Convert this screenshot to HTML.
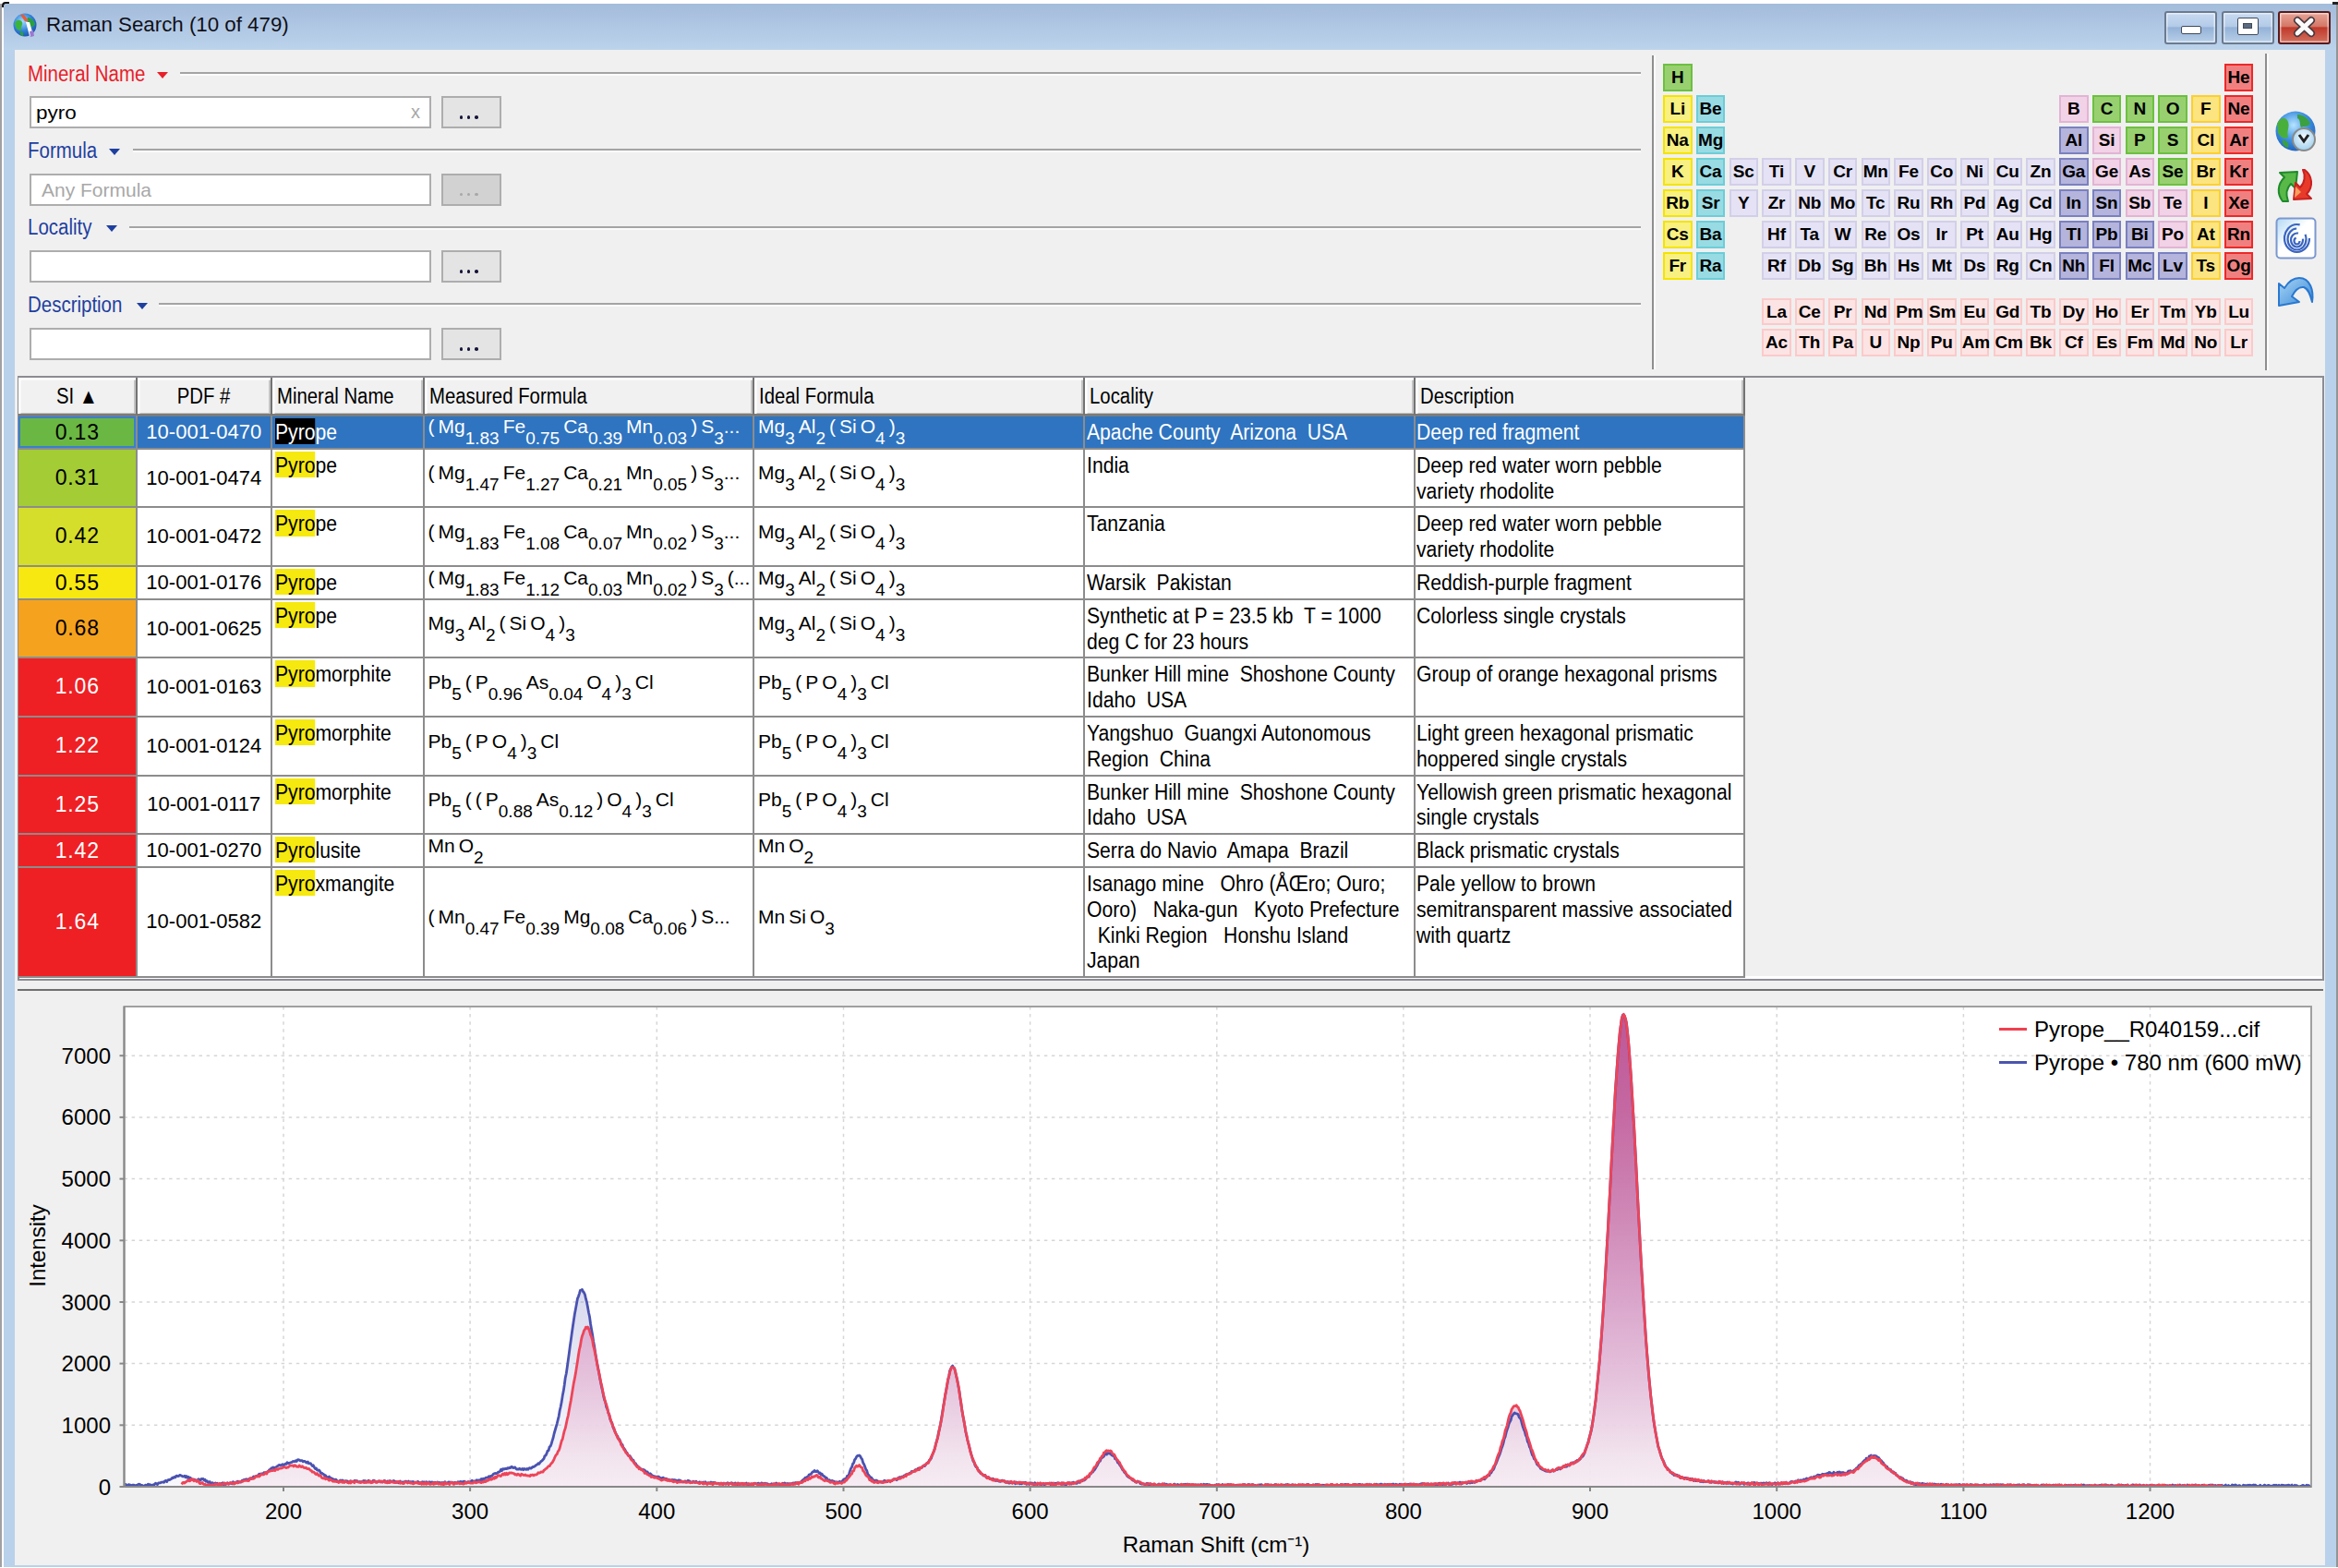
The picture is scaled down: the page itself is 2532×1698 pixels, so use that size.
<!DOCTYPE html>
<html><head><meta charset="utf-8">
<style>
*{margin:0;padding:0;box-sizing:border-box}
html,body{width:2532px;height:1698px;overflow:hidden;background:#ffffff}
body{position:relative;font-family:"Liberation Sans", sans-serif}
div{position:absolute}
.frame{left:0;top:4px;width:2532px;height:1693px;background:#b9d1ea;border-left:2px solid #a0a0a4;border-right:2px solid #949494;box-shadow:inset 2px 0 0 #fff}
.tbar{left:4px;top:4px;width:2526px;height:50px;background:linear-gradient(#a3bcdb,#bcd3ec)}
.content{left:16px;top:54px;width:2502px;height:1641px;background:#f0f0f0}
.title{left:50px;top:14px;font-size:22.3px;color:#101018;white-space:nowrap}
.lbl{font-size:23px;white-space:nowrap;line-height:22px;transform:scaleX(0.89);transform-origin:0 0}
.tri{width:0;height:0;border-left:6px solid transparent;border-right:6px solid transparent;border-top:7px solid}
.sep{height:2px;background:#a4a4a4;box-shadow:0 2px 0 #fbfbfb}
.inp{width:435px;height:35px;background:#fff;border:2px solid #adadad}
.btn{width:65px;height:35px;border:2px solid #adadad;text-align:center;font-size:22px;line-height:26px;font-weight:bold;letter-spacing:1px}
.itxt{font-size:21px;line-height:35px;color:#000;white-space:nowrap}
.el{width:31.5px;height:29.5px;border:2.5px solid;font-weight:bold;font-size:19px;line-height:26px;text-align:center;color:#000;letter-spacing:-0.2px;white-space:nowrap;overflow:visible}
.vsep{width:2px;background:#8e8e8e;box-shadow:2px 0 0 #fbfbfb}
.tpane{left:18.5px;top:407px;width:2498px;height:655px;border:2px solid #8c8c94;background:#f0f0f0;box-shadow:inset 0 -3px 0 #fff}
.hd{height:41.5px;background:#f1f1f1;border-right:2px solid #737373;border-bottom:3px solid #7c7c7c;box-shadow:inset 2.5px 2.5px 0 #fff, inset -2px -1px 0 #c4c4c4;font-size:21px;line-height:41px;padding:0 5px;white-space:nowrap;color:#000}
.hs{display:inline-block;font-size:23px;transform:scaleX(0.885)}
.rw{}
.gl{background:#8c8c8c}
.si{font-size:23px;text-align:center;letter-spacing:0.8px;text-indent:1px}
.cv{display:flex;align-items:center;font-size:21px;white-space:nowrap;overflow:hidden}
.ct{font-size:23.5px;line-height:27.8px;white-space:nowrap;transform:scaleX(0.9);transform-origin:0 0}
.hl{position:relative;padding:2px 0 0.3px 0}
.fm sub{font-size:19px;vertical-align:-11.5px;line-height:0}
.fm{padding-bottom:10px}
.sp{display:inline-block;width:4px}
.chart{position:absolute;left:0;top:0}
.ax{font-family:"Liberation Sans", sans-serif;font-size:24px;fill:#000}
</style></head><body>
<div class="frame"></div>
<div class="tbar"></div>
<div class="content"></div>
<div class="title">Raman Search (10 of 479)</div>
<div class="lbl" style="left:30px;top:68.5px;color:#e8202a">Mineral Name</div>
<div class="tri" style="left:170.0px;top:77.5px;border-top-color:#e8202a"></div>
<div class="sep" style="left:195px;top:78.0px;width:1582px"></div>
<div class="lbl" style="left:30px;top:151.5px;color:#1f3f9f">Formula</div>
<div class="tri" style="left:118.0px;top:160.5px;border-top-color:#1f3f9f"></div>
<div class="sep" style="left:144px;top:161.0px;width:1633px"></div>
<div class="lbl" style="left:30px;top:235.0px;color:#1f3f9f">Locality</div>
<div class="tri" style="left:114.5px;top:244.0px;border-top-color:#1f3f9f"></div>
<div class="sep" style="left:140px;top:244.5px;width:1637px"></div>
<div class="lbl" style="left:30px;top:318.5px;color:#1f3f9f">Description</div>
<div class="tri" style="left:148.0px;top:327.5px;border-top-color:#1f3f9f"></div>
<div class="sep" style="left:172px;top:328.0px;width:1605px"></div>
<div class="inp" style="left:32px;top:104.0px"></div>
<div class="btn" style="left:478px;top:104.0px;background:#e4e4e4"></div>
<div style="left:497.6px;top:125.2px;width:3.6px;height:3.6px;border-radius:50%;background:#15153a"></div>
<div style="left:505.9px;top:125.2px;width:3.6px;height:3.6px;border-radius:50%;background:#15153a"></div>
<div style="left:514.0px;top:125.2px;width:3.6px;height:3.6px;border-radius:50%;background:#15153a"></div>
<div class="inp" style="left:32px;top:187.5px"></div>
<div class="btn" style="left:478px;top:187.5px;background:#d2d2d2"></div>
<div style="left:497.6px;top:208.7px;width:3.6px;height:3.6px;border-radius:50%;background:#a8a8a8"></div>
<div style="left:505.9px;top:208.7px;width:3.6px;height:3.6px;border-radius:50%;background:#a8a8a8"></div>
<div style="left:514.0px;top:208.7px;width:3.6px;height:3.6px;border-radius:50%;background:#a8a8a8"></div>
<div class="inp" style="left:32px;top:271.2px"></div>
<div class="btn" style="left:478px;top:271.2px;background:#e4e4e4"></div>
<div style="left:497.6px;top:292.4px;width:3.6px;height:3.6px;border-radius:50%;background:#15153a"></div>
<div style="left:505.9px;top:292.4px;width:3.6px;height:3.6px;border-radius:50%;background:#15153a"></div>
<div style="left:514.0px;top:292.4px;width:3.6px;height:3.6px;border-radius:50%;background:#15153a"></div>
<div class="inp" style="left:32px;top:355.0px"></div>
<div class="btn" style="left:478px;top:355.0px;background:#e4e4e4"></div>
<div style="left:497.6px;top:376.2px;width:3.6px;height:3.6px;border-radius:50%;background:#15153a"></div>
<div style="left:505.9px;top:376.2px;width:3.6px;height:3.6px;border-radius:50%;background:#15153a"></div>
<div style="left:514.0px;top:376.2px;width:3.6px;height:3.6px;border-radius:50%;background:#15153a"></div>
<div class="itxt" style="left:39px;top:104px;transform:scaleX(1.07);transform-origin:0 0">pyro</div>
<div class="itxt" style="left:445px;top:104px;color:#a8a8a8;font-size:20px">x</div>
<div class="itxt" style="left:45px;top:187.5px;color:#a8a8a8">Any Formula</div>
<div class="vsep" style="left:1789px;top:60px;height:340px"></div>
<div class="vsep" style="left:2452.5px;top:58px;height:343px"></div>
<div class="el" style="left:1801.0px;top:69.0px;background:#98d070;border-color:#6cc040">H</div>
<div class="el" style="left:2408.8px;top:69.0px;background:#f08080;border-color:#ee2828">He</div>
<div class="el" style="left:1801.0px;top:103.1px;background:#f8f080;border-color:#f4e400">Li</div>
<div class="el" style="left:1836.8px;top:103.1px;background:#98dbe3;border-color:#6ccdd8">Be</div>
<div class="el" style="left:2230.0px;top:103.1px;background:#f2d2e6;border-color:#e2b4d4">B</div>
<div class="el" style="left:2265.8px;top:103.1px;background:#98d070;border-color:#6cc040">C</div>
<div class="el" style="left:2301.5px;top:103.1px;background:#98d070;border-color:#6cc040">N</div>
<div class="el" style="left:2337.2px;top:103.1px;background:#98d070;border-color:#6cc040">O</div>
<div class="el" style="left:2373.0px;top:103.1px;background:#fce480;border-color:#fcd030">F</div>
<div class="el" style="left:2408.8px;top:103.1px;background:#f08080;border-color:#ee2828">Ne</div>
<div class="el" style="left:1801.0px;top:137.1px;background:#f8f080;border-color:#f4e400">Na</div>
<div class="el" style="left:1836.8px;top:137.1px;background:#98dbe3;border-color:#6ccdd8">Mg</div>
<div class="el" style="left:2230.0px;top:137.1px;background:#b4b4dc;border-color:#7a80c0">Al</div>
<div class="el" style="left:2265.8px;top:137.1px;background:#f2d2e6;border-color:#e2b4d4">Si</div>
<div class="el" style="left:2301.5px;top:137.1px;background:#98d070;border-color:#6cc040">P</div>
<div class="el" style="left:2337.2px;top:137.1px;background:#98d070;border-color:#6cc040">S</div>
<div class="el" style="left:2373.0px;top:137.1px;background:#fce480;border-color:#fcd030">Cl</div>
<div class="el" style="left:2408.8px;top:137.1px;background:#f08080;border-color:#ee2828">Ar</div>
<div class="el" style="left:1801.0px;top:171.2px;background:#f8f080;border-color:#f4e400">K</div>
<div class="el" style="left:1836.8px;top:171.2px;background:#98dbe3;border-color:#6ccdd8">Ca</div>
<div class="el" style="left:1872.5px;top:171.2px;background:#e4e2f4;border-color:#d2cfe9">Sc</div>
<div class="el" style="left:1908.2px;top:171.2px;background:#e4e2f4;border-color:#d2cfe9">Ti</div>
<div class="el" style="left:1944.0px;top:171.2px;background:#e4e2f4;border-color:#d2cfe9">V</div>
<div class="el" style="left:1979.8px;top:171.2px;background:#e4e2f4;border-color:#d2cfe9">Cr</div>
<div class="el" style="left:2015.5px;top:171.2px;background:#e4e2f4;border-color:#d2cfe9">Mn</div>
<div class="el" style="left:2051.2px;top:171.2px;background:#e4e2f4;border-color:#d2cfe9">Fe</div>
<div class="el" style="left:2087.0px;top:171.2px;background:#e4e2f4;border-color:#d2cfe9">Co</div>
<div class="el" style="left:2122.8px;top:171.2px;background:#e4e2f4;border-color:#d2cfe9">Ni</div>
<div class="el" style="left:2158.5px;top:171.2px;background:#e4e2f4;border-color:#d2cfe9">Cu</div>
<div class="el" style="left:2194.2px;top:171.2px;background:#e4e2f4;border-color:#d2cfe9">Zn</div>
<div class="el" style="left:2230.0px;top:171.2px;background:#b4b4dc;border-color:#7a80c0">Ga</div>
<div class="el" style="left:2265.8px;top:171.2px;background:#f2d2e6;border-color:#e2b4d4">Ge</div>
<div class="el" style="left:2301.5px;top:171.2px;background:#f2d2e6;border-color:#e2b4d4">As</div>
<div class="el" style="left:2337.2px;top:171.2px;background:#98d070;border-color:#6cc040">Se</div>
<div class="el" style="left:2373.0px;top:171.2px;background:#fce480;border-color:#fcd030">Br</div>
<div class="el" style="left:2408.8px;top:171.2px;background:#f08080;border-color:#ee2828">Kr</div>
<div class="el" style="left:1801.0px;top:205.3px;background:#f8f080;border-color:#f4e400">Rb</div>
<div class="el" style="left:1836.8px;top:205.3px;background:#98dbe3;border-color:#6ccdd8">Sr</div>
<div class="el" style="left:1872.5px;top:205.3px;background:#e4e2f4;border-color:#d2cfe9">Y</div>
<div class="el" style="left:1908.2px;top:205.3px;background:#e4e2f4;border-color:#d2cfe9">Zr</div>
<div class="el" style="left:1944.0px;top:205.3px;background:#e4e2f4;border-color:#d2cfe9">Nb</div>
<div class="el" style="left:1979.8px;top:205.3px;background:#e4e2f4;border-color:#d2cfe9">Mo</div>
<div class="el" style="left:2015.5px;top:205.3px;background:#e4e2f4;border-color:#d2cfe9">Tc</div>
<div class="el" style="left:2051.2px;top:205.3px;background:#e4e2f4;border-color:#d2cfe9">Ru</div>
<div class="el" style="left:2087.0px;top:205.3px;background:#e4e2f4;border-color:#d2cfe9">Rh</div>
<div class="el" style="left:2122.8px;top:205.3px;background:#e4e2f4;border-color:#d2cfe9">Pd</div>
<div class="el" style="left:2158.5px;top:205.3px;background:#e4e2f4;border-color:#d2cfe9">Ag</div>
<div class="el" style="left:2194.2px;top:205.3px;background:#e4e2f4;border-color:#d2cfe9">Cd</div>
<div class="el" style="left:2230.0px;top:205.3px;background:#b4b4dc;border-color:#7a80c0">In</div>
<div class="el" style="left:2265.8px;top:205.3px;background:#b4b4dc;border-color:#7a80c0">Sn</div>
<div class="el" style="left:2301.5px;top:205.3px;background:#f2d2e6;border-color:#e2b4d4">Sb</div>
<div class="el" style="left:2337.2px;top:205.3px;background:#f2d2e6;border-color:#e2b4d4">Te</div>
<div class="el" style="left:2373.0px;top:205.3px;background:#fce480;border-color:#fcd030">I</div>
<div class="el" style="left:2408.8px;top:205.3px;background:#f08080;border-color:#ee2828">Xe</div>
<div class="el" style="left:1801.0px;top:239.3px;background:#f8f080;border-color:#f4e400">Cs</div>
<div class="el" style="left:1836.8px;top:239.3px;background:#98dbe3;border-color:#6ccdd8">Ba</div>
<div class="el" style="left:1908.2px;top:239.3px;background:#e4e2f4;border-color:#d2cfe9">Hf</div>
<div class="el" style="left:1944.0px;top:239.3px;background:#e4e2f4;border-color:#d2cfe9">Ta</div>
<div class="el" style="left:1979.8px;top:239.3px;background:#e4e2f4;border-color:#d2cfe9">W</div>
<div class="el" style="left:2015.5px;top:239.3px;background:#e4e2f4;border-color:#d2cfe9">Re</div>
<div class="el" style="left:2051.2px;top:239.3px;background:#e4e2f4;border-color:#d2cfe9">Os</div>
<div class="el" style="left:2087.0px;top:239.3px;background:#e4e2f4;border-color:#d2cfe9">Ir</div>
<div class="el" style="left:2122.8px;top:239.3px;background:#e4e2f4;border-color:#d2cfe9">Pt</div>
<div class="el" style="left:2158.5px;top:239.3px;background:#e4e2f4;border-color:#d2cfe9">Au</div>
<div class="el" style="left:2194.2px;top:239.3px;background:#e4e2f4;border-color:#d2cfe9">Hg</div>
<div class="el" style="left:2230.0px;top:239.3px;background:#b4b4dc;border-color:#7a80c0">Tl</div>
<div class="el" style="left:2265.8px;top:239.3px;background:#b4b4dc;border-color:#7a80c0">Pb</div>
<div class="el" style="left:2301.5px;top:239.3px;background:#b4b4dc;border-color:#7a80c0">Bi</div>
<div class="el" style="left:2337.2px;top:239.3px;background:#f2d2e6;border-color:#e2b4d4">Po</div>
<div class="el" style="left:2373.0px;top:239.3px;background:#fce480;border-color:#fcd030">At</div>
<div class="el" style="left:2408.8px;top:239.3px;background:#f08080;border-color:#ee2828">Rn</div>
<div class="el" style="left:1801.0px;top:273.4px;background:#f8f080;border-color:#f4e400">Fr</div>
<div class="el" style="left:1836.8px;top:273.4px;background:#98dbe3;border-color:#6ccdd8">Ra</div>
<div class="el" style="left:1908.2px;top:273.4px;background:#e4e2f4;border-color:#d2cfe9">Rf</div>
<div class="el" style="left:1944.0px;top:273.4px;background:#e4e2f4;border-color:#d2cfe9">Db</div>
<div class="el" style="left:1979.8px;top:273.4px;background:#e4e2f4;border-color:#d2cfe9">Sg</div>
<div class="el" style="left:2015.5px;top:273.4px;background:#e4e2f4;border-color:#d2cfe9">Bh</div>
<div class="el" style="left:2051.2px;top:273.4px;background:#e4e2f4;border-color:#d2cfe9">Hs</div>
<div class="el" style="left:2087.0px;top:273.4px;background:#e4e2f4;border-color:#d2cfe9">Mt</div>
<div class="el" style="left:2122.8px;top:273.4px;background:#e4e2f4;border-color:#d2cfe9">Ds</div>
<div class="el" style="left:2158.5px;top:273.4px;background:#e4e2f4;border-color:#d2cfe9">Rg</div>
<div class="el" style="left:2194.2px;top:273.4px;background:#e4e2f4;border-color:#d2cfe9">Cn</div>
<div class="el" style="left:2230.0px;top:273.4px;background:#b4b4dc;border-color:#7a80c0">Nh</div>
<div class="el" style="left:2265.8px;top:273.4px;background:#b4b4dc;border-color:#7a80c0">Fl</div>
<div class="el" style="left:2301.5px;top:273.4px;background:#b4b4dc;border-color:#7a80c0">Mc</div>
<div class="el" style="left:2337.2px;top:273.4px;background:#b4b4dc;border-color:#7a80c0">Lv</div>
<div class="el" style="left:2373.0px;top:273.4px;background:#fce480;border-color:#fcd030">Ts</div>
<div class="el" style="left:2408.8px;top:273.4px;background:#f08080;border-color:#ee2828">Og</div>
<div class="el" style="left:1908.2px;top:322.5px;background:#fde4e4;border-color:#fbcaca">La</div>
<div class="el" style="left:1944.0px;top:322.5px;background:#fde4e4;border-color:#fbcaca">Ce</div>
<div class="el" style="left:1979.8px;top:322.5px;background:#fde4e4;border-color:#fbcaca">Pr</div>
<div class="el" style="left:2015.5px;top:322.5px;background:#fde4e4;border-color:#fbcaca">Nd</div>
<div class="el" style="left:2051.2px;top:322.5px;background:#fde4e4;border-color:#fbcaca">Pm</div>
<div class="el" style="left:2087.0px;top:322.5px;background:#fde4e4;border-color:#fbcaca">Sm</div>
<div class="el" style="left:2122.8px;top:322.5px;background:#fde4e4;border-color:#fbcaca">Eu</div>
<div class="el" style="left:2158.5px;top:322.5px;background:#fde4e4;border-color:#fbcaca">Gd</div>
<div class="el" style="left:2194.2px;top:322.5px;background:#fde4e4;border-color:#fbcaca">Tb</div>
<div class="el" style="left:2230.0px;top:322.5px;background:#fde4e4;border-color:#fbcaca">Dy</div>
<div class="el" style="left:2265.8px;top:322.5px;background:#fde4e4;border-color:#fbcaca">Ho</div>
<div class="el" style="left:2301.5px;top:322.5px;background:#fde4e4;border-color:#fbcaca">Er</div>
<div class="el" style="left:2337.2px;top:322.5px;background:#fde4e4;border-color:#fbcaca">Tm</div>
<div class="el" style="left:2373.0px;top:322.5px;background:#fde4e4;border-color:#fbcaca">Yb</div>
<div class="el" style="left:2408.8px;top:322.5px;background:#fde4e4;border-color:#fbcaca">Lu</div>
<div class="el" style="left:1908.2px;top:356.2px;background:#fde4e4;border-color:#fbcaca">Ac</div>
<div class="el" style="left:1944.0px;top:356.2px;background:#fde4e4;border-color:#fbcaca">Th</div>
<div class="el" style="left:1979.8px;top:356.2px;background:#fde4e4;border-color:#fbcaca">Pa</div>
<div class="el" style="left:2015.5px;top:356.2px;background:#fde4e4;border-color:#fbcaca">U</div>
<div class="el" style="left:2051.2px;top:356.2px;background:#fde4e4;border-color:#fbcaca">Np</div>
<div class="el" style="left:2087.0px;top:356.2px;background:#fde4e4;border-color:#fbcaca">Pu</div>
<div class="el" style="left:2122.8px;top:356.2px;background:#fde4e4;border-color:#fbcaca">Am</div>
<div class="el" style="left:2158.5px;top:356.2px;background:#fde4e4;border-color:#fbcaca">Cm</div>
<div class="el" style="left:2194.2px;top:356.2px;background:#fde4e4;border-color:#fbcaca">Bk</div>
<div class="el" style="left:2230.0px;top:356.2px;background:#fde4e4;border-color:#fbcaca">Cf</div>
<div class="el" style="left:2265.8px;top:356.2px;background:#fde4e4;border-color:#fbcaca">Es</div>
<div class="el" style="left:2301.5px;top:356.2px;background:#fde4e4;border-color:#fbcaca">Fm</div>
<div class="el" style="left:2337.2px;top:356.2px;background:#fde4e4;border-color:#fbcaca">Md</div>
<div class="el" style="left:2373.0px;top:356.2px;background:#fde4e4;border-color:#fbcaca">No</div>
<div class="el" style="left:2408.8px;top:356.2px;background:#fde4e4;border-color:#fbcaca">Lr</div>
<div class="tpane"></div>
<div class="hd" style="left:19.5px;top:409px;width:129.5px;text-align:center"><span class="hs" style="transform-origin:50% 50%">SI &#9650;</span></div>
<div class="hd" style="left:149.0px;top:409px;width:145.5px;text-align:center"><span class="hs" style="transform-origin:50% 50%">PDF #</span></div>
<div class="hd" style="left:294.5px;top:409px;width:165.0px;text-align:left"><span class="hs" style="transform-origin:0 50%">Mineral Name</span></div>
<div class="hd" style="left:459.5px;top:409px;width:357.5px;text-align:left"><span class="hs" style="transform-origin:0 50%">Measured Formula</span></div>
<div class="hd" style="left:817.0px;top:409px;width:358.0px;text-align:left"><span class="hs" style="transform-origin:0 50%">Ideal Formula</span></div>
<div class="hd" style="left:1175.0px;top:409px;width:357.5px;text-align:left"><span class="hs" style="transform-origin:0 50%">Locality</span></div>
<div class="hd" style="left:1532.5px;top:409px;width:357.5px;text-align:left"><span class="hs" style="transform-origin:0 50%">Description</span></div>
<div class="rw" style="top:450.5px;height:34.3px;left:149.0px;width:1741.0px;background:#2f74c0"></div>
<div class="si" style="left:19.5px;top:450.5px;width:127.5px;height:34.3px;line-height:34.3px;background:#6ab843;color:#000000;box-shadow:inset 0 0 0 2px #3a7fd0;">0.13</div>
<div class="cv" style="left:149.0px;top:450.5px;width:143.5px;height:34.3px;color:#ffffff;justify-content:center"><span class="pdf" style="font-size:22px">10-001-0470</span></div>
<div class="ct" style="left:298.0px;top:454.5px;color:#ffffff"><span class="hl" style="background:#000000;color:#ffffff">Pyro</span>pe</div>
<div class="cv fm" style="left:463.5px;top:450.5px;width:351.5px;height:34.3px;color:#ffffff"><span>(<span class="sp"> </span>Mg<sub>1.83</sub><span class="sp"> </span>Fe<sub>0.75</sub><span class="sp"> </span>Ca<sub>0.39</sub><span class="sp"> </span>Mn<sub>0.03</sub><span class="sp"> </span>)<span class="sp"> </span>S<sub>3</sub>...</span></div>
<div class="cv fm" style="left:821.0px;top:450.5px;width:352.0px;height:34.3px;color:#ffffff"><span>Mg<sub>3</sub><span class="sp"> </span>Al<sub>2</sub><span class="sp"> </span>(<span class="sp"> </span>Si<span class="sp"> </span>O<sub>4</sub><span class="sp"> </span>)<sub>3</sub></span></div>
<div class="ct ml" style="left:1177.0px;top:454.5px;color:#ffffff">Apache County&nbsp; Arizona&nbsp; USA</div>
<div class="ct ml" style="left:1533.7px;top:454.5px;color:#ffffff">Deep red fragment</div>
<div class="gl" style="left:19.5px;top:484.8px;width:1870.5px;height:2px"></div>
<div class="rw" style="top:486.8px;height:61.5px;left:149.0px;width:1741.0px;background:#ffffff"></div>
<div class="si" style="left:19.5px;top:486.8px;width:127.5px;height:61.5px;line-height:61.5px;background:#a3cc35;color:#000000;">0.31</div>
<div class="cv" style="left:149.0px;top:486.8px;width:143.5px;height:61.5px;color:#000000;justify-content:center"><span class="pdf" style="font-size:22px">10-001-0474</span></div>
<div class="ct" style="left:298.0px;top:490.8px;color:#000000"><span class="hl" style="background:#f5e90f;color:#000000">Pyro</span>pe</div>
<div class="cv fm" style="left:463.5px;top:486.8px;width:351.5px;height:61.5px;color:#000000"><span>(<span class="sp"> </span>Mg<sub>1.47</sub><span class="sp"> </span>Fe<sub>1.27</sub><span class="sp"> </span>Ca<sub>0.21</sub><span class="sp"> </span>Mn<sub>0.05</sub><span class="sp"> </span>)<span class="sp"> </span>S<sub>3</sub>...</span></div>
<div class="cv fm" style="left:821.0px;top:486.8px;width:352.0px;height:61.5px;color:#000000"><span>Mg<sub>3</sub><span class="sp"> </span>Al<sub>2</sub><span class="sp"> </span>(<span class="sp"> </span>Si<span class="sp"> </span>O<sub>4</sub><span class="sp"> </span>)<sub>3</sub></span></div>
<div class="ct ml" style="left:1177.0px;top:490.8px;color:#000000">India</div>
<div class="ct ml" style="left:1533.7px;top:490.8px;color:#000000">Deep red water worn pebble<br>variety rhodolite</div>
<div class="gl" style="left:19.5px;top:548.3px;width:1870.5px;height:2px"></div>
<div class="rw" style="top:550.3px;height:61.5px;left:149.0px;width:1741.0px;background:#ffffff"></div>
<div class="si" style="left:19.5px;top:550.3px;width:127.5px;height:61.5px;line-height:61.5px;background:#d5de2a;color:#000000;">0.42</div>
<div class="cv" style="left:149.0px;top:550.3px;width:143.5px;height:61.5px;color:#000000;justify-content:center"><span class="pdf" style="font-size:22px">10-001-0472</span></div>
<div class="ct" style="left:298.0px;top:554.3px;color:#000000"><span class="hl" style="background:#f5e90f;color:#000000">Pyro</span>pe</div>
<div class="cv fm" style="left:463.5px;top:550.3px;width:351.5px;height:61.5px;color:#000000"><span>(<span class="sp"> </span>Mg<sub>1.83</sub><span class="sp"> </span>Fe<sub>1.08</sub><span class="sp"> </span>Ca<sub>0.07</sub><span class="sp"> </span>Mn<sub>0.02</sub><span class="sp"> </span>)<span class="sp"> </span>S<sub>3</sub>...</span></div>
<div class="cv fm" style="left:821.0px;top:550.3px;width:352.0px;height:61.5px;color:#000000"><span>Mg<sub>3</sub><span class="sp"> </span>Al<sub>2</sub><span class="sp"> </span>(<span class="sp"> </span>Si<span class="sp"> </span>O<sub>4</sub><span class="sp"> </span>)<sub>3</sub></span></div>
<div class="ct ml" style="left:1177.0px;top:554.3px;color:#000000">Tanzania</div>
<div class="ct ml" style="left:1533.7px;top:554.3px;color:#000000">Deep red water worn pebble<br>variety rhodolite</div>
<div class="gl" style="left:19.5px;top:611.8px;width:1870.5px;height:2px"></div>
<div class="rw" style="top:613.8px;height:34.2px;left:149.0px;width:1741.0px;background:#ffffff"></div>
<div class="si" style="left:19.5px;top:613.8px;width:127.5px;height:34.2px;line-height:34.2px;background:#f7e812;color:#000000;">0.55</div>
<div class="cv" style="left:149.0px;top:613.8px;width:143.5px;height:34.2px;color:#000000;justify-content:center"><span class="pdf" style="font-size:22px">10-001-0176</span></div>
<div class="ct" style="left:298.0px;top:617.8px;color:#000000"><span class="hl" style="background:#f5e90f;color:#000000">Pyro</span>pe</div>
<div class="cv fm" style="left:463.5px;top:613.8px;width:351.5px;height:34.2px;color:#000000"><span>(<span class="sp"> </span>Mg<sub>1.83</sub><span class="sp"> </span>Fe<sub>1.12</sub><span class="sp"> </span>Ca<sub>0.03</sub><span class="sp"> </span>Mn<sub>0.02</sub><span class="sp"> </span>)<span class="sp"> </span>S<sub>3</sub><span class="sp"> </span>(...</span></div>
<div class="cv fm" style="left:821.0px;top:613.8px;width:352.0px;height:34.2px;color:#000000"><span>Mg<sub>3</sub><span class="sp"> </span>Al<sub>2</sub><span class="sp"> </span>(<span class="sp"> </span>Si<span class="sp"> </span>O<sub>4</sub><span class="sp"> </span>)<sub>3</sub></span></div>
<div class="ct ml" style="left:1177.0px;top:617.8px;color:#000000">Warsik&nbsp; Pakistan</div>
<div class="ct ml" style="left:1533.7px;top:617.8px;color:#000000">Reddish-purple fragment</div>
<div class="gl" style="left:19.5px;top:648.0px;width:1870.5px;height:2px"></div>
<div class="rw" style="top:650.0px;height:61.3px;left:149.0px;width:1741.0px;background:#ffffff"></div>
<div class="si" style="left:19.5px;top:650.0px;width:127.5px;height:61.3px;line-height:61.3px;background:#f5a21f;color:#000000;">0.68</div>
<div class="cv" style="left:149.0px;top:650.0px;width:143.5px;height:61.3px;color:#000000;justify-content:center"><span class="pdf" style="font-size:22px">10-001-0625</span></div>
<div class="ct" style="left:298.0px;top:654.0px;color:#000000"><span class="hl" style="background:#f5e90f;color:#000000">Pyro</span>pe</div>
<div class="cv fm" style="left:463.5px;top:650.0px;width:351.5px;height:61.3px;color:#000000"><span>Mg<sub>3</sub><span class="sp"> </span>Al<sub>2</sub><span class="sp"> </span>(<span class="sp"> </span>Si<span class="sp"> </span>O<sub>4</sub><span class="sp"> </span>)<sub>3</sub></span></div>
<div class="cv fm" style="left:821.0px;top:650.0px;width:352.0px;height:61.3px;color:#000000"><span>Mg<sub>3</sub><span class="sp"> </span>Al<sub>2</sub><span class="sp"> </span>(<span class="sp"> </span>Si<span class="sp"> </span>O<sub>4</sub><span class="sp"> </span>)<sub>3</sub></span></div>
<div class="ct ml" style="left:1177.0px;top:654.0px;color:#000000">Synthetic at P = 23.5 kb&nbsp; T = 1000<br>deg C for 23 hours</div>
<div class="ct ml" style="left:1533.7px;top:654.0px;color:#000000">Colorless single crystals</div>
<div class="gl" style="left:19.5px;top:711.3px;width:1870.5px;height:2px"></div>
<div class="rw" style="top:713.3px;height:61.7px;left:149.0px;width:1741.0px;background:#ffffff"></div>
<div class="si" style="left:19.5px;top:713.3px;width:127.5px;height:61.7px;line-height:61.7px;background:#ee2024;color:#ffffff;">1.06</div>
<div class="cv" style="left:149.0px;top:713.3px;width:143.5px;height:61.7px;color:#000000;justify-content:center"><span class="pdf" style="font-size:22px">10-001-0163</span></div>
<div class="ct" style="left:298.0px;top:717.3px;color:#000000"><span class="hl" style="background:#f5e90f;color:#000000">Pyro</span>morphite</div>
<div class="cv fm" style="left:463.5px;top:713.3px;width:351.5px;height:61.7px;color:#000000"><span>Pb<sub>5</sub><span class="sp"> </span>(<span class="sp"> </span>P<sub>0.96</sub><span class="sp"> </span>As<sub>0.04</sub><span class="sp"> </span>O<sub>4</sub><span class="sp"> </span>)<sub>3</sub><span class="sp"> </span>Cl</span></div>
<div class="cv fm" style="left:821.0px;top:713.3px;width:352.0px;height:61.7px;color:#000000"><span>Pb<sub>5</sub><span class="sp"> </span>(<span class="sp"> </span>P<span class="sp"> </span>O<sub>4</sub><span class="sp"> </span>)<sub>3</sub><span class="sp"> </span>Cl</span></div>
<div class="ct ml" style="left:1177.0px;top:717.3px;color:#000000">Bunker Hill mine&nbsp; Shoshone County<br>Idaho&nbsp; USA</div>
<div class="ct ml" style="left:1533.7px;top:717.3px;color:#000000">Group of orange hexagonal prisms</div>
<div class="gl" style="left:19.5px;top:775.0px;width:1870.5px;height:2px"></div>
<div class="rw" style="top:777.0px;height:61.6px;left:149.0px;width:1741.0px;background:#ffffff"></div>
<div class="si" style="left:19.5px;top:777.0px;width:127.5px;height:61.6px;line-height:61.6px;background:#ee2024;color:#ffffff;">1.22</div>
<div class="cv" style="left:149.0px;top:777.0px;width:143.5px;height:61.6px;color:#000000;justify-content:center"><span class="pdf" style="font-size:22px">10-001-0124</span></div>
<div class="ct" style="left:298.0px;top:781.0px;color:#000000"><span class="hl" style="background:#f5e90f;color:#000000">Pyro</span>morphite</div>
<div class="cv fm" style="left:463.5px;top:777.0px;width:351.5px;height:61.6px;color:#000000"><span>Pb<sub>5</sub><span class="sp"> </span>(<span class="sp"> </span>P<span class="sp"> </span>O<sub>4</sub><span class="sp"> </span>)<sub>3</sub><span class="sp"> </span>Cl</span></div>
<div class="cv fm" style="left:821.0px;top:777.0px;width:352.0px;height:61.6px;color:#000000"><span>Pb<sub>5</sub><span class="sp"> </span>(<span class="sp"> </span>P<span class="sp"> </span>O<sub>4</sub><span class="sp"> </span>)<sub>3</sub><span class="sp"> </span>Cl</span></div>
<div class="ct ml" style="left:1177.0px;top:781.0px;color:#000000">Yangshuo&nbsp; Guangxi Autonomous<br>Region&nbsp; China</div>
<div class="ct ml" style="left:1533.7px;top:781.0px;color:#000000">Light green hexagonal prismatic<br>hoppered single crystals</div>
<div class="gl" style="left:19.5px;top:838.6px;width:1870.5px;height:2px"></div>
<div class="rw" style="top:840.6px;height:61.4px;left:149.0px;width:1741.0px;background:#ffffff"></div>
<div class="si" style="left:19.5px;top:840.6px;width:127.5px;height:61.4px;line-height:61.4px;background:#ee2024;color:#ffffff;">1.25</div>
<div class="cv" style="left:149.0px;top:840.6px;width:143.5px;height:61.4px;color:#000000;justify-content:center"><span class="pdf" style="font-size:22px">10-001-0117</span></div>
<div class="ct" style="left:298.0px;top:844.6px;color:#000000"><span class="hl" style="background:#f5e90f;color:#000000">Pyro</span>morphite</div>
<div class="cv fm" style="left:463.5px;top:840.6px;width:351.5px;height:61.4px;color:#000000"><span>Pb<sub>5</sub><span class="sp"> </span>(<span class="sp"> </span>(<span class="sp"> </span>P<sub>0.88</sub><span class="sp"> </span>As<sub>0.12</sub><span class="sp"> </span>)<span class="sp"> </span>O<sub>4</sub><span class="sp"> </span>)<sub>3</sub><span class="sp"> </span>Cl</span></div>
<div class="cv fm" style="left:821.0px;top:840.6px;width:352.0px;height:61.4px;color:#000000"><span>Pb<sub>5</sub><span class="sp"> </span>(<span class="sp"> </span>P<span class="sp"> </span>O<sub>4</sub><span class="sp"> </span>)<sub>3</sub><span class="sp"> </span>Cl</span></div>
<div class="ct ml" style="left:1177.0px;top:844.6px;color:#000000">Bunker Hill mine&nbsp; Shoshone County<br>Idaho&nbsp; USA</div>
<div class="ct ml" style="left:1533.7px;top:844.6px;color:#000000">Yellowish green prismatic hexagonal<br>single crystals</div>
<div class="gl" style="left:19.5px;top:902.0px;width:1870.5px;height:2px"></div>
<div class="rw" style="top:904.0px;height:34.0px;left:149.0px;width:1741.0px;background:#ffffff"></div>
<div class="si" style="left:19.5px;top:904.0px;width:127.5px;height:34.0px;line-height:34.0px;background:#ee2024;color:#ffffff;">1.42</div>
<div class="cv" style="left:149.0px;top:904.0px;width:143.5px;height:34.0px;color:#000000;justify-content:center"><span class="pdf" style="font-size:22px">10-001-0270</span></div>
<div class="ct" style="left:298.0px;top:908.0px;color:#000000"><span class="hl" style="background:#f5e90f;color:#000000">Pyro</span>lusite</div>
<div class="cv fm" style="left:463.5px;top:904.0px;width:351.5px;height:34.0px;color:#000000"><span>Mn<span class="sp"> </span>O<sub>2</sub></span></div>
<div class="cv fm" style="left:821.0px;top:904.0px;width:352.0px;height:34.0px;color:#000000"><span>Mn<span class="sp"> </span>O<sub>2</sub></span></div>
<div class="ct ml" style="left:1177.0px;top:908.0px;color:#000000">Serra do Navio&nbsp; Amapa&nbsp; Brazil</div>
<div class="ct ml" style="left:1533.7px;top:908.0px;color:#000000">Black prismatic crystals</div>
<div class="gl" style="left:19.5px;top:938.0px;width:1870.5px;height:2px"></div>
<div class="rw" style="top:940.0px;height:116.8px;left:149.0px;width:1741.0px;background:#ffffff"></div>
<div class="si" style="left:19.5px;top:940.0px;width:127.5px;height:116.8px;line-height:116.8px;background:#ee2024;color:#ffffff;">1.64</div>
<div class="cv" style="left:149.0px;top:940.0px;width:143.5px;height:116.8px;color:#000000;justify-content:center"><span class="pdf" style="font-size:22px">10-001-0582</span></div>
<div class="ct" style="left:298.0px;top:944.0px;color:#000000"><span class="hl" style="background:#f5e90f;color:#000000">Pyro</span>xmangite</div>
<div class="cv fm" style="left:463.5px;top:940.0px;width:351.5px;height:116.8px;color:#000000"><span>(<span class="sp"> </span>Mn<sub>0.47</sub><span class="sp"> </span>Fe<sub>0.39</sub><span class="sp"> </span>Mg<sub>0.08</sub><span class="sp"> </span>Ca<sub>0.06</sub><span class="sp"> </span>)<span class="sp"> </span>S...</span></div>
<div class="cv fm" style="left:821.0px;top:940.0px;width:352.0px;height:116.8px;color:#000000"><span>Mn<span class="sp"> </span>Si<span class="sp"> </span>O<sub>3</sub></span></div>
<div class="ct ml" style="left:1177.0px;top:944.0px;color:#000000">Isanago mine&nbsp;&nbsp; Ohro (&#197;&#338;ro; Ouro;<br>Ooro)&nbsp;&nbsp; Naka-gun&nbsp;&nbsp; Kyoto Prefecture<br>&nbsp; Kinki Region&nbsp;&nbsp; Honshu Island<br>Japan</div>
<div class="ct ml" style="left:1533.7px;top:944.0px;color:#000000">Pale yellow to brown<br>semitransparent massive associated<br>with quartz</div>
<div class="gl" style="left:19.5px;top:1056.8px;width:1870.5px;height:2px"></div>
<div class="gl" style="left:147.0px;top:450px;width:2px;height:608.8px"></div>
<div class="gl" style="left:292.5px;top:450px;width:2px;height:608.8px"></div>
<div class="gl" style="left:457.5px;top:450px;width:2px;height:608.8px"></div>
<div class="gl" style="left:815.0px;top:450px;width:2px;height:608.8px"></div>
<div class="gl" style="left:1173.0px;top:450px;width:2px;height:608.8px"></div>
<div class="gl" style="left:1530.5px;top:450px;width:2px;height:608.8px"></div>
<div class="gl" style="left:1888.0px;top:450px;width:2px;height:608.8px"></div>
<div style="left:19px;top:1071px;width:2497px;height:2px;background:#707070"></div>
<svg class="chart" width="2532" height="1698" viewBox="0 0 2532 1698">
<defs><linearGradient id="gr" gradientUnits="userSpaceOnUse" x1="0" y1="1090" x2="0" y2="1610"><stop offset="0" stop-color="#bf5090"/><stop offset="0.21" stop-color="#c6619d"/><stop offset="0.40" stop-color="#ce7daf"/><stop offset="0.60" stop-color="#d99fc7"/><stop offset="0.79" stop-color="#e6c2dc"/><stop offset="0.94" stop-color="#f2e3ed"/><stop offset="1" stop-color="#f6ebf2"/></linearGradient>
<linearGradient id="gb" gradientUnits="userSpaceOnUse" x1="0" y1="1090" x2="0" y2="1610"><stop offset="0" stop-color="#5058b0" stop-opacity="0.55"/><stop offset="0.6" stop-color="#8088c8" stop-opacity="0.3"/><stop offset="1" stop-color="#a0a8e0" stop-opacity="0.08"/></linearGradient>
<clipPath id="cp"><rect x="134.5" y="1090.0" width="2368.5" height="520.0"/></clipPath></defs>
<rect x="134.5" y="1090.0" width="2368.5" height="520.0" fill="#ffffff"/>
<line x1="307.0" y1="1090.0" x2="307.0" y2="1610.0" stroke="#d6d6d6" stroke-width="1.5" stroke-dasharray="3.5 4.6"/>
<line x1="509.1" y1="1090.0" x2="509.1" y2="1610.0" stroke="#d6d6d6" stroke-width="1.5" stroke-dasharray="3.5 4.6"/>
<line x1="711.3" y1="1090.0" x2="711.3" y2="1610.0" stroke="#d6d6d6" stroke-width="1.5" stroke-dasharray="3.5 4.6"/>
<line x1="913.5" y1="1090.0" x2="913.5" y2="1610.0" stroke="#d6d6d6" stroke-width="1.5" stroke-dasharray="3.5 4.6"/>
<line x1="1115.6" y1="1090.0" x2="1115.6" y2="1610.0" stroke="#d6d6d6" stroke-width="1.5" stroke-dasharray="3.5 4.6"/>
<line x1="1317.8" y1="1090.0" x2="1317.8" y2="1610.0" stroke="#d6d6d6" stroke-width="1.5" stroke-dasharray="3.5 4.6"/>
<line x1="1519.9" y1="1090.0" x2="1519.9" y2="1610.0" stroke="#d6d6d6" stroke-width="1.5" stroke-dasharray="3.5 4.6"/>
<line x1="1722.0" y1="1090.0" x2="1722.0" y2="1610.0" stroke="#d6d6d6" stroke-width="1.5" stroke-dasharray="3.5 4.6"/>
<line x1="1924.2" y1="1090.0" x2="1924.2" y2="1610.0" stroke="#d6d6d6" stroke-width="1.5" stroke-dasharray="3.5 4.6"/>
<line x1="2126.4" y1="1090.0" x2="2126.4" y2="1610.0" stroke="#d6d6d6" stroke-width="1.5" stroke-dasharray="3.5 4.6"/>
<line x1="2328.5" y1="1090.0" x2="2328.5" y2="1610.0" stroke="#d6d6d6" stroke-width="1.5" stroke-dasharray="3.5 4.6"/>
<line x1="134.5" y1="1543.3" x2="2503.0" y2="1543.3" stroke="#d6d6d6" stroke-width="1.5" stroke-dasharray="3.5 4.6"/>
<line x1="134.5" y1="1476.6" x2="2503.0" y2="1476.6" stroke="#d6d6d6" stroke-width="1.5" stroke-dasharray="3.5 4.6"/>
<line x1="134.5" y1="1410.0" x2="2503.0" y2="1410.0" stroke="#d6d6d6" stroke-width="1.5" stroke-dasharray="3.5 4.6"/>
<line x1="134.5" y1="1343.3" x2="2503.0" y2="1343.3" stroke="#d6d6d6" stroke-width="1.5" stroke-dasharray="3.5 4.6"/>
<line x1="134.5" y1="1276.6" x2="2503.0" y2="1276.6" stroke="#d6d6d6" stroke-width="1.5" stroke-dasharray="3.5 4.6"/>
<line x1="134.5" y1="1209.9" x2="2503.0" y2="1209.9" stroke="#d6d6d6" stroke-width="1.5" stroke-dasharray="3.5 4.6"/>
<line x1="134.5" y1="1143.2" x2="2503.0" y2="1143.2" stroke="#d6d6d6" stroke-width="1.5" stroke-dasharray="3.5 4.6"/>
<g clip-path="url(#cp)">
<path d="M135.2 1607.5 L136.2 1607.5 L137.2 1609.4 L138.2 1609.4 L139.2 1607.7 L140.2 1607.9 L141.2 1608.1 L142.2 1608.8 L143.3 1608.2 L144.3 1608.2 L145.3 1608.2 L146.3 1609.1 L147.3 1608.5 L148.3 1608.6 L149.3 1607.8 L150.3 1607.2 L151.3 1607.3 L152.4 1608.2 L153.4 1608.4 L154.4 1608.7 L155.4 1609.2 L156.4 1609.2 L157.4 1608.2 L158.4 1608.5 L159.4 1608.3 L160.4 1607.2 L161.5 1607.9 L162.5 1607.7 L163.5 1608.4 L164.5 1608.7 L165.5 1608.0 L166.5 1608.3 L167.5 1607.4 L168.5 1606.2 L169.5 1606.7 L170.5 1607.6 L171.6 1605.9 L172.6 1605.9 L173.6 1605.8 L174.6 1605.2 L175.6 1605.2 L176.6 1604.8 L177.6 1605.4 L178.6 1603.7 L179.6 1603.3 L180.7 1604.6 L181.7 1602.9 L182.7 1602.5 L183.7 1602.5 L184.7 1601.9 L185.7 1601.5 L186.7 1600.1 L187.7 1600.5 L188.7 1599.4 L189.8 1599.9 L190.8 1598.4 L191.8 1598.1 L192.8 1598.7 L193.8 1598.3 L194.8 1597.4 L195.8 1597.8 L196.8 1598.3 L197.8 1598.9 L198.8 1598.9 L199.9 1598.3 L200.9 1599.8 L201.9 1598.6 L202.9 1600.3 L203.9 1599.3 L204.9 1601.0 L205.9 1600.1 L206.9 1601.0 L207.9 1601.8 L209.0 1602.1 L210.0 1602.1 L211.0 1602.4 L212.0 1603.1 L213.0 1603.4 L214.0 1602.7 L215.0 1601.7 L216.0 1602.2 L217.0 1603.2 L218.1 1601.5 L219.1 1601.6 L220.1 1601.4 L221.1 1603.1 L222.1 1602.3 L223.1 1604.3 L224.1 1603.6 L225.1 1604.9 L226.1 1605.5 L227.2 1604.6 L228.2 1606.6 L229.2 1606.0 L230.2 1605.6 L231.2 1607.0 L232.2 1607.3 L233.2 1605.9 L234.2 1606.9 L235.2 1606.3 L236.2 1607.8 L237.3 1607.1 L238.3 1607.5 L239.3 1606.4 L240.3 1607.6 L241.3 1605.7 L242.3 1607.6 L243.3 1606.1 L244.3 1607.5 L245.3 1606.9 L246.4 1605.7 L247.4 1607.0 L248.4 1606.8 L249.4 1605.6 L250.4 1606.2 L251.4 1606.8 L252.4 1604.6 L253.4 1606.3 L254.4 1606.3 L255.5 1605.5 L256.5 1604.8 L257.5 1604.3 L258.5 1605.4 L259.5 1604.8 L260.5 1605.2 L261.5 1604.1 L262.5 1603.1 L263.5 1602.9 L264.5 1602.3 L265.6 1602.3 L266.6 1601.8 L267.6 1601.8 L268.6 1602.0 L269.6 1602.2 L270.6 1600.9 L271.6 1601.3 L272.6 1601.4 L273.6 1600.2 L274.7 1598.9 L275.7 1600.1 L276.7 1598.7 L277.7 1598.7 L278.7 1598.0 L279.7 1598.3 L280.7 1596.1 L281.7 1597.2 L282.7 1596.0 L283.8 1595.9 L284.8 1596.3 L285.8 1594.6 L286.8 1595.0 L287.8 1594.7 L288.8 1594.3 L289.8 1593.5 L290.8 1593.2 L291.8 1591.5 L292.8 1591.3 L293.9 1589.8 L294.9 1589.5 L295.9 1588.9 L296.9 1590.1 L297.9 1589.2 L298.9 1589.1 L299.9 1588.0 L300.9 1587.5 L301.9 1586.7 L303.0 1586.5 L304.0 1587.1 L305.0 1586.4 L306.0 1585.8 L307.0 1586.6 L308.0 1586.2 L309.0 1585.1 L310.0 1585.4 L311.0 1583.8 L312.1 1584.5 L313.1 1584.5 L314.1 1584.1 L315.1 1583.7 L316.1 1583.5 L317.1 1582.6 L318.1 1582.5 L319.1 1582.7 L320.1 1581.8 L321.2 1582.5 L322.2 1580.9 L323.2 1580.7 L324.2 1581.1 L325.2 1581.8 L326.2 1581.6 L327.2 1581.6 L328.2 1582.9 L329.2 1582.3 L330.2 1582.4 L331.3 1583.5 L332.3 1584.1 L333.3 1583.1 L334.3 1584.6 L335.3 1584.8 L336.3 1584.7 L337.3 1586.0 L338.3 1587.5 L339.3 1586.8 L340.4 1588.9 L341.4 1590.5 L342.4 1589.9 L343.4 1591.9 L344.4 1592.3 L345.4 1592.0 L346.4 1593.2 L347.4 1595.4 L348.4 1595.2 L349.5 1596.0 L350.5 1596.5 L351.5 1597.8 L352.5 1597.6 L353.5 1599.3 L354.5 1599.5 L355.5 1599.8 L356.5 1599.1 L357.5 1601.4 L358.5 1600.4 L359.6 1602.0 L360.6 1601.5 L361.6 1602.3 L362.6 1602.4 L363.6 1602.1 L364.6 1603.1 L365.6 1603.9 L366.6 1604.1 L367.6 1604.3 L368.7 1602.9 L369.7 1603.4 L370.7 1602.9 L371.7 1603.5 L372.7 1605.1 L373.7 1603.8 L374.7 1603.6 L375.7 1603.8 L376.7 1604.3 L377.8 1604.6 L378.8 1604.4 L379.8 1603.7 L380.8 1604.9 L381.8 1604.3 L382.8 1604.4 L383.8 1603.4 L384.8 1603.7 L385.8 1603.5 L386.8 1603.7 L387.9 1604.8 L388.9 1604.9 L389.9 1604.4 L390.9 1604.9 L391.9 1604.5 L392.9 1603.9 L393.9 1603.4 L394.9 1604.1 L395.9 1603.6 L397.0 1605.1 L398.0 1604.6 L399.0 1603.2 L400.0 1605.0 L401.0 1604.4 L402.0 1605.1 L403.0 1605.1 L404.0 1603.4 L405.0 1603.2 L406.1 1603.9 L407.1 1605.0 L408.1 1604.7 L409.1 1604.8 L410.1 1603.9 L411.1 1603.9 L412.1 1604.4 L413.1 1604.2 L414.1 1605.1 L415.2 1604.2 L416.2 1603.4 L417.2 1603.8 L418.2 1605.2 L419.2 1604.3 L420.2 1603.9 L421.2 1604.9 L422.2 1603.6 L423.2 1604.6 L424.2 1604.1 L425.3 1604.7 L426.3 1603.5 L427.3 1604.0 L428.3 1604.5 L429.3 1605.4 L430.3 1604.8 L431.3 1605.7 L432.3 1604.6 L433.3 1604.0 L434.4 1605.5 L435.4 1604.9 L436.4 1605.0 L437.4 1605.2 L438.4 1604.5 L439.4 1604.1 L440.4 1604.6 L441.4 1605.2 L442.4 1604.1 L443.5 1605.5 L444.5 1604.7 L445.5 1604.9 L446.5 1604.7 L447.5 1604.5 L448.5 1605.9 L449.5 1605.1 L450.5 1605.6 L451.5 1605.0 L452.5 1604.4 L453.6 1605.2 L454.6 1606.5 L455.6 1605.6 L456.6 1605.1 L457.6 1604.7 L458.6 1605.2 L459.6 1604.9 L460.6 1606.6 L461.6 1604.7 L462.7 1605.1 L463.7 1605.4 L464.7 1604.8 L465.7 1604.8 L466.7 1606.5 L467.7 1605.0 L468.7 1605.1 L469.7 1606.3 L470.7 1605.2 L471.8 1605.5 L472.8 1606.4 L473.8 1605.0 L474.8 1606.5 L475.8 1605.4 L476.8 1605.8 L477.8 1606.2 L478.8 1605.5 L479.8 1605.7 L480.8 1606.3 L481.9 1604.6 L482.9 1606.5 L483.9 1606.6 L484.9 1605.6 L485.9 1604.8 L486.9 1605.2 L487.9 1605.0 L488.9 1605.5 L489.9 1605.1 L491.0 1605.8 L492.0 1605.9 L493.0 1605.3 L494.0 1606.3 L495.0 1606.2 L496.0 1604.7 L497.0 1605.9 L498.0 1604.6 L499.0 1604.5 L500.1 1605.2 L501.1 1604.6 L502.1 1604.3 L503.1 1604.1 L504.1 1605.6 L505.1 1605.4 L506.1 1604.9 L507.1 1604.6 L508.1 1604.9 L509.1 1605.4 L510.2 1604.2 L511.2 1603.2 L512.2 1604.4 L513.2 1603.9 L514.2 1604.1 L515.2 1603.8 L516.2 1602.7 L517.2 1603.7 L518.2 1602.8 L519.3 1602.9 L520.3 1602.6 L521.3 1601.5 L522.3 1603.1 L523.3 1601.2 L524.3 1602.0 L525.3 1600.9 L526.3 1600.2 L527.3 1600.1 L528.4 1600.2 L529.4 1598.8 L530.4 1600.0 L531.4 1598.3 L532.4 1598.3 L533.4 1597.5 L534.4 1596.2 L535.4 1595.7 L536.4 1595.5 L537.5 1595.6 L538.5 1595.2 L539.5 1594.1 L540.5 1594.0 L541.5 1593.3 L542.5 1591.3 L543.5 1592.6 L544.5 1590.6 L545.5 1591.1 L546.5 1590.7 L547.6 1590.4 L548.6 1590.7 L549.6 1589.6 L550.6 1590.1 L551.6 1589.4 L552.6 1589.7 L553.6 1588.5 L554.6 1588.5 L555.6 1589.6 L556.7 1589.3 L557.7 1588.9 L558.7 1590.3 L559.7 1591.0 L560.7 1590.9 L561.7 1591.2 L562.7 1590.3 L563.7 1591.1 L564.7 1591.3 L565.8 1590.5 L566.8 1591.7 L567.8 1590.5 L568.8 1590.9 L569.8 1591.4 L570.8 1590.4 L571.8 1591.3 L572.8 1590.0 L573.8 1589.6 L574.8 1590.2 L575.9 1589.5 L576.9 1588.5 L577.9 1588.5 L578.9 1588.0 L579.9 1587.1 L580.9 1586.3 L581.9 1586.0 L582.9 1584.7 L583.9 1585.3 L585.0 1583.6 L586.0 1582.5 L587.0 1581.9 L588.0 1580.6 L589.0 1579.7 L590.0 1576.5 L591.0 1576.2 L592.0 1574.1 L593.0 1571.3 L594.1 1570.7 L595.1 1566.8 L596.1 1566.1 L597.1 1563.7 L598.1 1560.1 L599.1 1557.0 L600.1 1552.5 L601.1 1549.0 L602.1 1545.5 L603.1 1542.1 L604.2 1537.6 L605.2 1533.6 L606.2 1527.5 L607.2 1523.3 L608.2 1518.1 L609.2 1511.6 L610.2 1506.6 L611.2 1500.0 L612.2 1492.2 L613.3 1487.2 L614.3 1480.2 L615.3 1473.0 L616.3 1465.7 L617.3 1458.0 L618.3 1451.1 L619.3 1443.7 L620.3 1436.8 L621.3 1430.0 L622.4 1422.8 L623.4 1417.4 L624.4 1411.9 L625.4 1406.4 L626.4 1404.0 L627.4 1400.8 L628.4 1397.3 L629.4 1397.1 L630.4 1396.4 L631.5 1398.7 L632.5 1399.8 L633.5 1402.0 L634.5 1406.7 L635.5 1410.2 L636.5 1415.4 L637.5 1421.3 L638.5 1425.8 L639.5 1433.2 L640.5 1439.2 L641.6 1445.2 L642.6 1452.2 L643.6 1457.4 L644.6 1464.1 L645.6 1470.1 L646.6 1476.1 L647.6 1480.9 L648.6 1486.3 L649.6 1491.9 L650.7 1497.7 L651.7 1502.6 L652.7 1506.9 L653.7 1512.2 L654.7 1516.2 L655.7 1518.2 L656.7 1523.8 L657.7 1525.5 L658.7 1529.4 L659.8 1532.1 L660.8 1536.9 L661.8 1539.2 L662.8 1540.9 L663.8 1545.2 L664.8 1547.5 L665.8 1549.4 L666.8 1552.0 L667.8 1554.3 L668.8 1555.3 L669.9 1558.6 L670.9 1558.7 L671.9 1561.2 L672.9 1564.4 L673.9 1564.3 L674.9 1567.4 L675.9 1568.6 L676.9 1570.0 L677.9 1572.4 L679.0 1573.2 L680.0 1575.6 L681.0 1576.7 L682.0 1576.5 L683.0 1578.0 L684.0 1579.9 L685.0 1580.8 L686.0 1581.5 L687.0 1584.2 L688.1 1584.5 L689.1 1586.3 L690.1 1587.4 L691.1 1588.3 L692.1 1589.0 L693.1 1590.2 L694.1 1590.7 L695.1 1591.2 L696.1 1591.4 L697.1 1591.6 L698.2 1592.2 L699.2 1593.3 L700.2 1594.3 L701.2 1594.0 L702.2 1596.2 L703.2 1596.9 L704.2 1595.8 L705.2 1596.7 L706.2 1598.0 L707.3 1598.1 L708.3 1598.7 L709.3 1598.8 L710.3 1599.1 L711.3 1599.5 L712.3 1599.0 L713.3 1599.2 L714.3 1600.0 L715.3 1600.5 L716.4 1601.1 L717.4 1600.4 L718.4 1600.1 L719.4 1601.9 L720.4 1601.1 L721.4 1601.3 L722.4 1601.6 L723.4 1603.1 L724.4 1602.2 L725.5 1603.1 L726.5 1603.2 L727.5 1602.5 L728.5 1602.5 L729.5 1602.7 L730.5 1602.6 L731.5 1602.8 L732.5 1603.4 L733.5 1604.4 L734.5 1603.0 L735.6 1603.0 L736.6 1603.1 L737.6 1603.7 L738.6 1604.9 L739.6 1604.7 L740.6 1605.0 L741.6 1603.9 L742.6 1604.2 L743.6 1605.1 L744.7 1603.5 L745.7 1603.5 L746.7 1603.8 L747.7 1604.8 L748.7 1605.2 L749.7 1605.4 L750.7 1604.2 L751.7 1604.5 L752.7 1605.5 L753.8 1604.2 L754.8 1605.0 L755.8 1605.4 L756.8 1605.4 L757.8 1604.8 L758.8 1605.5 L759.8 1605.1 L760.8 1606.3 L761.8 1605.1 L762.8 1606.0 L763.9 1604.7 L764.9 1606.3 L765.9 1606.1 L766.9 1605.7 L767.9 1606.0 L768.9 1605.8 L769.9 1605.0 L770.9 1606.5 L771.9 1605.4 L773.0 1605.6 L774.0 1605.4 L775.0 1606.2 L776.0 1606.2 L777.0 1606.5 L778.0 1606.2 L779.0 1606.7 L780.0 1606.9 L781.0 1606.3 L782.1 1606.9 L783.1 1606.4 L784.1 1606.2 L785.1 1606.8 L786.1 1607.1 L787.1 1606.2 L788.1 1605.7 L789.1 1607.1 L790.1 1606.3 L791.1 1606.2 L792.2 1605.7 L793.2 1606.2 L794.2 1607.0 L795.2 1607.2 L796.2 1605.9 L797.2 1607.1 L798.2 1607.7 L799.2 1605.9 L800.2 1607.4 L801.3 1607.1 L802.3 1607.1 L803.3 1607.3 L804.3 1606.3 L805.3 1607.1 L806.3 1606.9 L807.3 1607.0 L808.3 1606.1 L809.3 1607.9 L810.4 1606.7 L811.4 1607.7 L812.4 1607.6 L813.4 1606.7 L814.4 1607.2 L815.4 1607.9 L816.4 1606.8 L817.4 1606.1 L818.4 1606.7 L819.5 1607.0 L820.5 1606.3 L821.5 1606.1 L822.5 1607.7 L823.5 1607.4 L824.5 1606.0 L825.5 1606.1 L826.5 1607.7 L827.5 1606.6 L828.5 1606.2 L829.6 1606.8 L830.6 1606.6 L831.6 1607.0 L832.6 1607.6 L833.6 1607.7 L834.6 1608.0 L835.6 1606.7 L836.6 1607.8 L837.6 1606.8 L838.7 1607.3 L839.7 1607.2 L840.7 1606.0 L841.7 1607.3 L842.7 1607.1 L843.7 1607.3 L844.7 1607.6 L845.7 1607.6 L846.7 1606.9 L847.8 1606.3 L848.8 1607.8 L849.8 1606.0 L850.8 1606.5 L851.8 1607.8 L852.8 1606.4 L853.8 1607.0 L854.8 1606.7 L855.8 1607.5 L856.8 1606.6 L857.9 1606.5 L858.9 1605.9 L859.9 1606.2 L860.9 1605.8 L861.9 1605.5 L862.9 1606.4 L863.9 1606.5 L864.9 1605.3 L865.9 1605.6 L867.0 1605.2 L868.0 1604.3 L869.0 1603.2 L870.0 1602.4 L871.0 1601.6 L872.0 1600.2 L873.0 1601.1 L874.0 1599.3 L875.0 1599.3 L876.1 1597.1 L877.1 1596.7 L878.1 1596.4 L879.1 1595.3 L880.1 1593.8 L881.1 1593.7 L882.1 1592.4 L883.1 1593.5 L884.1 1593.6 L885.1 1592.7 L886.2 1593.9 L887.2 1595.6 L888.2 1594.9 L889.2 1596.7 L890.2 1596.3 L891.2 1597.9 L892.2 1598.4 L893.2 1599.1 L894.2 1600.7 L895.3 1600.5 L896.3 1603.2 L897.3 1603.1 L898.3 1602.6 L899.3 1604.8 L900.3 1603.8 L901.3 1603.4 L902.3 1604.2 L903.3 1604.1 L904.4 1605.9 L905.4 1605.0 L906.4 1604.9 L907.4 1605.2 L908.4 1605.2 L909.4 1604.2 L910.4 1605.3 L911.4 1605.3 L912.4 1603.7 L913.5 1602.3 L914.5 1601.9 L915.5 1601.3 L916.5 1601.0 L917.5 1598.3 L918.5 1598.5 L919.5 1596.2 L920.5 1592.9 L921.5 1590.3 L922.5 1588.8 L923.6 1585.1 L924.6 1584.2 L925.6 1580.7 L926.6 1579.6 L927.6 1577.5 L928.6 1576.5 L929.6 1576.4 L930.6 1576.0 L931.6 1576.9 L932.7 1579.0 L933.7 1580.4 L934.7 1584.1 L935.7 1585.7 L936.7 1588.3 L937.7 1591.1 L938.7 1592.3 L939.7 1596.1 L940.7 1597.3 L941.8 1598.8 L942.8 1600.3 L943.8 1600.1 L944.8 1601.9 L945.8 1602.7 L946.8 1603.4 L947.8 1603.8 L948.8 1603.0 L949.8 1603.5 L950.8 1604.0 L951.9 1605.1 L952.9 1604.2 L953.9 1605.2 L954.9 1604.8 L955.9 1605.4 L956.9 1603.9 L957.9 1603.3 L958.9 1603.9 L959.9 1603.9 L961.0 1604.5 L962.0 1603.9 L963.0 1603.7 L964.0 1603.6 L965.0 1603.8 L966.0 1603.7 L967.0 1602.3 L968.0 1601.6 L969.0 1601.6 L970.1 1601.7 L971.1 1602.7 L972.1 1601.8 L973.1 1600.2 L974.1 1599.6 L975.1 1600.1 L976.1 1599.6 L977.1 1599.0 L978.1 1599.4 L979.1 1598.0 L980.2 1598.2 L981.2 1596.7 L982.2 1597.1 L983.2 1596.1 L984.2 1595.8 L985.2 1595.4 L986.2 1595.0 L987.2 1593.5 L988.2 1593.4 L989.3 1593.6 L990.3 1592.9 L991.3 1591.6 L992.3 1591.5 L993.3 1591.2 L994.3 1590.1 L995.3 1591.4 L996.3 1590.0 L997.3 1589.4 L998.4 1589.3 L999.4 1587.6 L1000.4 1587.0 L1001.4 1587.5 L1002.4 1586.3 L1003.4 1585.0 L1004.4 1584.1 L1005.4 1583.6 L1006.4 1581.3 L1007.4 1580.6 L1008.5 1579.2 L1009.5 1575.9 L1010.5 1573.5 L1011.5 1571.3 L1012.5 1568.0 L1013.5 1563.5 L1014.5 1560.1 L1015.5 1556.7 L1016.5 1551.1 L1017.6 1546.9 L1018.6 1542.0 L1019.6 1535.8 L1020.6 1529.7 L1021.6 1523.3 L1022.6 1517.6 L1023.6 1511.3 L1024.6 1505.7 L1025.6 1500.5 L1026.7 1494.1 L1027.7 1490.0 L1028.7 1484.2 L1029.7 1482.4 L1030.7 1480.0 L1031.7 1479.1 L1032.7 1481.1 L1033.7 1481.7 L1034.7 1485.9 L1035.8 1490.7 L1036.8 1494.6 L1037.8 1500.7 L1038.8 1505.7 L1039.8 1513.1 L1040.8 1520.3 L1041.8 1526.9 L1042.8 1533.2 L1043.8 1538.3 L1044.8 1543.7 L1045.9 1550.7 L1046.9 1555.3 L1047.9 1559.8 L1048.9 1563.4 L1049.9 1567.4 L1050.9 1571.3 L1051.9 1575.2 L1052.9 1578.5 L1053.9 1582.0 L1055.0 1583.6 L1056.0 1586.8 L1057.0 1588.5 L1058.0 1589.1 L1059.0 1591.2 L1060.0 1592.2 L1061.0 1594.0 L1062.0 1595.4 L1063.0 1595.9 L1064.1 1596.6 L1065.1 1598.0 L1066.1 1597.4 L1067.1 1597.7 L1068.1 1600.0 L1069.1 1600.3 L1070.1 1599.6 L1071.1 1600.1 L1072.1 1601.6 L1073.1 1601.2 L1074.2 1602.2 L1075.2 1601.2 L1076.2 1602.0 L1077.2 1602.5 L1078.2 1603.5 L1079.2 1603.2 L1080.2 1603.2 L1081.2 1603.7 L1082.2 1604.2 L1083.3 1604.4 L1084.3 1603.5 L1085.3 1603.2 L1086.3 1603.5 L1087.3 1604.1 L1088.3 1603.9 L1089.3 1605.4 L1090.3 1605.4 L1091.3 1604.4 L1092.4 1606.0 L1093.4 1606.0 L1094.4 1604.6 L1095.4 1605.9 L1096.4 1606.0 L1097.4 1605.7 L1098.4 1604.8 L1099.4 1606.7 L1100.4 1604.9 L1101.4 1606.2 L1102.5 1605.7 L1103.5 1606.0 L1104.5 1606.8 L1105.5 1605.1 L1106.5 1606.8 L1107.5 1605.5 L1108.5 1605.4 L1109.5 1606.3 L1110.5 1605.3 L1111.6 1607.3 L1112.6 1607.1 L1113.6 1606.5 L1114.6 1607.4 L1115.6 1605.8 L1116.6 1606.5 L1117.6 1605.9 L1118.6 1607.1 L1119.6 1607.6 L1120.7 1605.8 L1121.7 1607.3 L1122.7 1606.9 L1123.7 1607.5 L1124.7 1606.6 L1125.7 1606.9 L1126.7 1607.5 L1127.7 1607.8 L1128.7 1607.2 L1129.8 1606.3 L1130.8 1607.6 L1131.8 1607.5 L1132.8 1606.6 L1133.8 1606.6 L1134.8 1606.3 L1135.8 1606.6 L1136.8 1606.2 L1137.8 1607.7 L1138.8 1606.0 L1139.9 1607.9 L1140.9 1607.7 L1141.9 1607.8 L1142.9 1606.3 L1143.9 1606.9 L1144.9 1606.0 L1145.9 1605.9 L1146.9 1605.9 L1147.9 1606.6 L1149.0 1607.2 L1150.0 1605.8 L1151.0 1606.3 L1152.0 1607.4 L1153.0 1606.6 L1154.0 1607.7 L1155.0 1607.7 L1156.0 1606.3 L1157.0 1606.1 L1158.1 1605.7 L1159.1 1605.9 L1160.1 1607.1 L1161.1 1605.7 L1162.1 1605.1 L1163.1 1605.6 L1164.1 1605.9 L1165.1 1606.1 L1166.1 1606.4 L1167.1 1604.9 L1168.2 1603.9 L1169.2 1605.4 L1170.2 1603.6 L1171.2 1603.0 L1172.2 1603.7 L1173.2 1602.1 L1174.2 1603.0 L1175.2 1602.1 L1176.2 1600.8 L1177.3 1599.3 L1178.3 1599.2 L1179.3 1599.2 L1180.3 1596.3 L1181.3 1596.0 L1182.3 1594.3 L1183.3 1594.2 L1184.3 1592.7 L1185.3 1591.8 L1186.4 1590.1 L1187.4 1588.1 L1188.4 1586.6 L1189.4 1584.5 L1190.4 1582.6 L1191.4 1582.2 L1192.4 1579.4 L1193.4 1578.6 L1194.4 1578.0 L1195.4 1577.2 L1196.5 1574.6 L1197.5 1574.4 L1198.5 1575.1 L1199.5 1573.4 L1200.5 1573.9 L1201.5 1574.0 L1202.5 1573.6 L1203.5 1575.4 L1204.5 1576.1 L1205.6 1576.5 L1206.6 1576.9 L1207.6 1579.9 L1208.6 1579.7 L1209.6 1581.4 L1210.6 1584.1 L1211.6 1584.6 L1212.6 1586.3 L1213.6 1587.6 L1214.7 1589.5 L1215.7 1591.5 L1216.7 1592.5 L1217.7 1594.4 L1218.7 1595.2 L1219.7 1596.6 L1220.7 1598.3 L1221.7 1599.1 L1222.7 1599.9 L1223.8 1600.6 L1224.8 1601.1 L1225.8 1601.4 L1226.8 1603.1 L1227.8 1603.1 L1228.8 1604.1 L1229.8 1604.8 L1230.8 1605.4 L1231.8 1604.0 L1232.8 1604.4 L1233.9 1604.9 L1234.9 1606.6 L1235.9 1606.8 L1236.9 1607.1 L1237.9 1606.9 L1238.9 1606.8 L1239.9 1607.8 L1240.9 1607.0 L1241.9 1606.5 L1243.0 1606.3 L1244.0 1607.8 L1245.0 1608.3 L1246.0 1606.6 L1247.0 1607.6 L1248.0 1607.8 L1249.0 1608.2 L1250.0 1608.0 L1251.0 1608.0 L1252.1 1608.1 L1253.1 1608.2 L1254.1 1607.6 L1255.1 1607.0 L1256.1 1608.1 L1257.1 1607.9 L1258.1 1607.8 L1259.1 1607.1 L1260.1 1607.2 L1261.1 1606.8 L1262.2 1608.6 L1263.2 1607.2 L1264.2 1608.3 L1265.2 1607.8 L1266.2 1607.9 L1267.2 1607.8 L1268.2 1608.4 L1269.2 1608.9 L1270.2 1609.1 L1271.3 1607.1 L1272.3 1607.2 L1273.3 1608.2 L1274.3 1609.0 L1275.3 1607.4 L1276.3 1608.1 L1277.3 1608.2 L1278.3 1607.8 L1279.3 1608.9 L1280.4 1608.8 L1281.4 1607.5 L1282.4 1607.7 L1283.4 1607.2 L1284.4 1608.3 L1285.4 1607.2 L1286.4 1607.4 L1287.4 1608.2 L1288.4 1607.4 L1289.4 1609.0 L1290.5 1609.2 L1291.5 1607.6 L1292.5 1609.0 L1293.5 1608.3 L1294.5 1607.8 L1295.5 1607.9 L1296.5 1608.9 L1297.5 1607.7 L1298.5 1609.3 L1299.6 1608.2 L1300.6 1607.5 L1301.6 1608.2 L1302.6 1608.8 L1303.6 1607.3 L1304.6 1607.9 L1305.6 1607.7 L1306.6 1607.5 L1307.6 1607.4 L1308.7 1608.2 L1309.7 1607.7 L1310.7 1608.4 L1311.7 1608.9 L1312.7 1608.9 L1313.7 1608.9 L1314.7 1609.4 L1315.7 1608.2 L1316.7 1608.6 L1317.8 1607.5 L1318.8 1609.4 L1319.8 1607.8 L1320.8 1609.1 L1321.8 1608.8 L1322.8 1608.9 L1323.8 1607.5 L1324.8 1608.1 L1325.8 1608.5 L1326.8 1609.1 L1327.9 1609.4 L1328.9 1608.7 L1329.9 1607.4 L1330.9 1608.6 L1331.9 1608.1 L1332.9 1607.6 L1333.9 1609.4 L1334.9 1608.8 L1335.9 1608.6 L1337.0 1609.1 L1338.0 1608.7 L1339.0 1608.1 L1340.0 1609.3 L1341.0 1608.1 L1342.0 1608.9 L1343.0 1608.1 L1344.0 1609.2 L1345.0 1607.9 L1346.1 1608.7 L1347.1 1607.8 L1348.1 1607.5 L1349.1 1608.3 L1350.1 1609.5 L1351.1 1608.8 L1352.1 1607.5 L1353.1 1608.2 L1354.1 1607.9 L1355.1 1608.5 L1356.2 1607.6 L1357.2 1607.6 L1358.2 1608.3 L1359.2 1608.3 L1360.2 1609.3 L1361.2 1609.5 L1362.2 1609.1 L1363.2 1608.0 L1364.2 1607.8 L1365.3 1607.9 L1366.3 1607.7 L1367.3 1609.5 L1368.3 1609.5 L1369.3 1609.0 L1370.3 1609.5 L1371.3 1608.3 L1372.3 1607.6 L1373.3 1607.6 L1374.4 1609.3 L1375.4 1608.1 L1376.4 1608.1 L1377.4 1608.2 L1378.4 1608.7 L1379.4 1609.1 L1380.4 1607.7 L1381.4 1607.6 L1382.4 1608.0 L1383.4 1608.4 L1384.5 1609.5 L1385.5 1609.0 L1386.5 1609.0 L1387.5 1609.0 L1388.5 1609.1 L1389.5 1608.1 L1390.5 1608.1 L1391.5 1609.2 L1392.5 1607.6 L1393.6 1609.6 L1394.6 1607.5 L1395.6 1608.3 L1396.6 1608.2 L1397.6 1609.0 L1398.6 1608.1 L1399.6 1607.7 L1400.6 1609.1 L1401.6 1609.3 L1402.7 1607.9 L1403.7 1609.0 L1404.7 1609.3 L1405.7 1608.5 L1406.7 1609.1 L1407.7 1609.1 L1408.7 1608.9 L1409.7 1609.4 L1410.7 1607.8 L1411.7 1608.3 L1412.8 1608.1 L1413.8 1608.9 L1414.8 1607.9 L1415.8 1607.5 L1416.8 1607.4 L1417.8 1609.4 L1418.8 1608.9 L1419.8 1609.3 L1420.8 1608.5 L1421.9 1608.1 L1422.9 1608.2 L1423.9 1608.8 L1424.9 1607.5 L1425.9 1608.2 L1426.9 1607.4 L1427.9 1608.6 L1428.9 1608.1 L1429.9 1609.3 L1431.0 1608.3 L1432.0 1608.1 L1433.0 1609.0 L1434.0 1608.2 L1435.0 1609.2 L1436.0 1608.5 L1437.0 1608.2 L1438.0 1608.5 L1439.0 1609.1 L1440.1 1609.1 L1441.1 1608.7 L1442.1 1608.1 L1443.1 1608.5 L1444.1 1609.0 L1445.1 1608.7 L1446.1 1608.8 L1447.1 1609.2 L1448.1 1608.2 L1449.1 1608.4 L1450.2 1608.7 L1451.2 1609.4 L1452.2 1607.5 L1453.2 1609.3 L1454.2 1609.2 L1455.2 1608.8 L1456.2 1607.7 L1457.2 1607.4 L1458.2 1607.8 L1459.3 1609.0 L1460.3 1607.6 L1461.3 1609.3 L1462.3 1609.1 L1463.3 1609.1 L1464.3 1608.2 L1465.3 1608.1 L1466.3 1608.0 L1467.3 1607.3 L1468.4 1607.8 L1469.4 1607.8 L1470.4 1609.0 L1471.4 1607.4 L1472.4 1607.4 L1473.4 1607.6 L1474.4 1609.2 L1475.4 1607.8 L1476.4 1608.2 L1477.4 1608.2 L1478.5 1608.7 L1479.5 1607.6 L1480.5 1607.6 L1481.5 1607.6 L1482.5 1608.6 L1483.5 1607.7 L1484.5 1609.1 L1485.5 1607.8 L1486.5 1609.2 L1487.6 1609.2 L1488.6 1609.0 L1489.6 1607.8 L1490.6 1607.1 L1491.6 1608.2 L1492.6 1607.8 L1493.6 1608.0 L1494.6 1607.4 L1495.6 1607.1 L1496.7 1607.4 L1497.7 1608.5 L1498.7 1609.0 L1499.7 1607.2 L1500.7 1608.6 L1501.7 1607.5 L1502.7 1607.3 L1503.7 1608.8 L1504.7 1608.7 L1505.7 1608.2 L1506.8 1607.3 L1507.8 1607.3 L1508.8 1607.0 L1509.8 1608.5 L1510.8 1607.7 L1511.8 1607.2 L1512.8 1608.2 L1513.8 1607.8 L1514.8 1608.5 L1515.9 1607.2 L1516.9 1608.0 L1517.9 1607.9 L1518.9 1607.6 L1519.9 1608.3 L1520.9 1607.2 L1521.9 1607.9 L1522.9 1608.0 L1523.9 1607.3 L1525.0 1607.5 L1526.0 1607.4 L1527.0 1607.0 L1528.0 1607.1 L1529.0 1608.0 L1530.0 1607.4 L1531.0 1607.0 L1532.0 1608.7 L1533.0 1607.4 L1534.1 1607.6 L1535.1 1607.9 L1536.1 1608.5 L1537.1 1608.1 L1538.1 1607.1 L1539.1 1606.8 L1540.1 1606.5 L1541.1 1607.0 L1542.1 1606.7 L1543.1 1606.8 L1544.2 1608.2 L1545.2 1607.1 L1546.2 1606.7 L1547.2 1606.9 L1548.2 1607.9 L1549.2 1607.0 L1550.2 1607.6 L1551.2 1607.5 L1552.2 1606.8 L1553.3 1606.9 L1554.3 1608.0 L1555.3 1606.9 L1556.3 1608.1 L1557.3 1607.8 L1558.3 1606.4 L1559.3 1606.2 L1560.3 1607.6 L1561.3 1606.5 L1562.4 1607.7 L1563.4 1607.0 L1564.4 1607.3 L1565.4 1607.8 L1566.4 1607.0 L1567.4 1606.7 L1568.4 1606.0 L1569.4 1607.6 L1570.4 1607.1 L1571.4 1607.7 L1572.5 1607.2 L1573.5 1607.1 L1574.5 1605.8 L1575.5 1605.5 L1576.5 1607.0 L1577.5 1606.4 L1578.5 1606.2 L1579.5 1606.2 L1580.5 1605.2 L1581.6 1605.1 L1582.6 1607.0 L1583.6 1606.2 L1584.6 1605.8 L1585.6 1605.5 L1586.6 1605.7 L1587.6 1605.0 L1588.6 1606.4 L1589.6 1605.5 L1590.7 1604.6 L1591.7 1605.9 L1592.7 1605.8 L1593.7 1604.7 L1594.7 1605.6 L1595.7 1604.6 L1596.7 1605.4 L1597.7 1605.1 L1598.7 1604.5 L1599.7 1603.4 L1600.8 1603.5 L1601.8 1603.2 L1602.8 1602.9 L1603.8 1603.0 L1604.8 1601.4 L1605.8 1601.8 L1606.8 1601.2 L1607.8 1601.9 L1608.8 1600.8 L1609.9 1599.4 L1610.9 1597.8 L1611.9 1597.4 L1612.9 1597.7 L1613.9 1594.9 L1614.9 1594.9 L1615.9 1592.6 L1616.9 1591.9 L1617.9 1590.3 L1619.0 1586.9 L1620.0 1585.3 L1621.0 1582.8 L1622.0 1580.1 L1623.0 1577.6 L1624.0 1575.2 L1625.0 1572.4 L1626.0 1568.8 L1627.0 1566.2 L1628.1 1562.8 L1629.1 1558.3 L1630.1 1555.9 L1631.1 1551.6 L1632.1 1548.4 L1633.1 1545.6 L1634.1 1541.8 L1635.1 1539.9 L1636.1 1538.1 L1637.1 1534.0 L1638.2 1532.4 L1639.2 1531.1 L1640.2 1529.9 L1641.2 1530.6 L1642.2 1530.8 L1643.2 1531.1 L1644.2 1531.7 L1645.2 1534.7 L1646.2 1535.7 L1647.3 1537.7 L1648.3 1541.9 L1649.3 1545.3 L1650.3 1548.1 L1651.3 1550.2 L1652.3 1554.4 L1653.3 1556.1 L1654.3 1561.1 L1655.3 1562.5 L1656.4 1566.7 L1657.4 1568.4 L1658.4 1572.4 L1659.4 1575.5 L1660.4 1576.7 L1661.4 1579.8 L1662.4 1580.4 L1663.4 1582.6 L1664.4 1585.4 L1665.4 1586.4 L1666.5 1587.6 L1667.5 1588.3 L1668.5 1590.4 L1669.5 1590.6 L1670.5 1591.4 L1671.5 1591.8 L1672.5 1592.3 L1673.5 1592.9 L1674.5 1593.2 L1675.6 1593.3 L1676.6 1592.1 L1677.6 1593.1 L1678.6 1593.9 L1679.6 1593.2 L1680.6 1592.2 L1681.6 1592.2 L1682.6 1593.2 L1683.6 1592.2 L1684.7 1591.8 L1685.7 1590.7 L1686.7 1591.5 L1687.7 1589.8 L1688.7 1589.6 L1689.7 1590.9 L1690.7 1589.5 L1691.7 1589.1 L1692.7 1588.4 L1693.7 1587.5 L1694.8 1588.6 L1695.8 1586.8 L1696.8 1588.2 L1697.8 1586.0 L1698.8 1586.9 L1699.8 1587.0 L1700.8 1584.9 L1701.8 1584.2 L1702.8 1584.4 L1703.9 1583.7 L1704.9 1584.1 L1705.9 1583.9 L1706.9 1582.5 L1707.9 1581.5 L1708.9 1582.0 L1709.9 1581.0 L1710.9 1580.3 L1711.9 1579.3 L1713.0 1576.8 L1714.0 1577.2 L1715.0 1575.6 L1716.0 1573.4 L1717.0 1569.9 L1718.0 1567.9 L1719.0 1564.6 L1720.0 1561.5 L1721.0 1557.4 L1722.0 1553.8 L1723.1 1550.2 L1724.1 1544.7 L1725.1 1538.0 L1726.1 1532.0 L1727.1 1524.1 L1728.1 1516.0 L1729.1 1505.5 L1730.1 1495.7 L1731.1 1485.6 L1732.2 1474.6 L1733.2 1462.1 L1734.2 1449.4 L1735.2 1434.4 L1736.2 1419.9 L1737.2 1403.2 L1738.2 1385.9 L1739.2 1369.4 L1740.2 1350.8 L1741.3 1332.1 L1742.3 1313.0 L1743.3 1294.9 L1744.3 1276.1 L1745.3 1255.4 L1746.3 1237.3 L1747.3 1219.1 L1748.3 1200.2 L1749.3 1182.6 L1750.4 1166.1 L1751.4 1152.4 L1752.4 1139.2 L1753.4 1127.3 L1754.4 1117.2 L1755.4 1109.4 L1756.4 1102.1 L1757.4 1099.2 L1758.4 1099.3 L1759.4 1100.5 L1760.5 1103.9 L1761.5 1108.1 L1762.5 1117.5 L1763.5 1126.6 L1764.5 1139.8 L1765.5 1153.5 L1766.5 1167.0 L1767.5 1185.2 L1768.5 1201.7 L1769.6 1219.8 L1770.6 1238.9 L1771.6 1257.2 L1772.6 1276.4 L1773.6 1297.1 L1774.6 1316.3 L1775.6 1334.9 L1776.6 1353.6 L1777.6 1371.4 L1778.7 1388.7 L1779.7 1406.5 L1780.7 1421.4 L1781.7 1437.7 L1782.7 1453.1 L1783.7 1465.9 L1784.7 1478.4 L1785.7 1491.0 L1786.7 1500.6 L1787.7 1511.3 L1788.8 1520.8 L1789.8 1529.8 L1790.8 1537.8 L1791.8 1544.6 L1792.8 1550.1 L1793.8 1555.7 L1794.8 1560.8 L1795.8 1566.8 L1796.8 1569.3 L1797.9 1573.0 L1798.9 1576.3 L1799.9 1579.4 L1800.9 1581.2 L1801.9 1583.2 L1802.9 1586.0 L1803.9 1588.0 L1804.9 1589.3 L1805.9 1590.0 L1807.0 1591.5 L1808.0 1592.3 L1809.0 1594.2 L1810.0 1594.4 L1811.0 1595.9 L1812.0 1595.8 L1813.0 1597.6 L1814.0 1597.0 L1815.0 1597.1 L1816.0 1597.2 L1817.1 1598.5 L1818.1 1598.0 L1819.1 1599.8 L1820.1 1600.5 L1821.1 1599.7 L1822.1 1600.4 L1823.1 1600.5 L1824.1 1600.4 L1825.1 1600.3 L1826.2 1600.3 L1827.2 1601.6 L1828.2 1601.3 L1829.2 1601.4 L1830.2 1601.4 L1831.2 1601.8 L1832.2 1602.3 L1833.2 1601.7 L1834.2 1603.5 L1835.3 1602.1 L1836.3 1603.5 L1837.3 1603.6 L1838.3 1602.7 L1839.3 1603.3 L1840.3 1603.7 L1841.3 1604.4 L1842.3 1604.5 L1843.3 1604.2 L1844.4 1604.7 L1845.4 1603.5 L1846.4 1604.7 L1847.4 1604.4 L1848.4 1604.4 L1849.4 1603.9 L1850.4 1603.7 L1851.4 1604.2 L1852.4 1605.2 L1853.4 1605.4 L1854.5 1604.6 L1855.5 1605.1 L1856.5 1604.4 L1857.5 1605.6 L1858.5 1604.6 L1859.5 1605.4 L1860.5 1605.6 L1861.5 1605.9 L1862.5 1604.7 L1863.6 1605.3 L1864.6 1605.3 L1865.6 1604.7 L1866.6 1606.5 L1867.6 1605.5 L1868.6 1606.0 L1869.6 1606.2 L1870.6 1605.0 L1871.6 1606.3 L1872.7 1606.0 L1873.7 1606.0 L1874.7 1606.7 L1875.7 1606.3 L1876.7 1607.0 L1877.7 1606.0 L1878.7 1605.8 L1879.7 1605.0 L1880.7 1605.1 L1881.7 1606.5 L1882.8 1605.2 L1883.8 1607.1 L1884.8 1607.0 L1885.8 1606.2 L1886.8 1605.9 L1887.8 1606.1 L1888.8 1607.3 L1889.8 1606.6 L1890.8 1606.4 L1891.9 1606.7 L1892.9 1605.9 L1893.9 1605.9 L1894.9 1607.4 L1895.9 1606.6 L1896.9 1606.1 L1897.9 1605.9 L1898.9 1606.2 L1899.9 1605.5 L1901.0 1606.1 L1902.0 1606.8 L1903.0 1605.9 L1904.0 1606.4 L1905.0 1606.4 L1906.0 1606.4 L1907.0 1606.1 L1908.0 1606.2 L1909.0 1606.7 L1910.0 1606.0 L1911.1 1606.8 L1912.1 1606.1 L1913.1 1605.7 L1914.1 1606.5 L1915.1 1607.3 L1916.1 1605.7 L1917.1 1607.2 L1918.1 1607.2 L1919.1 1607.5 L1920.2 1606.7 L1921.2 1606.7 L1922.2 1605.8 L1923.2 1607.1 L1924.2 1606.6 L1925.2 1605.7 L1926.2 1607.3 L1927.2 1606.4 L1928.2 1606.9 L1929.3 1605.5 L1930.3 1606.4 L1931.3 1606.7 L1932.3 1606.7 L1933.3 1606.4 L1934.3 1605.2 L1935.3 1606.4 L1936.3 1606.5 L1937.3 1605.9 L1938.4 1606.2 L1939.4 1604.6 L1940.4 1604.4 L1941.4 1604.7 L1942.4 1605.0 L1943.4 1605.5 L1944.4 1603.9 L1945.4 1604.7 L1946.4 1603.8 L1947.4 1602.7 L1948.5 1604.1 L1949.5 1602.9 L1950.5 1603.2 L1951.5 1602.8 L1952.5 1602.8 L1953.5 1602.0 L1954.5 1602.1 L1955.5 1602.9 L1956.5 1600.9 L1957.6 1601.9 L1958.6 1601.4 L1959.6 1600.8 L1960.6 1600.3 L1961.6 1599.6 L1962.6 1600.7 L1963.6 1599.8 L1964.6 1599.0 L1965.6 1599.1 L1966.7 1599.3 L1967.7 1597.8 L1968.7 1597.1 L1969.7 1597.5 L1970.7 1597.5 L1971.7 1598.0 L1972.7 1597.1 L1973.7 1596.2 L1974.7 1596.9 L1975.7 1596.5 L1976.8 1596.2 L1977.8 1596.3 L1978.8 1595.5 L1979.8 1596.0 L1980.8 1594.5 L1981.8 1594.6 L1982.8 1595.6 L1983.8 1596.0 L1984.8 1596.0 L1985.9 1594.3 L1986.9 1595.1 L1987.9 1595.7 L1988.9 1595.8 L1989.9 1594.3 L1990.9 1595.5 L1991.9 1593.9 L1992.9 1595.1 L1993.9 1594.6 L1995.0 1595.1 L1996.0 1594.4 L1997.0 1595.5 L1998.0 1595.1 L1999.0 1595.3 L2000.0 1595.3 L2001.0 1594.1 L2002.0 1592.9 L2003.0 1594.7 L2004.0 1592.6 L2005.1 1593.4 L2006.1 1593.3 L2007.1 1593.0 L2008.1 1591.8 L2009.1 1591.7 L2010.1 1590.2 L2011.1 1589.5 L2012.1 1589.3 L2013.1 1586.9 L2014.2 1586.7 L2015.2 1585.4 L2016.2 1585.5 L2017.2 1583.5 L2018.2 1582.6 L2019.2 1581.4 L2020.2 1581.7 L2021.2 1579.1 L2022.2 1579.3 L2023.3 1579.4 L2024.3 1576.9 L2025.3 1577.6 L2026.3 1575.9 L2027.3 1577.1 L2028.3 1577.2 L2029.3 1576.3 L2030.3 1576.5 L2031.3 1576.6 L2032.4 1577.2 L2033.4 1578.4 L2034.4 1578.4 L2035.4 1579.8 L2036.4 1581.6 L2037.4 1581.7 L2038.4 1583.3 L2039.4 1584.0 L2040.4 1585.9 L2041.4 1586.8 L2042.5 1587.9 L2043.5 1588.1 L2044.5 1590.4 L2045.5 1590.6 L2046.5 1591.5 L2047.5 1591.4 L2048.5 1593.8 L2049.5 1593.7 L2050.5 1593.9 L2051.6 1595.5 L2052.6 1595.1 L2053.6 1597.3 L2054.6 1597.5 L2055.6 1598.7 L2056.6 1599.4 L2057.6 1600.6 L2058.6 1599.8 L2059.6 1600.8 L2060.7 1601.0 L2061.7 1602.4 L2062.7 1603.6 L2063.7 1603.1 L2064.7 1603.1 L2065.7 1604.3 L2066.7 1605.3 L2067.7 1605.1 L2068.7 1604.7 L2069.7 1605.1 L2070.8 1605.8 L2071.8 1605.7 L2072.8 1607.4 L2073.8 1607.4 L2074.8 1607.8 L2075.8 1607.0 L2076.8 1607.0 L2077.8 1608.1 L2078.8 1606.5 L2079.9 1607.1 L2080.9 1606.8 L2081.9 1606.4 L2082.9 1606.8 L2083.9 1606.9 L2084.9 1607.2 L2085.9 1607.5 L2086.9 1607.0 L2087.9 1607.0 L2089.0 1608.1 L2090.0 1607.1 L2091.0 1608.5 L2092.0 1607.7 L2093.0 1606.9 L2094.0 1608.4 L2095.0 1607.0 L2096.0 1607.9 L2097.0 1607.4 L2098.0 1608.7 L2099.1 1608.9 L2100.1 1608.5 L2101.1 1607.8 L2102.1 1607.2 L2103.1 1607.9 L2104.1 1608.0 L2105.1 1608.3 L2106.1 1608.1 L2107.1 1607.7 L2108.2 1607.4 L2109.2 1608.5 L2110.2 1607.8 L2111.2 1608.5 L2112.2 1608.7 L2113.2 1609.2 L2114.2 1608.4 L2115.2 1608.0 L2116.2 1608.2 L2117.3 1608.4 L2118.3 1607.7 L2119.3 1608.4 L2120.3 1607.9 L2121.3 1608.2 L2122.3 1607.4 L2123.3 1608.7 L2124.3 1608.5 L2125.3 1607.8 L2126.4 1608.8 L2127.4 1607.8 L2128.4 1608.8 L2129.4 1609.1 L2130.4 1608.3 L2131.4 1608.3 L2132.4 1608.9 L2133.4 1608.9 L2134.4 1607.4 L2135.4 1608.5 L2136.5 1608.0 L2137.5 1608.6 L2138.5 1608.4 L2139.5 1608.9 L2140.5 1609.2 L2141.5 1607.8 L2142.5 1608.1 L2143.5 1608.9 L2144.5 1608.7 L2145.6 1608.4 L2146.6 1609.5 L2147.6 1608.3 L2148.6 1607.5 L2149.6 1608.2 L2150.6 1608.6 L2151.6 1609.4 L2152.6 1608.5 L2153.6 1608.4 L2154.7 1608.2 L2155.7 1607.8 L2156.7 1609.1 L2157.7 1609.5 L2158.7 1607.6 L2159.7 1608.5 L2160.7 1607.8 L2161.7 1608.4 L2162.7 1607.8 L2163.7 1608.4 L2164.8 1608.2 L2165.8 1608.4 L2166.8 1607.7 L2167.8 1608.1 L2168.8 1607.7 L2169.8 1608.8 L2170.8 1609.3 L2171.8 1609.3 L2172.8 1608.8 L2173.9 1608.6 L2174.9 1608.3 L2175.9 1608.8 L2176.9 1607.7 L2177.9 1608.9 L2178.9 1609.8 L2179.9 1608.6 L2180.9 1608.4 L2181.9 1609.3 L2183.0 1608.2 L2184.0 1609.4 L2185.0 1607.9 L2186.0 1608.8 L2187.0 1607.8 L2188.0 1608.5 L2189.0 1608.3 L2190.0 1609.4 L2191.0 1607.9 L2192.0 1607.7 L2193.1 1609.5 L2194.1 1608.6 L2195.1 1609.5 L2196.1 1607.9 L2197.1 1608.0 L2198.1 1607.9 L2199.1 1608.2 L2200.1 1609.0 L2201.1 1608.5 L2202.2 1609.7 L2203.2 1609.6 L2204.2 1608.7 L2205.2 1608.3 L2206.2 1609.2 L2207.2 1609.8 L2208.2 1609.8 L2209.2 1609.2 L2210.2 1609.1 L2211.3 1607.9 L2212.3 1608.4 L2213.3 1608.0 L2214.3 1608.3 L2215.3 1608.4 L2216.3 1608.3 L2217.3 1609.4 L2218.3 1608.3 L2219.3 1608.6 L2220.3 1608.5 L2221.4 1608.8 L2222.4 1608.9 L2223.4 1608.1 L2224.4 1608.2 L2225.4 1609.5 L2226.4 1608.1 L2227.4 1608.8 L2228.4 1609.8 L2229.4 1608.2 L2230.5 1608.0 L2231.5 1609.0 L2232.5 1609.0 L2233.5 1609.3 L2234.5 1609.5 L2235.5 1608.8 L2236.5 1609.0 L2237.5 1608.5 L2238.5 1608.5 L2239.6 1609.5 L2240.6 1608.3 L2241.6 1609.0 L2242.6 1609.1 L2243.6 1609.5 L2244.6 1608.6 L2245.6 1608.5 L2246.6 1608.3 L2247.6 1608.2 L2248.7 1609.2 L2249.7 1608.8 L2250.7 1608.6 L2251.7 1609.1 L2252.7 1609.9 L2253.7 1608.4 L2254.7 1608.0 L2255.7 1608.9 L2256.7 1608.0 L2257.7 1609.8 L2258.8 1608.7 L2259.8 1609.1 L2260.8 1608.6 L2261.8 1609.2 L2262.8 1608.4 L2263.8 1609.5 L2264.8 1609.4 L2265.8 1609.1 L2266.8 1609.1 L2267.9 1609.1 L2268.9 1608.0 L2269.9 1608.9 L2270.9 1608.8 L2271.9 1609.7 L2272.9 1608.8 L2273.9 1608.4 L2274.9 1608.5 L2275.9 1607.9 L2277.0 1608.7 L2278.0 1609.2 L2279.0 1608.1 L2280.0 1607.9 L2281.0 1607.9 L2282.0 1609.7 L2283.0 1608.6 L2284.0 1609.7 L2285.0 1609.4 L2286.0 1608.3 L2287.1 1608.1 L2288.1 1608.7 L2289.1 1609.3 L2290.1 1609.0 L2291.1 1609.3 L2292.1 1609.4 L2293.1 1609.6 L2294.1 1608.0 L2295.1 1608.0 L2296.2 1609.6 L2297.2 1608.2 L2298.2 1608.4 L2299.2 1608.5 L2300.2 1609.5 L2301.2 1608.9 L2302.2 1608.3 L2303.2 1608.5 L2304.2 1608.0 L2305.3 1609.9 L2306.3 1609.3 L2307.3 1609.2 L2308.3 1609.1 L2309.3 1607.9 L2310.3 1608.0 L2311.3 1608.2 L2312.3 1608.6 L2313.3 1608.4 L2314.3 1608.2 L2315.4 1609.6 L2316.4 1608.7 L2317.4 1607.9 L2318.4 1609.7 L2319.4 1609.1 L2320.4 1609.2 L2321.4 1608.2 L2322.4 1609.0 L2323.4 1609.7 L2324.5 1609.2 L2325.5 1608.7 L2326.5 1608.9 L2327.5 1610.0 L2328.5 1608.3 L2329.5 1609.4 L2330.5 1610.0 L2331.5 1608.7 L2332.5 1608.6 L2333.6 1608.7 L2334.6 1609.8 L2335.6 1610.0 L2336.6 1608.5 L2337.6 1609.0 L2338.6 1610.0 L2339.6 1608.9 L2340.6 1609.9 L2341.6 1609.0 L2342.7 1608.5 L2343.7 1609.6 L2344.7 1609.2 L2345.7 1608.5 L2346.7 1609.5 L2347.7 1608.7 L2348.7 1609.9 L2349.7 1608.6 L2350.7 1609.6 L2351.7 1609.1 L2352.8 1607.9 L2353.8 1608.4 L2354.8 1609.7 L2355.8 1608.4 L2356.8 1609.2 L2357.8 1609.0 L2358.8 1609.5 L2359.8 1609.7 L2360.8 1608.0 L2361.9 1609.2 L2362.9 1609.6 L2363.9 1608.4 L2364.9 1609.8 L2365.9 1609.2 L2366.9 1609.8 L2367.9 1610.0 L2368.9 1608.0 L2369.9 1609.0 L2371.0 1608.7 L2372.0 1609.8 L2373.0 1609.3 L2374.0 1609.9 L2375.0 1608.3 L2376.0 1610.0 L2377.0 1608.1 L2378.0 1608.0 L2379.0 1609.7 L2380.0 1609.5 L2381.1 1609.7 L2382.1 1610.0 L2383.1 1609.1 L2384.1 1609.0 L2385.1 1608.2 L2386.1 1609.1 L2387.1 1609.7 L2388.1 1609.2 L2389.1 1609.7 L2390.2 1610.0 L2391.2 1609.3 L2392.2 1608.3 L2393.2 1609.9 L2394.2 1608.0 L2395.2 1608.3 L2396.2 1608.0 L2397.2 1608.8 L2398.2 1609.4 L2399.3 1608.4 L2400.3 1609.8 L2401.3 1609.0 L2402.3 1608.3 L2403.3 1608.9 L2404.3 1608.5 L2405.3 1609.7 L2406.3 1608.3 L2407.3 1609.8 L2408.3 1609.4 L2409.4 1608.8 L2410.4 1608.1 L2411.4 1609.8 L2412.4 1609.5 L2413.4 1608.5 L2414.4 1609.6 L2415.4 1609.3 L2416.4 1609.7 L2417.4 1608.0 L2418.5 1608.4 L2419.5 1609.3 L2420.5 1608.0 L2421.5 1608.2 L2422.5 1609.4 L2423.5 1609.9 L2424.5 1608.6 L2425.5 1608.7 L2426.5 1609.5 L2427.6 1610.0 L2428.6 1609.5 L2429.6 1608.1 L2430.6 1608.7 L2431.6 1608.7 L2432.6 1608.6 L2433.6 1609.5 L2434.6 1608.2 L2435.6 1609.1 L2436.7 1608.1 L2437.7 1608.8 L2438.7 1608.7 L2439.7 1608.3 L2440.7 1608.0 L2441.7 1608.6 L2442.7 1608.1 L2443.7 1609.2 L2444.7 1609.4 L2445.7 1609.6 L2446.8 1609.3 L2447.8 1608.2 L2448.8 1609.4 L2449.8 1609.6 L2450.8 1609.9 L2451.8 1608.6 L2452.8 1608.1 L2453.8 1609.2 L2454.8 1609.8 L2455.9 1608.5 L2456.9 1608.3 L2457.9 1609.3 L2458.9 1609.1 L2459.9 1609.3 L2460.9 1609.0 L2461.9 1608.7 L2462.9 1608.1 L2463.9 1609.4 L2465.0 1608.1 L2466.0 1608.8 L2467.0 1609.1 L2468.0 1608.3 L2469.0 1609.6 L2470.0 1609.0 L2471.0 1608.2 L2472.0 1608.3 L2473.0 1608.3 L2474.0 1609.0 L2475.1 1608.7 L2476.1 1608.5 L2477.1 1609.6 L2478.1 1608.1 L2479.1 1608.4 L2480.1 1609.1 L2481.1 1608.9 L2482.1 1608.1 L2483.1 1610.0 L2484.2 1609.5 L2485.2 1608.3 L2486.2 1610.0 L2487.2 1608.6 L2488.2 1609.5 L2489.2 1609.6 L2490.2 1610.0 L2491.2 1609.5 L2492.2 1609.4 L2493.3 1608.7 L2494.3 1608.4 L2495.3 1608.9 L2496.3 1609.8 L2497.3 1609.0 L2498.3 1608.2 L2499.3 1609.6 L2500.3 1608.6 L2501.3 1609.7 L2502.3 1609.5 L2502.3 1610.0 L135.2 1610.0 Z" fill="url(#gb)"/>
<path d="M196.8 1607.5 L197.8 1605.6 L198.8 1605.3 L199.9 1606.0 L200.9 1605.0 L201.9 1604.5 L202.9 1603.6 L203.9 1602.8 L204.9 1603.9 L205.9 1603.7 L206.9 1601.7 L207.9 1602.5 L209.0 1601.9 L210.0 1603.7 L211.0 1603.0 L212.0 1602.9 L213.0 1604.4 L214.0 1603.3 L215.0 1603.9 L216.0 1606.2 L217.0 1606.7 L218.1 1606.0 L219.1 1605.5 L220.1 1607.0 L221.1 1607.5 L222.1 1607.3 L223.1 1608.3 L224.1 1608.0 L225.1 1607.6 L226.1 1607.6 L227.2 1608.2 L228.2 1608.2 L229.2 1608.2 L230.2 1607.7 L231.2 1608.1 L232.2 1608.6 L233.2 1606.9 L234.2 1607.4 L235.2 1607.2 L236.2 1608.2 L237.3 1606.4 L238.3 1606.6 L239.3 1608.2 L240.3 1607.7 L241.3 1606.8 L242.3 1606.7 L243.3 1606.2 L244.3 1607.2 L245.3 1606.2 L246.4 1606.5 L247.4 1607.2 L248.4 1606.4 L249.4 1605.7 L250.4 1605.7 L251.4 1606.3 L252.4 1605.9 L253.4 1607.0 L254.4 1606.4 L255.5 1605.0 L256.5 1605.7 L257.5 1606.0 L258.5 1605.0 L259.5 1604.5 L260.5 1604.3 L261.5 1604.8 L262.5 1604.4 L263.5 1604.0 L264.5 1603.2 L265.6 1603.4 L266.6 1603.4 L267.6 1602.9 L268.6 1603.6 L269.6 1603.3 L270.6 1601.6 L271.6 1600.6 L272.6 1601.1 L273.6 1601.2 L274.7 1601.3 L275.7 1600.2 L276.7 1598.8 L277.7 1598.9 L278.7 1599.0 L279.7 1597.9 L280.7 1598.9 L281.7 1597.9 L282.7 1596.5 L283.8 1596.9 L284.8 1596.8 L285.8 1596.8 L286.8 1595.8 L287.8 1594.5 L288.8 1596.1 L289.8 1594.0 L290.8 1593.6 L291.8 1593.0 L292.8 1593.0 L293.9 1592.4 L294.9 1592.7 L295.9 1592.2 L296.9 1592.2 L297.9 1592.6 L298.9 1590.6 L299.9 1590.9 L300.9 1591.4 L301.9 1590.5 L303.0 1590.2 L304.0 1590.2 L305.0 1590.0 L306.0 1589.4 L307.0 1589.0 L308.0 1588.8 L309.0 1588.9 L310.0 1589.6 L311.0 1589.0 L312.1 1589.0 L313.1 1587.9 L314.1 1587.2 L315.1 1587.2 L316.1 1587.1 L317.1 1586.9 L318.1 1588.0 L319.1 1586.7 L320.1 1587.0 L321.2 1588.2 L322.2 1588.4 L323.2 1588.4 L324.2 1586.9 L325.2 1588.1 L326.2 1588.6 L327.2 1587.7 L328.2 1588.5 L329.2 1589.4 L330.2 1589.6 L331.3 1589.2 L332.3 1590.4 L333.3 1590.7 L334.3 1590.3 L335.3 1591.4 L336.3 1592.3 L337.3 1592.6 L338.3 1594.2 L339.3 1594.0 L340.4 1594.6 L341.4 1595.8 L342.4 1596.6 L343.4 1595.5 L344.4 1597.0 L345.4 1598.2 L346.4 1597.9 L347.4 1598.0 L348.4 1600.3 L349.5 1600.8 L350.5 1601.0 L351.5 1600.2 L352.5 1601.9 L353.5 1601.1 L354.5 1601.6 L355.5 1602.2 L356.5 1603.2 L357.5 1601.9 L358.5 1602.6 L359.6 1603.4 L360.6 1604.3 L361.6 1603.5 L362.6 1604.3 L363.6 1604.0 L364.6 1604.7 L365.6 1604.2 L366.6 1605.5 L367.6 1605.1 L368.7 1603.8 L369.7 1604.0 L370.7 1605.3 L371.7 1604.2 L372.7 1605.4 L373.7 1604.1 L374.7 1604.5 L375.7 1605.2 L376.7 1605.6 L377.8 1606.1 L378.8 1604.3 L379.8 1606.1 L380.8 1604.4 L381.8 1604.1 L382.8 1604.9 L383.8 1605.8 L384.8 1604.3 L385.8 1604.0 L386.8 1604.6 L387.9 1605.0 L388.9 1605.2 L389.9 1605.3 L390.9 1605.6 L391.9 1604.5 L392.9 1605.0 L393.9 1605.5 L394.9 1605.7 L395.9 1604.5 L397.0 1605.3 L398.0 1604.8 L399.0 1605.2 L400.0 1604.0 L401.0 1603.9 L402.0 1605.8 L403.0 1605.4 L404.0 1605.1 L405.0 1603.7 L406.1 1604.2 L407.1 1605.1 L408.1 1605.4 L409.1 1604.4 L410.1 1604.1 L411.1 1603.9 L412.1 1605.1 L413.1 1604.0 L414.1 1604.4 L415.2 1604.9 L416.2 1603.8 L417.2 1605.4 L418.2 1604.4 L419.2 1605.8 L420.2 1605.7 L421.2 1604.1 L422.2 1605.6 L423.2 1604.5 L424.2 1604.9 L425.3 1604.4 L426.3 1605.4 L427.3 1605.5 L428.3 1605.7 L429.3 1604.5 L430.3 1605.1 L431.3 1604.4 L432.3 1604.5 L433.3 1606.2 L434.4 1605.3 L435.4 1606.3 L436.4 1606.5 L437.4 1606.5 L438.4 1604.8 L439.4 1605.0 L440.4 1605.0 L441.4 1606.0 L442.4 1605.5 L443.5 1605.2 L444.5 1606.1 L445.5 1605.7 L446.5 1606.5 L447.5 1606.8 L448.5 1606.5 L449.5 1605.2 L450.5 1605.9 L451.5 1605.2 L452.5 1606.2 L453.6 1606.6 L454.6 1605.6 L455.6 1605.5 L456.6 1607.3 L457.6 1605.9 L458.6 1607.2 L459.6 1607.1 L460.6 1605.5 L461.6 1607.3 L462.7 1606.9 L463.7 1605.4 L464.7 1606.6 L465.7 1607.3 L466.7 1607.2 L467.7 1607.0 L468.7 1606.0 L469.7 1607.3 L470.7 1605.6 L471.8 1606.8 L472.8 1605.5 L473.8 1605.7 L474.8 1607.0 L475.8 1607.1 L476.8 1606.6 L477.8 1607.4 L478.8 1606.2 L479.8 1607.5 L480.8 1607.6 L481.9 1605.5 L482.9 1607.0 L483.9 1606.3 L484.9 1606.7 L485.9 1606.9 L486.9 1607.5 L487.9 1605.6 L488.9 1605.5 L489.9 1605.5 L491.0 1607.3 L492.0 1607.1 L493.0 1606.2 L494.0 1605.4 L495.0 1606.3 L496.0 1606.0 L497.0 1606.0 L498.0 1606.8 L499.0 1606.2 L500.1 1606.7 L501.1 1606.8 L502.1 1607.1 L503.1 1606.6 L504.1 1605.1 L505.1 1606.2 L506.1 1605.7 L507.1 1605.7 L508.1 1605.0 L509.1 1606.1 L510.2 1606.2 L511.2 1606.1 L512.2 1606.1 L513.2 1604.8 L514.2 1604.7 L515.2 1605.8 L516.2 1605.6 L517.2 1605.1 L518.2 1604.9 L519.3 1604.7 L520.3 1605.3 L521.3 1605.6 L522.3 1604.9 L523.3 1605.1 L524.3 1603.9 L525.3 1604.7 L526.3 1604.4 L527.3 1602.9 L528.4 1603.4 L529.4 1602.0 L530.4 1602.3 L531.4 1601.2 L532.4 1602.3 L533.4 1601.2 L534.4 1600.2 L535.4 1601.3 L536.4 1599.1 L537.5 1600.3 L538.5 1598.6 L539.5 1597.8 L540.5 1597.7 L541.5 1598.4 L542.5 1598.5 L543.5 1597.2 L544.5 1596.0 L545.5 1597.1 L546.5 1595.5 L547.6 1596.9 L548.6 1595.1 L549.6 1596.8 L550.6 1596.1 L551.6 1594.8 L552.6 1595.1 L553.6 1594.9 L554.6 1595.1 L555.6 1595.4 L556.7 1595.6 L557.7 1596.9 L558.7 1596.5 L559.7 1597.3 L560.7 1596.2 L561.7 1596.5 L562.7 1597.5 L563.7 1598.1 L564.7 1596.3 L565.8 1596.8 L566.8 1597.4 L567.8 1597.5 L568.8 1596.9 L569.8 1597.8 L570.8 1597.9 L571.8 1598.0 L572.8 1598.1 L573.8 1598.6 L574.8 1597.1 L575.9 1597.5 L576.9 1597.0 L577.9 1597.9 L578.9 1597.0 L579.9 1597.2 L580.9 1596.9 L581.9 1596.3 L582.9 1594.7 L583.9 1595.2 L585.0 1594.8 L586.0 1593.8 L587.0 1594.1 L588.0 1594.0 L589.0 1592.2 L590.0 1591.6 L591.0 1590.5 L592.0 1590.2 L593.0 1588.7 L594.1 1587.7 L595.1 1587.7 L596.1 1586.0 L597.1 1584.7 L598.1 1583.9 L599.1 1582.0 L600.1 1580.1 L601.1 1577.6 L602.1 1575.6 L603.1 1574.9 L604.2 1571.9 L605.2 1570.7 L606.2 1568.0 L607.2 1564.2 L608.2 1560.3 L609.2 1558.5 L610.2 1553.7 L611.2 1549.6 L612.2 1546.8 L613.3 1541.7 L614.3 1536.8 L615.3 1533.0 L616.3 1527.2 L617.3 1521.8 L618.3 1516.5 L619.3 1510.2 L620.3 1504.1 L621.3 1497.9 L622.4 1492.5 L623.4 1487.1 L624.4 1480.6 L625.4 1474.5 L626.4 1467.7 L627.4 1461.5 L628.4 1457.6 L629.4 1451.3 L630.4 1446.9 L631.5 1444.0 L632.5 1440.8 L633.5 1439.5 L634.5 1437.1 L635.5 1438.3 L636.5 1437.0 L637.5 1438.8 L638.5 1441.5 L639.5 1445.3 L640.5 1447.5 L641.6 1451.4 L642.6 1457.7 L643.6 1461.1 L644.6 1465.9 L645.6 1471.3 L646.6 1476.4 L647.6 1482.0 L648.6 1486.0 L649.6 1490.9 L650.7 1496.9 L651.7 1500.7 L652.7 1506.0 L653.7 1510.8 L654.7 1514.6 L655.7 1519.0 L656.7 1521.1 L657.7 1524.6 L658.7 1529.9 L659.8 1532.1 L660.8 1535.7 L661.8 1539.3 L662.8 1541.8 L663.8 1544.6 L664.8 1546.2 L665.8 1550.3 L666.8 1552.3 L667.8 1554.0 L668.8 1557.1 L669.9 1558.0 L670.9 1560.1 L671.9 1561.6 L672.9 1564.8 L673.9 1566.5 L674.9 1567.7 L675.9 1570.0 L676.9 1571.0 L677.9 1573.3 L679.0 1573.9 L680.0 1575.2 L681.0 1576.6 L682.0 1577.6 L683.0 1579.8 L684.0 1581.3 L685.0 1581.7 L686.0 1583.1 L687.0 1584.7 L688.1 1586.2 L689.1 1587.4 L690.1 1588.8 L691.1 1588.3 L692.1 1590.7 L693.1 1590.2 L694.1 1591.5 L695.1 1591.4 L696.1 1592.6 L697.1 1592.9 L698.2 1595.4 L699.2 1595.2 L700.2 1595.7 L701.2 1596.8 L702.2 1597.0 L703.2 1597.8 L704.2 1597.9 L705.2 1599.5 L706.2 1599.0 L707.3 1599.4 L708.3 1600.1 L709.3 1600.3 L710.3 1599.8 L711.3 1600.3 L712.3 1601.0 L713.3 1601.0 L714.3 1601.8 L715.3 1602.4 L716.4 1603.1 L717.4 1602.7 L718.4 1602.2 L719.4 1601.8 L720.4 1602.1 L721.4 1603.0 L722.4 1602.1 L723.4 1603.4 L724.4 1602.8 L725.5 1603.8 L726.5 1603.2 L727.5 1602.8 L728.5 1604.4 L729.5 1604.8 L730.5 1604.0 L731.5 1604.3 L732.5 1604.7 L733.5 1605.6 L734.5 1604.9 L735.6 1604.9 L736.6 1605.0 L737.6 1604.1 L738.6 1604.8 L739.6 1604.5 L740.6 1604.3 L741.6 1604.7 L742.6 1605.3 L743.6 1604.8 L744.7 1605.1 L745.7 1605.1 L746.7 1605.2 L747.7 1605.8 L748.7 1605.4 L749.7 1605.4 L750.7 1604.8 L751.7 1605.2 L752.7 1605.1 L753.8 1605.3 L754.8 1605.3 L755.8 1605.8 L756.8 1606.4 L757.8 1606.6 L758.8 1605.7 L759.8 1605.4 L760.8 1606.1 L761.8 1607.0 L762.8 1605.6 L763.9 1606.4 L764.9 1606.4 L765.9 1607.4 L766.9 1606.4 L767.9 1605.9 L768.9 1606.7 L769.9 1606.8 L770.9 1606.2 L771.9 1607.6 L773.0 1606.6 L774.0 1605.7 L775.0 1606.3 L776.0 1606.9 L777.0 1606.3 L778.0 1606.5 L779.0 1607.4 L780.0 1607.4 L781.0 1606.0 L782.1 1607.4 L783.1 1607.8 L784.1 1606.2 L785.1 1606.9 L786.1 1607.2 L787.1 1607.0 L788.1 1606.5 L789.1 1607.7 L790.1 1606.7 L791.1 1606.6 L792.2 1606.4 L793.2 1607.6 L794.2 1606.9 L795.2 1607.7 L796.2 1607.0 L797.2 1607.9 L798.2 1606.6 L799.2 1606.4 L800.2 1607.6 L801.3 1607.8 L802.3 1606.3 L803.3 1606.8 L804.3 1606.5 L805.3 1608.3 L806.3 1606.4 L807.3 1607.0 L808.3 1607.7 L809.3 1607.5 L810.4 1606.8 L811.4 1606.7 L812.4 1608.0 L813.4 1607.1 L814.4 1608.1 L815.4 1606.4 L816.4 1607.5 L817.4 1606.5 L818.4 1606.9 L819.5 1607.2 L820.5 1607.9 L821.5 1607.4 L822.5 1608.2 L823.5 1608.2 L824.5 1607.0 L825.5 1607.8 L826.5 1606.9 L827.5 1608.0 L828.5 1607.0 L829.6 1607.0 L830.6 1607.9 L831.6 1608.3 L832.6 1607.7 L833.6 1607.5 L834.6 1608.3 L835.6 1608.1 L836.6 1608.4 L837.6 1607.3 L838.7 1606.6 L839.7 1608.1 L840.7 1608.5 L841.7 1607.0 L842.7 1606.8 L843.7 1606.5 L844.7 1607.2 L845.7 1607.8 L846.7 1606.7 L847.8 1608.2 L848.8 1607.0 L849.8 1608.3 L850.8 1607.6 L851.8 1607.4 L852.8 1607.6 L853.8 1608.0 L854.8 1607.8 L855.8 1606.6 L856.8 1607.3 L857.9 1607.0 L858.9 1607.7 L859.9 1606.5 L860.9 1607.3 L861.9 1606.6 L862.9 1605.8 L863.9 1605.4 L864.9 1607.2 L865.9 1605.4 L867.0 1604.9 L868.0 1605.7 L869.0 1605.2 L870.0 1604.4 L871.0 1603.2 L872.0 1603.7 L873.0 1602.1 L874.0 1601.8 L875.0 1602.5 L876.1 1600.2 L877.1 1601.5 L878.1 1600.6 L879.1 1599.0 L880.1 1599.8 L881.1 1598.8 L882.1 1599.1 L883.1 1598.3 L884.1 1597.5 L885.1 1597.6 L886.2 1599.8 L887.2 1600.2 L888.2 1599.0 L889.2 1601.3 L890.2 1601.4 L891.2 1602.3 L892.2 1603.0 L893.2 1603.7 L894.2 1602.9 L895.3 1603.2 L896.3 1603.8 L897.3 1603.8 L898.3 1604.6 L899.3 1605.4 L900.3 1605.2 L901.3 1604.7 L902.3 1605.5 L903.3 1606.5 L904.4 1607.0 L905.4 1605.1 L906.4 1605.9 L907.4 1606.4 L908.4 1605.8 L909.4 1605.8 L910.4 1605.7 L911.4 1606.5 L912.4 1605.6 L913.5 1605.1 L914.5 1605.1 L915.5 1603.0 L916.5 1603.3 L917.5 1601.9 L918.5 1600.7 L919.5 1599.5 L920.5 1598.1 L921.5 1596.6 L922.5 1596.0 L923.6 1592.8 L924.6 1592.8 L925.6 1589.6 L926.6 1588.3 L927.6 1587.2 L928.6 1588.2 L929.6 1587.8 L930.6 1586.5 L931.6 1587.9 L932.7 1589.2 L933.7 1589.3 L934.7 1592.9 L935.7 1593.5 L936.7 1595.3 L937.7 1597.5 L938.7 1598.4 L939.7 1599.1 L940.7 1599.9 L941.8 1602.7 L942.8 1602.5 L943.8 1604.1 L944.8 1603.1 L945.8 1605.0 L946.8 1605.5 L947.8 1605.0 L948.8 1604.4 L949.8 1605.4 L950.8 1605.8 L951.9 1604.4 L952.9 1604.4 L953.9 1604.3 L954.9 1605.4 L955.9 1605.1 L956.9 1605.4 L957.9 1604.6 L958.9 1605.0 L959.9 1604.8 L961.0 1603.8 L962.0 1603.2 L963.0 1603.8 L964.0 1604.7 L965.0 1603.3 L966.0 1603.5 L967.0 1602.1 L968.0 1602.4 L969.0 1601.9 L970.1 1601.9 L971.1 1601.9 L972.1 1600.8 L973.1 1600.5 L974.1 1601.3 L975.1 1601.2 L976.1 1600.3 L977.1 1599.6 L978.1 1600.0 L979.1 1599.0 L980.2 1598.0 L981.2 1598.7 L982.2 1596.5 L983.2 1596.4 L984.2 1596.6 L985.2 1596.1 L986.2 1595.5 L987.2 1595.0 L988.2 1593.6 L989.3 1593.6 L990.3 1593.1 L991.3 1593.4 L992.3 1591.3 L993.3 1592.1 L994.3 1591.6 L995.3 1591.7 L996.3 1589.3 L997.3 1589.9 L998.4 1588.5 L999.4 1587.9 L1000.4 1587.2 L1001.4 1586.8 L1002.4 1585.8 L1003.4 1584.9 L1004.4 1584.1 L1005.4 1584.3 L1006.4 1582.0 L1007.4 1580.3 L1008.5 1577.5 L1009.5 1575.8 L1010.5 1573.6 L1011.5 1570.7 L1012.5 1568.4 L1013.5 1563.8 L1014.5 1560.6 L1015.5 1556.9 L1016.5 1552.2 L1017.6 1546.2 L1018.6 1541.8 L1019.6 1537.0 L1020.6 1531.1 L1021.6 1523.9 L1022.6 1517.9 L1023.6 1510.9 L1024.6 1506.3 L1025.6 1499.9 L1026.7 1493.7 L1027.7 1490.2 L1028.7 1486.1 L1029.7 1482.1 L1030.7 1480.8 L1031.7 1480.6 L1032.7 1481.0 L1033.7 1482.2 L1034.7 1485.6 L1035.8 1490.8 L1036.8 1495.8 L1037.8 1499.8 L1038.8 1506.4 L1039.8 1513.8 L1040.8 1518.8 L1041.8 1527.0 L1042.8 1532.6 L1043.8 1537.7 L1044.8 1543.8 L1045.9 1550.3 L1046.9 1554.2 L1047.9 1559.7 L1048.9 1563.6 L1049.9 1567.6 L1050.9 1572.4 L1051.9 1575.3 L1052.9 1578.6 L1053.9 1580.5 L1055.0 1583.3 L1056.0 1585.7 L1057.0 1587.5 L1058.0 1588.8 L1059.0 1591.9 L1060.0 1593.4 L1061.0 1593.4 L1062.0 1594.5 L1063.0 1595.9 L1064.1 1596.8 L1065.1 1597.8 L1066.1 1597.4 L1067.1 1598.2 L1068.1 1599.2 L1069.1 1600.8 L1070.1 1599.6 L1071.1 1600.8 L1072.1 1601.7 L1073.1 1601.9 L1074.2 1601.3 L1075.2 1603.1 L1076.2 1603.1 L1077.2 1603.0 L1078.2 1602.0 L1079.2 1602.5 L1080.2 1602.2 L1081.2 1603.4 L1082.2 1603.5 L1083.3 1603.7 L1084.3 1603.9 L1085.3 1604.1 L1086.3 1603.6 L1087.3 1603.5 L1088.3 1604.8 L1089.3 1604.4 L1090.3 1605.2 L1091.3 1605.4 L1092.4 1605.0 L1093.4 1605.0 L1094.4 1605.1 L1095.4 1604.3 L1096.4 1606.2 L1097.4 1605.2 L1098.4 1604.6 L1099.4 1605.2 L1100.4 1605.6 L1101.4 1606.1 L1102.5 1606.1 L1103.5 1605.0 L1104.5 1605.2 L1105.5 1605.7 L1106.5 1605.3 L1107.5 1605.3 L1108.5 1605.5 L1109.5 1606.6 L1110.5 1606.4 L1111.6 1605.8 L1112.6 1606.7 L1113.6 1605.9 L1114.6 1606.6 L1115.6 1606.9 L1116.6 1606.7 L1117.6 1607.4 L1118.6 1607.0 L1119.6 1606.9 L1120.7 1607.7 L1121.7 1607.4 L1122.7 1607.3 L1123.7 1606.0 L1124.7 1606.6 L1125.7 1607.3 L1126.7 1605.8 L1127.7 1607.4 L1128.7 1606.8 L1129.8 1606.4 L1130.8 1606.5 L1131.8 1607.1 L1132.8 1606.3 L1133.8 1607.0 L1134.8 1606.5 L1135.8 1607.0 L1136.8 1605.9 L1137.8 1606.5 L1138.8 1607.8 L1139.9 1607.7 L1140.9 1605.9 L1141.9 1607.5 L1142.9 1607.9 L1143.9 1607.4 L1144.9 1606.9 L1145.9 1605.9 L1146.9 1607.1 L1147.9 1606.4 L1149.0 1606.1 L1150.0 1607.7 L1151.0 1606.5 L1152.0 1605.7 L1153.0 1606.6 L1154.0 1606.6 L1155.0 1606.9 L1156.0 1605.6 L1157.0 1605.5 L1158.1 1607.3 L1159.1 1606.2 L1160.1 1606.4 L1161.1 1605.8 L1162.1 1606.8 L1163.1 1606.4 L1164.1 1606.2 L1165.1 1605.6 L1166.1 1604.7 L1167.1 1604.3 L1168.2 1604.1 L1169.2 1604.0 L1170.2 1604.9 L1171.2 1603.8 L1172.2 1602.7 L1173.2 1603.0 L1174.2 1601.9 L1175.2 1600.3 L1176.2 1601.3 L1177.3 1598.8 L1178.3 1599.5 L1179.3 1597.8 L1180.3 1595.6 L1181.3 1595.9 L1182.3 1593.9 L1183.3 1592.8 L1184.3 1590.3 L1185.3 1588.6 L1186.4 1588.5 L1187.4 1586.4 L1188.4 1583.9 L1189.4 1583.0 L1190.4 1582.1 L1191.4 1579.3 L1192.4 1578.6 L1193.4 1576.8 L1194.4 1576.4 L1195.4 1573.1 L1196.5 1572.7 L1197.5 1571.3 L1198.5 1570.6 L1199.5 1571.7 L1200.5 1571.0 L1201.5 1571.3 L1202.5 1571.0 L1203.5 1571.5 L1204.5 1573.7 L1205.6 1574.7 L1206.6 1575.0 L1207.6 1577.0 L1208.6 1579.1 L1209.6 1580.6 L1210.6 1581.4 L1211.6 1583.0 L1212.6 1583.9 L1213.6 1586.5 L1214.7 1588.0 L1215.7 1590.5 L1216.7 1591.5 L1217.7 1593.3 L1218.7 1593.8 L1219.7 1596.0 L1220.7 1597.3 L1221.7 1598.1 L1222.7 1598.9 L1223.8 1600.2 L1224.8 1600.5 L1225.8 1602.2 L1226.8 1601.4 L1227.8 1602.4 L1228.8 1603.4 L1229.8 1604.9 L1230.8 1604.8 L1231.8 1604.4 L1232.8 1604.8 L1233.9 1604.8 L1234.9 1604.9 L1235.9 1606.3 L1236.9 1606.2 L1237.9 1606.7 L1238.9 1607.3 L1239.9 1607.4 L1240.9 1607.3 L1241.9 1607.8 L1243.0 1606.9 L1244.0 1606.6 L1245.0 1607.0 L1246.0 1606.8 L1247.0 1607.9 L1248.0 1608.0 L1249.0 1607.2 L1250.0 1606.6 L1251.0 1607.7 L1252.1 1608.6 L1253.1 1608.6 L1254.1 1608.0 L1255.1 1607.4 L1256.1 1608.6 L1257.1 1608.3 L1258.1 1607.4 L1259.1 1606.7 L1260.1 1608.1 L1261.1 1607.6 L1262.2 1607.8 L1263.2 1608.9 L1264.2 1608.3 L1265.2 1608.7 L1266.2 1608.5 L1267.2 1607.4 L1268.2 1607.6 L1269.2 1609.0 L1270.2 1608.9 L1271.3 1607.6 L1272.3 1608.9 L1273.3 1608.5 L1274.3 1608.6 L1275.3 1609.1 L1276.3 1609.1 L1277.3 1608.9 L1278.3 1608.4 L1279.3 1607.2 L1280.4 1607.9 L1281.4 1608.7 L1282.4 1607.8 L1283.4 1608.7 L1284.4 1608.2 L1285.4 1608.6 L1286.4 1607.3 L1287.4 1608.6 L1288.4 1607.6 L1289.4 1608.0 L1290.5 1607.5 L1291.5 1608.1 L1292.5 1607.5 L1293.5 1608.5 L1294.5 1607.9 L1295.5 1608.1 L1296.5 1608.3 L1297.5 1608.2 L1298.5 1608.3 L1299.6 1608.6 L1300.6 1607.5 L1301.6 1608.1 L1302.6 1608.3 L1303.6 1609.3 L1304.6 1608.4 L1305.6 1609.1 L1306.6 1609.0 L1307.6 1608.5 L1308.7 1608.3 L1309.7 1608.9 L1310.7 1608.9 L1311.7 1608.3 L1312.7 1608.5 L1313.7 1608.6 L1314.7 1609.3 L1315.7 1608.7 L1316.7 1608.1 L1317.8 1608.3 L1318.8 1608.3 L1319.8 1607.7 L1320.8 1608.0 L1321.8 1608.1 L1322.8 1609.5 L1323.8 1608.9 L1324.8 1608.1 L1325.8 1609.2 L1326.8 1607.6 L1327.9 1609.2 L1328.9 1607.7 L1329.9 1609.1 L1330.9 1607.7 L1331.9 1607.7 L1332.9 1608.8 L1333.9 1607.6 L1334.9 1609.2 L1335.9 1607.7 L1337.0 1608.7 L1338.0 1608.6 L1339.0 1609.3 L1340.0 1608.3 L1341.0 1609.0 L1342.0 1608.1 L1343.0 1607.9 L1344.0 1608.3 L1345.0 1609.5 L1346.1 1607.5 L1347.1 1607.6 L1348.1 1608.2 L1349.1 1608.8 L1350.1 1608.4 L1351.1 1607.7 L1352.1 1608.6 L1353.1 1607.9 L1354.1 1608.3 L1355.1 1608.7 L1356.2 1607.6 L1357.2 1608.7 L1358.2 1608.3 L1359.2 1609.5 L1360.2 1608.6 L1361.2 1609.5 L1362.2 1608.1 L1363.2 1609.6 L1364.2 1609.5 L1365.3 1609.3 L1366.3 1609.3 L1367.3 1608.5 L1368.3 1608.8 L1369.3 1609.0 L1370.3 1607.5 L1371.3 1607.6 L1372.3 1608.2 L1373.3 1607.9 L1374.4 1607.8 L1375.4 1609.1 L1376.4 1607.9 L1377.4 1609.1 L1378.4 1608.4 L1379.4 1608.8 L1380.4 1609.2 L1381.4 1607.9 L1382.4 1607.6 L1383.4 1608.9 L1384.5 1607.7 L1385.5 1608.8 L1386.5 1608.2 L1387.5 1607.5 L1388.5 1607.9 L1389.5 1609.5 L1390.5 1608.6 L1391.5 1608.8 L1392.5 1608.9 L1393.6 1607.8 L1394.6 1608.6 L1395.6 1608.1 L1396.6 1608.2 L1397.6 1608.5 L1398.6 1609.4 L1399.6 1608.1 L1400.6 1607.7 L1401.6 1609.2 L1402.7 1608.2 L1403.7 1608.5 L1404.7 1608.8 L1405.7 1608.0 L1406.7 1607.5 L1407.7 1609.5 L1408.7 1607.6 L1409.7 1608.7 L1410.7 1607.8 L1411.7 1609.2 L1412.8 1608.0 L1413.8 1609.3 L1414.8 1608.8 L1415.8 1607.5 L1416.8 1608.1 L1417.8 1607.9 L1418.8 1608.5 L1419.8 1608.5 L1420.8 1608.5 L1421.9 1607.9 L1422.9 1608.0 L1423.9 1609.1 L1424.9 1608.6 L1425.9 1608.4 L1426.9 1608.3 L1427.9 1607.5 L1428.9 1607.7 L1429.9 1609.2 L1431.0 1608.7 L1432.0 1609.3 L1433.0 1609.4 L1434.0 1609.3 L1435.0 1609.1 L1436.0 1607.9 L1437.0 1608.1 L1438.0 1607.8 L1439.0 1608.9 L1440.1 1609.1 L1441.1 1607.4 L1442.1 1607.7 L1443.1 1607.4 L1444.1 1609.4 L1445.1 1608.6 L1446.1 1608.1 L1447.1 1607.9 L1448.1 1607.5 L1449.1 1608.3 L1450.2 1608.6 L1451.2 1609.4 L1452.2 1607.7 L1453.2 1607.3 L1454.2 1607.5 L1455.2 1608.0 L1456.2 1608.7 L1457.2 1608.9 L1458.2 1607.8 L1459.3 1607.4 L1460.3 1607.4 L1461.3 1609.0 L1462.3 1608.1 L1463.3 1608.3 L1464.3 1608.5 L1465.3 1607.7 L1466.3 1607.4 L1467.3 1607.8 L1468.4 1607.9 L1469.4 1607.9 L1470.4 1608.0 L1471.4 1608.2 L1472.4 1608.8 L1473.4 1607.7 L1474.4 1609.1 L1475.4 1607.9 L1476.4 1608.5 L1477.4 1608.1 L1478.5 1607.9 L1479.5 1608.3 L1480.5 1607.2 L1481.5 1608.8 L1482.5 1609.3 L1483.5 1607.2 L1484.5 1608.6 L1485.5 1608.7 L1486.5 1608.4 L1487.6 1608.0 L1488.6 1607.1 L1489.6 1607.7 L1490.6 1608.5 L1491.6 1608.1 L1492.6 1608.2 L1493.6 1608.1 L1494.6 1608.3 L1495.6 1608.8 L1496.7 1608.3 L1497.7 1608.3 L1498.7 1608.7 L1499.7 1607.4 L1500.7 1608.4 L1501.7 1608.8 L1502.7 1607.9 L1503.7 1607.3 L1504.7 1607.4 L1505.7 1607.8 L1506.8 1607.5 L1507.8 1608.4 L1508.8 1608.8 L1509.8 1608.5 L1510.8 1608.3 L1511.8 1608.4 L1512.8 1608.0 L1513.8 1608.7 L1514.8 1608.7 L1515.9 1608.4 L1516.9 1608.5 L1517.9 1607.2 L1518.9 1607.8 L1519.9 1608.5 L1520.9 1608.0 L1521.9 1607.0 L1522.9 1607.7 L1523.9 1607.7 L1525.0 1608.0 L1526.0 1608.4 L1527.0 1607.5 L1528.0 1608.6 L1529.0 1607.1 L1530.0 1608.7 L1531.0 1607.2 L1532.0 1607.9 L1533.0 1607.3 L1534.1 1607.5 L1535.1 1608.4 L1536.1 1607.5 L1537.1 1608.5 L1538.1 1608.1 L1539.1 1607.8 L1540.1 1608.0 L1541.1 1607.2 L1542.1 1606.5 L1543.1 1607.8 L1544.2 1606.7 L1545.2 1608.0 L1546.2 1607.0 L1547.2 1607.7 L1548.2 1607.3 L1549.2 1608.2 L1550.2 1606.6 L1551.2 1607.9 L1552.2 1607.3 L1553.3 1607.7 L1554.3 1606.5 L1555.3 1607.0 L1556.3 1606.9 L1557.3 1606.6 L1558.3 1607.6 L1559.3 1608.0 L1560.3 1606.3 L1561.3 1607.4 L1562.4 1606.3 L1563.4 1605.9 L1564.4 1606.6 L1565.4 1607.7 L1566.4 1606.0 L1567.4 1606.4 L1568.4 1607.2 L1569.4 1607.3 L1570.4 1606.6 L1571.4 1607.4 L1572.5 1605.6 L1573.5 1606.0 L1574.5 1605.7 L1575.5 1606.6 L1576.5 1605.4 L1577.5 1607.0 L1578.5 1605.7 L1579.5 1606.6 L1580.5 1607.1 L1581.6 1606.8 L1582.6 1606.5 L1583.6 1605.2 L1584.6 1606.0 L1585.6 1605.7 L1586.6 1605.3 L1587.6 1605.9 L1588.6 1605.1 L1589.6 1604.9 L1590.7 1604.2 L1591.7 1605.0 L1592.7 1604.1 L1593.7 1603.8 L1594.7 1604.0 L1595.7 1604.6 L1596.7 1604.8 L1597.7 1604.9 L1598.7 1603.2 L1599.7 1604.4 L1600.8 1603.2 L1601.8 1603.2 L1602.8 1603.7 L1603.8 1603.0 L1604.8 1601.3 L1605.8 1601.4 L1606.8 1600.0 L1607.8 1599.4 L1608.8 1600.5 L1609.9 1598.4 L1610.9 1598.9 L1611.9 1597.0 L1612.9 1595.8 L1613.9 1593.4 L1614.9 1592.8 L1615.9 1592.0 L1616.9 1589.5 L1617.9 1587.5 L1619.0 1586.1 L1620.0 1583.3 L1621.0 1579.7 L1622.0 1576.7 L1623.0 1574.2 L1624.0 1572.6 L1625.0 1567.5 L1626.0 1565.0 L1627.0 1560.6 L1628.1 1558.4 L1629.1 1554.7 L1630.1 1549.3 L1631.1 1546.8 L1632.1 1543.6 L1633.1 1539.1 L1634.1 1534.6 L1635.1 1531.8 L1636.1 1529.9 L1637.1 1526.2 L1638.2 1524.6 L1639.2 1523.0 L1640.2 1522.5 L1641.2 1522.7 L1642.2 1521.8 L1643.2 1523.5 L1644.2 1523.9 L1645.2 1526.5 L1646.2 1528.1 L1647.3 1531.7 L1648.3 1534.8 L1649.3 1537.7 L1650.3 1541.7 L1651.3 1545.5 L1652.3 1548.2 L1653.3 1551.2 L1654.3 1556.0 L1655.3 1558.3 L1656.4 1561.8 L1657.4 1565.1 L1658.4 1568.9 L1659.4 1570.6 L1660.4 1573.7 L1661.4 1576.7 L1662.4 1579.9 L1663.4 1581.1 L1664.4 1584.1 L1665.4 1583.9 L1666.5 1586.6 L1667.5 1587.8 L1668.5 1588.6 L1669.5 1589.3 L1670.5 1590.3 L1671.5 1591.1 L1672.5 1591.3 L1673.5 1591.3 L1674.5 1592.4 L1675.6 1592.5 L1676.6 1592.0 L1677.6 1593.7 L1678.6 1593.4 L1679.6 1592.9 L1680.6 1593.0 L1681.6 1591.4 L1682.6 1592.7 L1683.6 1592.6 L1684.7 1591.8 L1685.7 1591.1 L1686.7 1590.1 L1687.7 1589.4 L1688.7 1589.3 L1689.7 1589.5 L1690.7 1590.3 L1691.7 1589.8 L1692.7 1588.2 L1693.7 1587.4 L1694.8 1588.2 L1695.8 1586.3 L1696.8 1586.9 L1697.8 1586.4 L1698.8 1585.9 L1699.8 1586.7 L1700.8 1586.1 L1701.8 1584.1 L1702.8 1585.1 L1703.9 1585.1 L1704.9 1584.2 L1705.9 1582.8 L1706.9 1583.2 L1707.9 1582.7 L1708.9 1581.9 L1709.9 1580.7 L1710.9 1579.2 L1711.9 1579.1 L1713.0 1576.7 L1714.0 1575.1 L1715.0 1573.8 L1716.0 1573.5 L1717.0 1570.8 L1718.0 1567.1 L1719.0 1564.3 L1720.0 1562.6 L1721.0 1558.3 L1722.0 1554.2 L1723.1 1548.6 L1724.1 1544.8 L1725.1 1538.2 L1726.1 1530.6 L1727.1 1522.9 L1728.1 1516.5 L1729.1 1506.3 L1730.1 1496.3 L1731.1 1485.1 L1732.2 1474.5 L1733.2 1460.8 L1734.2 1449.1 L1735.2 1435.1 L1736.2 1419.9 L1737.2 1403.0 L1738.2 1387.4 L1739.2 1369.7 L1740.2 1351.9 L1741.3 1333.7 L1742.3 1312.9 L1743.3 1295.1 L1744.3 1274.5 L1745.3 1255.8 L1746.3 1237.8 L1747.3 1217.7 L1748.3 1201.6 L1749.3 1182.3 L1750.4 1168.1 L1751.4 1152.7 L1752.4 1138.5 L1753.4 1127.8 L1754.4 1116.2 L1755.4 1109.7 L1756.4 1102.3 L1757.4 1100.5 L1758.4 1098.3 L1759.4 1100.2 L1760.5 1103.6 L1761.5 1109.1 L1762.5 1117.4 L1763.5 1127.5 L1764.5 1138.9 L1765.5 1153.5 L1766.5 1168.6 L1767.5 1183.9 L1768.5 1202.1 L1769.6 1218.9 L1770.6 1238.7 L1771.6 1257.8 L1772.6 1278.1 L1773.6 1297.6 L1774.6 1316.7 L1775.6 1334.6 L1776.6 1353.2 L1777.6 1370.8 L1778.7 1389.4 L1779.7 1405.7 L1780.7 1422.6 L1781.7 1438.5 L1782.7 1452.3 L1783.7 1465.3 L1784.7 1477.9 L1785.7 1489.4 L1786.7 1500.7 L1787.7 1511.4 L1788.8 1520.7 L1789.8 1529.3 L1790.8 1537.1 L1791.8 1543.7 L1792.8 1550.3 L1793.8 1555.4 L1794.8 1561.3 L1795.8 1565.8 L1796.8 1569.1 L1797.9 1573.1 L1798.9 1576.6 L1799.9 1579.4 L1800.9 1581.3 L1801.9 1584.0 L1802.9 1586.7 L1803.9 1588.3 L1804.9 1589.1 L1805.9 1591.7 L1807.0 1591.9 L1808.0 1592.1 L1809.0 1594.4 L1810.0 1594.7 L1811.0 1594.9 L1812.0 1595.1 L1813.0 1596.2 L1814.0 1596.9 L1815.0 1597.9 L1816.0 1598.2 L1817.1 1598.1 L1818.1 1599.1 L1819.1 1598.6 L1820.1 1600.5 L1821.1 1599.3 L1822.1 1599.6 L1823.1 1600.8 L1824.1 1601.6 L1825.1 1601.2 L1826.2 1600.9 L1827.2 1600.7 L1828.2 1600.7 L1829.2 1602.3 L1830.2 1602.7 L1831.2 1602.8 L1832.2 1601.2 L1833.2 1602.1 L1834.2 1603.3 L1835.3 1602.3 L1836.3 1601.9 L1837.3 1602.7 L1838.3 1603.7 L1839.3 1602.3 L1840.3 1602.9 L1841.3 1604.2 L1842.3 1603.0 L1843.3 1603.7 L1844.4 1603.7 L1845.4 1604.2 L1846.4 1604.5 L1847.4 1604.3 L1848.4 1604.2 L1849.4 1604.4 L1850.4 1603.7 L1851.4 1605.4 L1852.4 1605.2 L1853.4 1603.8 L1854.5 1604.5 L1855.5 1604.6 L1856.5 1604.6 L1857.5 1605.5 L1858.5 1605.3 L1859.5 1605.7 L1860.5 1605.9 L1861.5 1604.2 L1862.5 1604.8 L1863.6 1604.6 L1864.6 1606.5 L1865.6 1605.1 L1866.6 1606.0 L1867.6 1605.6 L1868.6 1605.3 L1869.6 1606.7 L1870.6 1606.0 L1871.6 1605.7 L1872.7 1605.0 L1873.7 1605.9 L1874.7 1606.3 L1875.7 1605.8 L1876.7 1605.8 L1877.7 1606.5 L1878.7 1606.0 L1879.7 1606.6 L1880.7 1607.2 L1881.7 1606.6 L1882.8 1607.1 L1883.8 1606.3 L1884.8 1606.3 L1885.8 1605.5 L1886.8 1605.8 L1887.8 1605.9 L1888.8 1605.4 L1889.8 1606.9 L1890.8 1606.7 L1891.9 1607.1 L1892.9 1607.4 L1893.9 1606.5 L1894.9 1606.5 L1895.9 1607.4 L1896.9 1605.7 L1897.9 1605.6 L1898.9 1607.6 L1899.9 1607.7 L1901.0 1607.6 L1902.0 1606.2 L1903.0 1605.9 L1904.0 1607.6 L1905.0 1607.8 L1906.0 1606.6 L1907.0 1607.1 L1908.0 1607.8 L1909.0 1607.8 L1910.0 1607.4 L1911.1 1607.4 L1912.1 1607.2 L1913.1 1606.6 L1914.1 1607.3 L1915.1 1607.3 L1916.1 1607.3 L1917.1 1605.9 L1918.1 1607.2 L1919.1 1606.6 L1920.2 1606.8 L1921.2 1607.0 L1922.2 1606.8 L1923.2 1607.6 L1924.2 1607.2 L1925.2 1606.2 L1926.2 1605.9 L1927.2 1607.0 L1928.2 1607.1 L1929.3 1605.5 L1930.3 1607.1 L1931.3 1605.6 L1932.3 1605.3 L1933.3 1606.8 L1934.3 1605.3 L1935.3 1606.7 L1936.3 1606.8 L1937.3 1606.2 L1938.4 1606.0 L1939.4 1605.3 L1940.4 1605.5 L1941.4 1604.7 L1942.4 1604.8 L1943.4 1605.8 L1944.4 1605.5 L1945.4 1604.2 L1946.4 1605.4 L1947.4 1603.5 L1948.5 1603.6 L1949.5 1604.7 L1950.5 1604.3 L1951.5 1604.2 L1952.5 1603.7 L1953.5 1603.8 L1954.5 1604.1 L1955.5 1603.4 L1956.5 1603.3 L1957.6 1602.7 L1958.6 1602.3 L1959.6 1601.1 L1960.6 1601.4 L1961.6 1601.2 L1962.6 1600.4 L1963.6 1601.2 L1964.6 1600.9 L1965.6 1601.0 L1966.7 1599.5 L1967.7 1599.2 L1968.7 1598.9 L1969.7 1599.3 L1970.7 1600.1 L1971.7 1599.9 L1972.7 1598.2 L1973.7 1597.8 L1974.7 1598.3 L1975.7 1597.3 L1976.8 1597.1 L1977.8 1597.3 L1978.8 1598.0 L1979.8 1597.7 L1980.8 1597.8 L1981.8 1597.5 L1982.8 1597.3 L1983.8 1598.2 L1984.8 1597.9 L1985.9 1597.7 L1986.9 1596.8 L1987.9 1596.1 L1988.9 1596.5 L1989.9 1597.6 L1990.9 1597.0 L1991.9 1596.6 L1992.9 1597.6 L1993.9 1597.7 L1995.0 1596.5 L1996.0 1597.2 L1997.0 1596.3 L1998.0 1597.2 L1999.0 1595.6 L2000.0 1596.6 L2001.0 1596.1 L2002.0 1595.6 L2003.0 1594.6 L2004.0 1594.2 L2005.1 1594.0 L2006.1 1593.8 L2007.1 1594.6 L2008.1 1593.8 L2009.1 1592.4 L2010.1 1590.8 L2011.1 1590.6 L2012.1 1590.9 L2013.1 1589.7 L2014.2 1587.6 L2015.2 1587.6 L2016.2 1585.9 L2017.2 1584.9 L2018.2 1584.1 L2019.2 1583.5 L2020.2 1582.4 L2021.2 1582.2 L2022.2 1581.8 L2023.3 1579.3 L2024.3 1580.6 L2025.3 1579.5 L2026.3 1578.3 L2027.3 1577.3 L2028.3 1578.7 L2029.3 1578.7 L2030.3 1577.6 L2031.3 1579.0 L2032.4 1579.4 L2033.4 1580.1 L2034.4 1581.5 L2035.4 1580.4 L2036.4 1581.9 L2037.4 1584.3 L2038.4 1585.1 L2039.4 1586.1 L2040.4 1586.6 L2041.4 1586.6 L2042.5 1589.2 L2043.5 1590.0 L2044.5 1590.7 L2045.5 1591.2 L2046.5 1591.2 L2047.5 1592.8 L2048.5 1592.8 L2049.5 1594.3 L2050.5 1595.3 L2051.6 1595.0 L2052.6 1596.3 L2053.6 1597.3 L2054.6 1597.9 L2055.6 1598.9 L2056.6 1599.5 L2057.6 1600.9 L2058.6 1601.4 L2059.6 1600.8 L2060.7 1602.8 L2061.7 1603.2 L2062.7 1603.9 L2063.7 1604.0 L2064.7 1605.1 L2065.7 1604.9 L2066.7 1604.8 L2067.7 1605.0 L2068.7 1604.9 L2069.7 1606.8 L2070.8 1605.9 L2071.8 1607.0 L2072.8 1606.9 L2073.8 1606.6 L2074.8 1606.1 L2075.8 1606.6 L2076.8 1606.0 L2077.8 1608.2 L2078.8 1607.6 L2079.9 1607.4 L2080.9 1608.4 L2081.9 1608.4 L2082.9 1607.8 L2083.9 1607.4 L2084.9 1608.4 L2085.9 1608.6 L2086.9 1608.1 L2087.9 1607.2 L2089.0 1607.6 L2090.0 1606.7 L2091.0 1607.6 L2092.0 1607.0 L2093.0 1607.7 L2094.0 1607.9 L2095.0 1608.1 L2096.0 1608.9 L2097.0 1608.9 L2098.0 1607.7 L2099.1 1607.3 L2100.1 1609.1 L2101.1 1608.8 L2102.1 1608.5 L2103.1 1608.5 L2104.1 1607.4 L2105.1 1608.7 L2106.1 1608.6 L2107.1 1608.2 L2108.2 1607.2 L2109.2 1608.7 L2110.2 1607.9 L2111.2 1609.2 L2112.2 1608.4 L2113.2 1607.4 L2114.2 1608.9 L2115.2 1608.6 L2116.2 1608.0 L2117.3 1608.2 L2118.3 1608.2 L2119.3 1608.1 L2120.3 1608.0 L2121.3 1608.7 L2122.3 1608.7 L2123.3 1608.6 L2124.3 1608.4 L2125.3 1608.3 L2126.4 1607.6 L2127.4 1608.7 L2128.4 1608.5 L2129.4 1607.7 L2130.4 1607.5 L2131.4 1609.0 L2132.4 1608.0 L2133.4 1609.0 L2134.4 1608.0 L2135.4 1609.5 L2136.5 1608.5 L2137.5 1608.4 L2138.5 1608.1 L2139.5 1607.6 L2140.5 1607.9 L2141.5 1608.4 L2142.5 1608.6 L2143.5 1609.6 L2144.5 1608.5 L2145.6 1608.4 L2146.6 1608.1 L2147.6 1609.3 L2148.6 1608.4 L2149.6 1609.6 L2150.6 1608.1 L2151.6 1607.9 L2152.6 1608.7 L2153.6 1608.2 L2154.7 1608.3 L2155.7 1609.0 L2156.7 1609.5 L2157.7 1608.1 L2158.7 1608.9 L2159.7 1609.4 L2160.7 1608.8 L2161.7 1607.9 L2162.7 1607.7 L2163.7 1608.5 L2164.8 1607.7 L2165.8 1609.4 L2166.8 1608.7 L2167.8 1609.7 L2168.8 1609.3 L2169.8 1607.9 L2170.8 1609.6 L2171.8 1608.4 L2172.8 1608.7 L2173.9 1607.7 L2174.9 1607.7 L2175.9 1609.5 L2176.9 1609.2 L2177.9 1607.7 L2178.9 1609.1 L2179.9 1609.4 L2180.9 1607.9 L2181.9 1608.5 L2183.0 1609.2 L2184.0 1608.6 L2185.0 1608.9 L2186.0 1608.8 L2187.0 1608.6 L2188.0 1609.5 L2189.0 1608.5 L2190.0 1607.8 L2191.0 1608.6 L2192.0 1608.2 L2193.1 1609.2 L2194.1 1609.5 L2195.1 1609.8 L2196.1 1607.8 L2197.1 1609.6 L2198.1 1609.0 L2199.1 1608.5 L2200.1 1608.3 L2201.1 1608.5 L2202.2 1608.9 L2203.2 1608.1 L2204.2 1608.9 L2205.2 1608.1 L2206.2 1609.8 L2207.2 1608.3 L2208.2 1609.7 L2209.2 1609.1 L2210.2 1608.9 L2211.3 1609.5 L2212.3 1608.9 L2213.3 1608.1 L2214.3 1609.8 L2215.3 1609.5 L2216.3 1607.8 L2217.3 1608.9 L2218.3 1609.1 L2219.3 1608.0 L2220.3 1608.3 L2221.4 1609.5 L2222.4 1608.6 L2223.4 1609.5 L2224.4 1608.3 L2225.4 1608.7 L2226.4 1608.2 L2227.4 1609.8 L2228.4 1607.9 L2229.4 1609.4 L2230.5 1608.1 L2231.5 1609.0 L2232.5 1608.0 L2233.5 1609.7 L2234.5 1609.8 L2235.5 1608.9 L2236.5 1608.0 L2237.5 1608.9 L2238.5 1608.9 L2239.6 1609.6 L2240.6 1608.8 L2241.6 1609.0 L2242.6 1608.1 L2243.6 1608.4 L2244.6 1608.9 L2245.6 1609.6 L2246.6 1609.6 L2247.6 1607.9 L2248.7 1608.7 L2249.7 1609.5 L2250.7 1608.2 L2251.7 1609.5 L2252.7 1609.0 L2253.7 1608.1 L2254.7 1609.7 L2255.7 1609.8 L2256.7 1609.9 L2257.7 1609.6 L2258.8 1609.2 L2259.8 1609.3 L2260.8 1609.4 L2261.8 1609.9 L2262.8 1608.9 L2263.8 1609.0 L2264.8 1608.4 L2265.8 1609.3 L2266.8 1608.7 L2267.9 1609.3 L2268.9 1608.4 L2269.9 1609.6 L2270.9 1608.9 L2271.9 1609.0 L2272.9 1609.0 L2273.9 1608.8 L2274.9 1608.9 L2275.9 1609.3 L2277.0 1608.2 L2278.0 1608.0 L2279.0 1608.8 L2280.0 1608.6 L2281.0 1608.5 L2282.0 1609.3 L2283.0 1608.7 L2284.0 1609.0 L2285.0 1609.0 L2286.0 1609.2 L2287.1 1608.9 L2288.1 1609.5 L2289.1 1609.5 L2290.1 1609.6 L2291.1 1608.7 L2292.1 1609.5 L2293.1 1608.4 L2294.1 1608.1 L2295.1 1608.4 L2296.2 1609.3 L2297.2 1608.0 L2298.2 1609.3 L2299.2 1609.3 L2300.2 1608.8 L2301.2 1608.6 L2302.2 1609.2 L2303.2 1608.3 L2304.2 1608.2 L2305.3 1609.4 L2306.3 1609.6 L2307.3 1609.2 L2308.3 1608.5 L2309.3 1608.6 L2310.3 1609.7 L2311.3 1609.2 L2312.3 1608.1 L2313.3 1608.0 L2314.3 1608.7 L2315.4 1608.4 L2316.4 1608.2 L2317.4 1609.6 L2318.4 1609.9 L2319.4 1608.7 L2320.4 1609.2 L2321.4 1608.5 L2322.4 1609.4 L2323.4 1609.1 L2324.5 1608.3 L2325.5 1609.8 L2326.5 1609.2 L2327.5 1609.7 L2328.5 1608.9 L2329.5 1608.5 L2330.5 1607.9 L2331.5 1608.4 L2332.5 1609.7 L2333.6 1609.1 L2334.6 1608.9 L2335.6 1608.7 L2336.6 1608.6 L2337.6 1608.0 L2338.6 1608.0 L2339.6 1609.6 L2340.6 1609.7 L2341.6 1608.0 L2342.7 1609.7 L2343.7 1608.0 L2344.7 1609.8 L2345.7 1608.8 L2346.7 1609.8 L2347.7 1609.8 L2348.7 1609.4 L2349.7 1608.4 L2350.7 1608.6 L2351.7 1609.4 L2352.8 1609.8 L2353.8 1609.3 L2354.8 1609.7 L2355.8 1609.6 L2356.8 1609.0 L2357.8 1609.0 L2358.8 1608.1 L2359.8 1609.9 L2360.8 1608.9 L2361.9 1608.9 L2362.9 1609.8 L2363.9 1609.3 L2364.9 1609.8 L2365.9 1608.2 L2366.9 1609.3 L2367.9 1609.9 L2368.9 1609.1 L2369.9 1609.0 L2371.0 1608.2 L2372.0 1608.5 L2373.0 1609.6 L2374.0 1608.1 L2375.0 1610.0 L2376.0 1608.6 L2377.0 1610.0 L2378.0 1608.3 L2379.0 1609.7 L2380.0 1608.4 L2381.1 1608.4 L2382.1 1608.4 L2383.1 1609.9 L2384.1 1609.2 L2385.1 1609.9 L2386.1 1608.6 L2387.1 1608.0 L2388.1 1609.0 L2389.1 1608.7 L2390.2 1608.7 L2391.2 1609.8 L2392.2 1609.3 L2393.2 1609.4 L2394.2 1608.5 L2395.2 1609.2 L2396.2 1609.3 L2397.2 1608.9 L2398.2 1609.7 L2399.3 1610.0 L2400.3 1609.6 L2401.3 1610.0 L2402.3 1608.7 L2403.3 1609.1 L2404.3 1608.8 L2405.3 1608.9 L2406.3 1610.0 L2407.3 1608.4 L2407.3 1610.0 L196.8 1610.0 Z" fill="url(#gr)" fill-opacity="0.93"/>
<path d="M135.2 1607.5 L136.2 1607.5 L137.2 1609.4 L138.2 1609.4 L139.2 1607.7 L140.2 1607.9 L141.2 1608.1 L142.2 1608.8 L143.3 1608.2 L144.3 1608.2 L145.3 1608.2 L146.3 1609.1 L147.3 1608.5 L148.3 1608.6 L149.3 1607.8 L150.3 1607.2 L151.3 1607.3 L152.4 1608.2 L153.4 1608.4 L154.4 1608.7 L155.4 1609.2 L156.4 1609.2 L157.4 1608.2 L158.4 1608.5 L159.4 1608.3 L160.4 1607.2 L161.5 1607.9 L162.5 1607.7 L163.5 1608.4 L164.5 1608.7 L165.5 1608.0 L166.5 1608.3 L167.5 1607.4 L168.5 1606.2 L169.5 1606.7 L170.5 1607.6 L171.6 1605.9 L172.6 1605.9 L173.6 1605.8 L174.6 1605.2 L175.6 1605.2 L176.6 1604.8 L177.6 1605.4 L178.6 1603.7 L179.6 1603.3 L180.7 1604.6 L181.7 1602.9 L182.7 1602.5 L183.7 1602.5 L184.7 1601.9 L185.7 1601.5 L186.7 1600.1 L187.7 1600.5 L188.7 1599.4 L189.8 1599.9 L190.8 1598.4 L191.8 1598.1 L192.8 1598.7 L193.8 1598.3 L194.8 1597.4 L195.8 1597.8 L196.8 1598.3 L197.8 1598.9 L198.8 1598.9 L199.9 1598.3 L200.9 1599.8 L201.9 1598.6 L202.9 1600.3 L203.9 1599.3 L204.9 1601.0 L205.9 1600.1 L206.9 1601.0 L207.9 1601.8 L209.0 1602.1 L210.0 1602.1 L211.0 1602.4 L212.0 1603.1 L213.0 1603.4 L214.0 1602.7 L215.0 1601.7 L216.0 1602.2 L217.0 1603.2 L218.1 1601.5 L219.1 1601.6 L220.1 1601.4 L221.1 1603.1 L222.1 1602.3 L223.1 1604.3 L224.1 1603.6 L225.1 1604.9 L226.1 1605.5 L227.2 1604.6 L228.2 1606.6 L229.2 1606.0 L230.2 1605.6 L231.2 1607.0 L232.2 1607.3 L233.2 1605.9 L234.2 1606.9 L235.2 1606.3 L236.2 1607.8 L237.3 1607.1 L238.3 1607.5 L239.3 1606.4 L240.3 1607.6 L241.3 1605.7 L242.3 1607.6 L243.3 1606.1 L244.3 1607.5 L245.3 1606.9 L246.4 1605.7 L247.4 1607.0 L248.4 1606.8 L249.4 1605.6 L250.4 1606.2 L251.4 1606.8 L252.4 1604.6 L253.4 1606.3 L254.4 1606.3 L255.5 1605.5 L256.5 1604.8 L257.5 1604.3 L258.5 1605.4 L259.5 1604.8 L260.5 1605.2 L261.5 1604.1 L262.5 1603.1 L263.5 1602.9 L264.5 1602.3 L265.6 1602.3 L266.6 1601.8 L267.6 1601.8 L268.6 1602.0 L269.6 1602.2 L270.6 1600.9 L271.6 1601.3 L272.6 1601.4 L273.6 1600.2 L274.7 1598.9 L275.7 1600.1 L276.7 1598.7 L277.7 1598.7 L278.7 1598.0 L279.7 1598.3 L280.7 1596.1 L281.7 1597.2 L282.7 1596.0 L283.8 1595.9 L284.8 1596.3 L285.8 1594.6 L286.8 1595.0 L287.8 1594.7 L288.8 1594.3 L289.8 1593.5 L290.8 1593.2 L291.8 1591.5 L292.8 1591.3 L293.9 1589.8 L294.9 1589.5 L295.9 1588.9 L296.9 1590.1 L297.9 1589.2 L298.9 1589.1 L299.9 1588.0 L300.9 1587.5 L301.9 1586.7 L303.0 1586.5 L304.0 1587.1 L305.0 1586.4 L306.0 1585.8 L307.0 1586.6 L308.0 1586.2 L309.0 1585.1 L310.0 1585.4 L311.0 1583.8 L312.1 1584.5 L313.1 1584.5 L314.1 1584.1 L315.1 1583.7 L316.1 1583.5 L317.1 1582.6 L318.1 1582.5 L319.1 1582.7 L320.1 1581.8 L321.2 1582.5 L322.2 1580.9 L323.2 1580.7 L324.2 1581.1 L325.2 1581.8 L326.2 1581.6 L327.2 1581.6 L328.2 1582.9 L329.2 1582.3 L330.2 1582.4 L331.3 1583.5 L332.3 1584.1 L333.3 1583.1 L334.3 1584.6 L335.3 1584.8 L336.3 1584.7 L337.3 1586.0 L338.3 1587.5 L339.3 1586.8 L340.4 1588.9 L341.4 1590.5 L342.4 1589.9 L343.4 1591.9 L344.4 1592.3 L345.4 1592.0 L346.4 1593.2 L347.4 1595.4 L348.4 1595.2 L349.5 1596.0 L350.5 1596.5 L351.5 1597.8 L352.5 1597.6 L353.5 1599.3 L354.5 1599.5 L355.5 1599.8 L356.5 1599.1 L357.5 1601.4 L358.5 1600.4 L359.6 1602.0 L360.6 1601.5 L361.6 1602.3 L362.6 1602.4 L363.6 1602.1 L364.6 1603.1 L365.6 1603.9 L366.6 1604.1 L367.6 1604.3 L368.7 1602.9 L369.7 1603.4 L370.7 1602.9 L371.7 1603.5 L372.7 1605.1 L373.7 1603.8 L374.7 1603.6 L375.7 1603.8 L376.7 1604.3 L377.8 1604.6 L378.8 1604.4 L379.8 1603.7 L380.8 1604.9 L381.8 1604.3 L382.8 1604.4 L383.8 1603.4 L384.8 1603.7 L385.8 1603.5 L386.8 1603.7 L387.9 1604.8 L388.9 1604.9 L389.9 1604.4 L390.9 1604.9 L391.9 1604.5 L392.9 1603.9 L393.9 1603.4 L394.9 1604.1 L395.9 1603.6 L397.0 1605.1 L398.0 1604.6 L399.0 1603.2 L400.0 1605.0 L401.0 1604.4 L402.0 1605.1 L403.0 1605.1 L404.0 1603.4 L405.0 1603.2 L406.1 1603.9 L407.1 1605.0 L408.1 1604.7 L409.1 1604.8 L410.1 1603.9 L411.1 1603.9 L412.1 1604.4 L413.1 1604.2 L414.1 1605.1 L415.2 1604.2 L416.2 1603.4 L417.2 1603.8 L418.2 1605.2 L419.2 1604.3 L420.2 1603.9 L421.2 1604.9 L422.2 1603.6 L423.2 1604.6 L424.2 1604.1 L425.3 1604.7 L426.3 1603.5 L427.3 1604.0 L428.3 1604.5 L429.3 1605.4 L430.3 1604.8 L431.3 1605.7 L432.3 1604.6 L433.3 1604.0 L434.4 1605.5 L435.4 1604.9 L436.4 1605.0 L437.4 1605.2 L438.4 1604.5 L439.4 1604.1 L440.4 1604.6 L441.4 1605.2 L442.4 1604.1 L443.5 1605.5 L444.5 1604.7 L445.5 1604.9 L446.5 1604.7 L447.5 1604.5 L448.5 1605.9 L449.5 1605.1 L450.5 1605.6 L451.5 1605.0 L452.5 1604.4 L453.6 1605.2 L454.6 1606.5 L455.6 1605.6 L456.6 1605.1 L457.6 1604.7 L458.6 1605.2 L459.6 1604.9 L460.6 1606.6 L461.6 1604.7 L462.7 1605.1 L463.7 1605.4 L464.7 1604.8 L465.7 1604.8 L466.7 1606.5 L467.7 1605.0 L468.7 1605.1 L469.7 1606.3 L470.7 1605.2 L471.8 1605.5 L472.8 1606.4 L473.8 1605.0 L474.8 1606.5 L475.8 1605.4 L476.8 1605.8 L477.8 1606.2 L478.8 1605.5 L479.8 1605.7 L480.8 1606.3 L481.9 1604.6 L482.9 1606.5 L483.9 1606.6 L484.9 1605.6 L485.9 1604.8 L486.9 1605.2 L487.9 1605.0 L488.9 1605.5 L489.9 1605.1 L491.0 1605.8 L492.0 1605.9 L493.0 1605.3 L494.0 1606.3 L495.0 1606.2 L496.0 1604.7 L497.0 1605.9 L498.0 1604.6 L499.0 1604.5 L500.1 1605.2 L501.1 1604.6 L502.1 1604.3 L503.1 1604.1 L504.1 1605.6 L505.1 1605.4 L506.1 1604.9 L507.1 1604.6 L508.1 1604.9 L509.1 1605.4 L510.2 1604.2 L511.2 1603.2 L512.2 1604.4 L513.2 1603.9 L514.2 1604.1 L515.2 1603.8 L516.2 1602.7 L517.2 1603.7 L518.2 1602.8 L519.3 1602.9 L520.3 1602.6 L521.3 1601.5 L522.3 1603.1 L523.3 1601.2 L524.3 1602.0 L525.3 1600.9 L526.3 1600.2 L527.3 1600.1 L528.4 1600.2 L529.4 1598.8 L530.4 1600.0 L531.4 1598.3 L532.4 1598.3 L533.4 1597.5 L534.4 1596.2 L535.4 1595.7 L536.4 1595.5 L537.5 1595.6 L538.5 1595.2 L539.5 1594.1 L540.5 1594.0 L541.5 1593.3 L542.5 1591.3 L543.5 1592.6 L544.5 1590.6 L545.5 1591.1 L546.5 1590.7 L547.6 1590.4 L548.6 1590.7 L549.6 1589.6 L550.6 1590.1 L551.6 1589.4 L552.6 1589.7 L553.6 1588.5 L554.6 1588.5 L555.6 1589.6 L556.7 1589.3 L557.7 1588.9 L558.7 1590.3 L559.7 1591.0 L560.7 1590.9 L561.7 1591.2 L562.7 1590.3 L563.7 1591.1 L564.7 1591.3 L565.8 1590.5 L566.8 1591.7 L567.8 1590.5 L568.8 1590.9 L569.8 1591.4 L570.8 1590.4 L571.8 1591.3 L572.8 1590.0 L573.8 1589.6 L574.8 1590.2 L575.9 1589.5 L576.9 1588.5 L577.9 1588.5 L578.9 1588.0 L579.9 1587.1 L580.9 1586.3 L581.9 1586.0 L582.9 1584.7 L583.9 1585.3 L585.0 1583.6 L586.0 1582.5 L587.0 1581.9 L588.0 1580.6 L589.0 1579.7 L590.0 1576.5 L591.0 1576.2 L592.0 1574.1 L593.0 1571.3 L594.1 1570.7 L595.1 1566.8 L596.1 1566.1 L597.1 1563.7 L598.1 1560.1 L599.1 1557.0 L600.1 1552.5 L601.1 1549.0 L602.1 1545.5 L603.1 1542.1 L604.2 1537.6 L605.2 1533.6 L606.2 1527.5 L607.2 1523.3 L608.2 1518.1 L609.2 1511.6 L610.2 1506.6 L611.2 1500.0 L612.2 1492.2 L613.3 1487.2 L614.3 1480.2 L615.3 1473.0 L616.3 1465.7 L617.3 1458.0 L618.3 1451.1 L619.3 1443.7 L620.3 1436.8 L621.3 1430.0 L622.4 1422.8 L623.4 1417.4 L624.4 1411.9 L625.4 1406.4 L626.4 1404.0 L627.4 1400.8 L628.4 1397.3 L629.4 1397.1 L630.4 1396.4 L631.5 1398.7 L632.5 1399.8 L633.5 1402.0 L634.5 1406.7 L635.5 1410.2 L636.5 1415.4 L637.5 1421.3 L638.5 1425.8 L639.5 1433.2 L640.5 1439.2 L641.6 1445.2 L642.6 1452.2 L643.6 1457.4 L644.6 1464.1 L645.6 1470.1 L646.6 1476.1 L647.6 1480.9 L648.6 1486.3 L649.6 1491.9 L650.7 1497.7 L651.7 1502.6 L652.7 1506.9 L653.7 1512.2 L654.7 1516.2 L655.7 1518.2 L656.7 1523.8 L657.7 1525.5 L658.7 1529.4 L659.8 1532.1 L660.8 1536.9 L661.8 1539.2 L662.8 1540.9 L663.8 1545.2 L664.8 1547.5 L665.8 1549.4 L666.8 1552.0 L667.8 1554.3 L668.8 1555.3 L669.9 1558.6 L670.9 1558.7 L671.9 1561.2 L672.9 1564.4 L673.9 1564.3 L674.9 1567.4 L675.9 1568.6 L676.9 1570.0 L677.9 1572.4 L679.0 1573.2 L680.0 1575.6 L681.0 1576.7 L682.0 1576.5 L683.0 1578.0 L684.0 1579.9 L685.0 1580.8 L686.0 1581.5 L687.0 1584.2 L688.1 1584.5 L689.1 1586.3 L690.1 1587.4 L691.1 1588.3 L692.1 1589.0 L693.1 1590.2 L694.1 1590.7 L695.1 1591.2 L696.1 1591.4 L697.1 1591.6 L698.2 1592.2 L699.2 1593.3 L700.2 1594.3 L701.2 1594.0 L702.2 1596.2 L703.2 1596.9 L704.2 1595.8 L705.2 1596.7 L706.2 1598.0 L707.3 1598.1 L708.3 1598.7 L709.3 1598.8 L710.3 1599.1 L711.3 1599.5 L712.3 1599.0 L713.3 1599.2 L714.3 1600.0 L715.3 1600.5 L716.4 1601.1 L717.4 1600.4 L718.4 1600.1 L719.4 1601.9 L720.4 1601.1 L721.4 1601.3 L722.4 1601.6 L723.4 1603.1 L724.4 1602.2 L725.5 1603.1 L726.5 1603.2 L727.5 1602.5 L728.5 1602.5 L729.5 1602.7 L730.5 1602.6 L731.5 1602.8 L732.5 1603.4 L733.5 1604.4 L734.5 1603.0 L735.6 1603.0 L736.6 1603.1 L737.6 1603.7 L738.6 1604.9 L739.6 1604.7 L740.6 1605.0 L741.6 1603.9 L742.6 1604.2 L743.6 1605.1 L744.7 1603.5 L745.7 1603.5 L746.7 1603.8 L747.7 1604.8 L748.7 1605.2 L749.7 1605.4 L750.7 1604.2 L751.7 1604.5 L752.7 1605.5 L753.8 1604.2 L754.8 1605.0 L755.8 1605.4 L756.8 1605.4 L757.8 1604.8 L758.8 1605.5 L759.8 1605.1 L760.8 1606.3 L761.8 1605.1 L762.8 1606.0 L763.9 1604.7 L764.9 1606.3 L765.9 1606.1 L766.9 1605.7 L767.9 1606.0 L768.9 1605.8 L769.9 1605.0 L770.9 1606.5 L771.9 1605.4 L773.0 1605.6 L774.0 1605.4 L775.0 1606.2 L776.0 1606.2 L777.0 1606.5 L778.0 1606.2 L779.0 1606.7 L780.0 1606.9 L781.0 1606.3 L782.1 1606.9 L783.1 1606.4 L784.1 1606.2 L785.1 1606.8 L786.1 1607.1 L787.1 1606.2 L788.1 1605.7 L789.1 1607.1 L790.1 1606.3 L791.1 1606.2 L792.2 1605.7 L793.2 1606.2 L794.2 1607.0 L795.2 1607.2 L796.2 1605.9 L797.2 1607.1 L798.2 1607.7 L799.2 1605.9 L800.2 1607.4 L801.3 1607.1 L802.3 1607.1 L803.3 1607.3 L804.3 1606.3 L805.3 1607.1 L806.3 1606.9 L807.3 1607.0 L808.3 1606.1 L809.3 1607.9 L810.4 1606.7 L811.4 1607.7 L812.4 1607.6 L813.4 1606.7 L814.4 1607.2 L815.4 1607.9 L816.4 1606.8 L817.4 1606.1 L818.4 1606.7 L819.5 1607.0 L820.5 1606.3 L821.5 1606.1 L822.5 1607.7 L823.5 1607.4 L824.5 1606.0 L825.5 1606.1 L826.5 1607.7 L827.5 1606.6 L828.5 1606.2 L829.6 1606.8 L830.6 1606.6 L831.6 1607.0 L832.6 1607.6 L833.6 1607.7 L834.6 1608.0 L835.6 1606.7 L836.6 1607.8 L837.6 1606.8 L838.7 1607.3 L839.7 1607.2 L840.7 1606.0 L841.7 1607.3 L842.7 1607.1 L843.7 1607.3 L844.7 1607.6 L845.7 1607.6 L846.7 1606.9 L847.8 1606.3 L848.8 1607.8 L849.8 1606.0 L850.8 1606.5 L851.8 1607.8 L852.8 1606.4 L853.8 1607.0 L854.8 1606.7 L855.8 1607.5 L856.8 1606.6 L857.9 1606.5 L858.9 1605.9 L859.9 1606.2 L860.9 1605.8 L861.9 1605.5 L862.9 1606.4 L863.9 1606.5 L864.9 1605.3 L865.9 1605.6 L867.0 1605.2 L868.0 1604.3 L869.0 1603.2 L870.0 1602.4 L871.0 1601.6 L872.0 1600.2 L873.0 1601.1 L874.0 1599.3 L875.0 1599.3 L876.1 1597.1 L877.1 1596.7 L878.1 1596.4 L879.1 1595.3 L880.1 1593.8 L881.1 1593.7 L882.1 1592.4 L883.1 1593.5 L884.1 1593.6 L885.1 1592.7 L886.2 1593.9 L887.2 1595.6 L888.2 1594.9 L889.2 1596.7 L890.2 1596.3 L891.2 1597.9 L892.2 1598.4 L893.2 1599.1 L894.2 1600.7 L895.3 1600.5 L896.3 1603.2 L897.3 1603.1 L898.3 1602.6 L899.3 1604.8 L900.3 1603.8 L901.3 1603.4 L902.3 1604.2 L903.3 1604.1 L904.4 1605.9 L905.4 1605.0 L906.4 1604.9 L907.4 1605.2 L908.4 1605.2 L909.4 1604.2 L910.4 1605.3 L911.4 1605.3 L912.4 1603.7 L913.5 1602.3 L914.5 1601.9 L915.5 1601.3 L916.5 1601.0 L917.5 1598.3 L918.5 1598.5 L919.5 1596.2 L920.5 1592.9 L921.5 1590.3 L922.5 1588.8 L923.6 1585.1 L924.6 1584.2 L925.6 1580.7 L926.6 1579.6 L927.6 1577.5 L928.6 1576.5 L929.6 1576.4 L930.6 1576.0 L931.6 1576.9 L932.7 1579.0 L933.7 1580.4 L934.7 1584.1 L935.7 1585.7 L936.7 1588.3 L937.7 1591.1 L938.7 1592.3 L939.7 1596.1 L940.7 1597.3 L941.8 1598.8 L942.8 1600.3 L943.8 1600.1 L944.8 1601.9 L945.8 1602.7 L946.8 1603.4 L947.8 1603.8 L948.8 1603.0 L949.8 1603.5 L950.8 1604.0 L951.9 1605.1 L952.9 1604.2 L953.9 1605.2 L954.9 1604.8 L955.9 1605.4 L956.9 1603.9 L957.9 1603.3 L958.9 1603.9 L959.9 1603.9 L961.0 1604.5 L962.0 1603.9 L963.0 1603.7 L964.0 1603.6 L965.0 1603.8 L966.0 1603.7 L967.0 1602.3 L968.0 1601.6 L969.0 1601.6 L970.1 1601.7 L971.1 1602.7 L972.1 1601.8 L973.1 1600.2 L974.1 1599.6 L975.1 1600.1 L976.1 1599.6 L977.1 1599.0 L978.1 1599.4 L979.1 1598.0 L980.2 1598.2 L981.2 1596.7 L982.2 1597.1 L983.2 1596.1 L984.2 1595.8 L985.2 1595.4 L986.2 1595.0 L987.2 1593.5 L988.2 1593.4 L989.3 1593.6 L990.3 1592.9 L991.3 1591.6 L992.3 1591.5 L993.3 1591.2 L994.3 1590.1 L995.3 1591.4 L996.3 1590.0 L997.3 1589.4 L998.4 1589.3 L999.4 1587.6 L1000.4 1587.0 L1001.4 1587.5 L1002.4 1586.3 L1003.4 1585.0 L1004.4 1584.1 L1005.4 1583.6 L1006.4 1581.3 L1007.4 1580.6 L1008.5 1579.2 L1009.5 1575.9 L1010.5 1573.5 L1011.5 1571.3 L1012.5 1568.0 L1013.5 1563.5 L1014.5 1560.1 L1015.5 1556.7 L1016.5 1551.1 L1017.6 1546.9 L1018.6 1542.0 L1019.6 1535.8 L1020.6 1529.7 L1021.6 1523.3 L1022.6 1517.6 L1023.6 1511.3 L1024.6 1505.7 L1025.6 1500.5 L1026.7 1494.1 L1027.7 1490.0 L1028.7 1484.2 L1029.7 1482.4 L1030.7 1480.0 L1031.7 1479.1 L1032.7 1481.1 L1033.7 1481.7 L1034.7 1485.9 L1035.8 1490.7 L1036.8 1494.6 L1037.8 1500.7 L1038.8 1505.7 L1039.8 1513.1 L1040.8 1520.3 L1041.8 1526.9 L1042.8 1533.2 L1043.8 1538.3 L1044.8 1543.7 L1045.9 1550.7 L1046.9 1555.3 L1047.9 1559.8 L1048.9 1563.4 L1049.9 1567.4 L1050.9 1571.3 L1051.9 1575.2 L1052.9 1578.5 L1053.9 1582.0 L1055.0 1583.6 L1056.0 1586.8 L1057.0 1588.5 L1058.0 1589.1 L1059.0 1591.2 L1060.0 1592.2 L1061.0 1594.0 L1062.0 1595.4 L1063.0 1595.9 L1064.1 1596.6 L1065.1 1598.0 L1066.1 1597.4 L1067.1 1597.7 L1068.1 1600.0 L1069.1 1600.3 L1070.1 1599.6 L1071.1 1600.1 L1072.1 1601.6 L1073.1 1601.2 L1074.2 1602.2 L1075.2 1601.2 L1076.2 1602.0 L1077.2 1602.5 L1078.2 1603.5 L1079.2 1603.2 L1080.2 1603.2 L1081.2 1603.7 L1082.2 1604.2 L1083.3 1604.4 L1084.3 1603.5 L1085.3 1603.2 L1086.3 1603.5 L1087.3 1604.1 L1088.3 1603.9 L1089.3 1605.4 L1090.3 1605.4 L1091.3 1604.4 L1092.4 1606.0 L1093.4 1606.0 L1094.4 1604.6 L1095.4 1605.9 L1096.4 1606.0 L1097.4 1605.7 L1098.4 1604.8 L1099.4 1606.7 L1100.4 1604.9 L1101.4 1606.2 L1102.5 1605.7 L1103.5 1606.0 L1104.5 1606.8 L1105.5 1605.1 L1106.5 1606.8 L1107.5 1605.5 L1108.5 1605.4 L1109.5 1606.3 L1110.5 1605.3 L1111.6 1607.3 L1112.6 1607.1 L1113.6 1606.5 L1114.6 1607.4 L1115.6 1605.8 L1116.6 1606.5 L1117.6 1605.9 L1118.6 1607.1 L1119.6 1607.6 L1120.7 1605.8 L1121.7 1607.3 L1122.7 1606.9 L1123.7 1607.5 L1124.7 1606.6 L1125.7 1606.9 L1126.7 1607.5 L1127.7 1607.8 L1128.7 1607.2 L1129.8 1606.3 L1130.8 1607.6 L1131.8 1607.5 L1132.8 1606.6 L1133.8 1606.6 L1134.8 1606.3 L1135.8 1606.6 L1136.8 1606.2 L1137.8 1607.7 L1138.8 1606.0 L1139.9 1607.9 L1140.9 1607.7 L1141.9 1607.8 L1142.9 1606.3 L1143.9 1606.9 L1144.9 1606.0 L1145.9 1605.9 L1146.9 1605.9 L1147.9 1606.6 L1149.0 1607.2 L1150.0 1605.8 L1151.0 1606.3 L1152.0 1607.4 L1153.0 1606.6 L1154.0 1607.7 L1155.0 1607.7 L1156.0 1606.3 L1157.0 1606.1 L1158.1 1605.7 L1159.1 1605.9 L1160.1 1607.1 L1161.1 1605.7 L1162.1 1605.1 L1163.1 1605.6 L1164.1 1605.9 L1165.1 1606.1 L1166.1 1606.4 L1167.1 1604.9 L1168.2 1603.9 L1169.2 1605.4 L1170.2 1603.6 L1171.2 1603.0 L1172.2 1603.7 L1173.2 1602.1 L1174.2 1603.0 L1175.2 1602.1 L1176.2 1600.8 L1177.3 1599.3 L1178.3 1599.2 L1179.3 1599.2 L1180.3 1596.3 L1181.3 1596.0 L1182.3 1594.3 L1183.3 1594.2 L1184.3 1592.7 L1185.3 1591.8 L1186.4 1590.1 L1187.4 1588.1 L1188.4 1586.6 L1189.4 1584.5 L1190.4 1582.6 L1191.4 1582.2 L1192.4 1579.4 L1193.4 1578.6 L1194.4 1578.0 L1195.4 1577.2 L1196.5 1574.6 L1197.5 1574.4 L1198.5 1575.1 L1199.5 1573.4 L1200.5 1573.9 L1201.5 1574.0 L1202.5 1573.6 L1203.5 1575.4 L1204.5 1576.1 L1205.6 1576.5 L1206.6 1576.9 L1207.6 1579.9 L1208.6 1579.7 L1209.6 1581.4 L1210.6 1584.1 L1211.6 1584.6 L1212.6 1586.3 L1213.6 1587.6 L1214.7 1589.5 L1215.7 1591.5 L1216.7 1592.5 L1217.7 1594.4 L1218.7 1595.2 L1219.7 1596.6 L1220.7 1598.3 L1221.7 1599.1 L1222.7 1599.9 L1223.8 1600.6 L1224.8 1601.1 L1225.8 1601.4 L1226.8 1603.1 L1227.8 1603.1 L1228.8 1604.1 L1229.8 1604.8 L1230.8 1605.4 L1231.8 1604.0 L1232.8 1604.4 L1233.9 1604.9 L1234.9 1606.6 L1235.9 1606.8 L1236.9 1607.1 L1237.9 1606.9 L1238.9 1606.8 L1239.9 1607.8 L1240.9 1607.0 L1241.9 1606.5 L1243.0 1606.3 L1244.0 1607.8 L1245.0 1608.3 L1246.0 1606.6 L1247.0 1607.6 L1248.0 1607.8 L1249.0 1608.2 L1250.0 1608.0 L1251.0 1608.0 L1252.1 1608.1 L1253.1 1608.2 L1254.1 1607.6 L1255.1 1607.0 L1256.1 1608.1 L1257.1 1607.9 L1258.1 1607.8 L1259.1 1607.1 L1260.1 1607.2 L1261.1 1606.8 L1262.2 1608.6 L1263.2 1607.2 L1264.2 1608.3 L1265.2 1607.8 L1266.2 1607.9 L1267.2 1607.8 L1268.2 1608.4 L1269.2 1608.9 L1270.2 1609.1 L1271.3 1607.1 L1272.3 1607.2 L1273.3 1608.2 L1274.3 1609.0 L1275.3 1607.4 L1276.3 1608.1 L1277.3 1608.2 L1278.3 1607.8 L1279.3 1608.9 L1280.4 1608.8 L1281.4 1607.5 L1282.4 1607.7 L1283.4 1607.2 L1284.4 1608.3 L1285.4 1607.2 L1286.4 1607.4 L1287.4 1608.2 L1288.4 1607.4 L1289.4 1609.0 L1290.5 1609.2 L1291.5 1607.6 L1292.5 1609.0 L1293.5 1608.3 L1294.5 1607.8 L1295.5 1607.9 L1296.5 1608.9 L1297.5 1607.7 L1298.5 1609.3 L1299.6 1608.2 L1300.6 1607.5 L1301.6 1608.2 L1302.6 1608.8 L1303.6 1607.3 L1304.6 1607.9 L1305.6 1607.7 L1306.6 1607.5 L1307.6 1607.4 L1308.7 1608.2 L1309.7 1607.7 L1310.7 1608.4 L1311.7 1608.9 L1312.7 1608.9 L1313.7 1608.9 L1314.7 1609.4 L1315.7 1608.2 L1316.7 1608.6 L1317.8 1607.5 L1318.8 1609.4 L1319.8 1607.8 L1320.8 1609.1 L1321.8 1608.8 L1322.8 1608.9 L1323.8 1607.5 L1324.8 1608.1 L1325.8 1608.5 L1326.8 1609.1 L1327.9 1609.4 L1328.9 1608.7 L1329.9 1607.4 L1330.9 1608.6 L1331.9 1608.1 L1332.9 1607.6 L1333.9 1609.4 L1334.9 1608.8 L1335.9 1608.6 L1337.0 1609.1 L1338.0 1608.7 L1339.0 1608.1 L1340.0 1609.3 L1341.0 1608.1 L1342.0 1608.9 L1343.0 1608.1 L1344.0 1609.2 L1345.0 1607.9 L1346.1 1608.7 L1347.1 1607.8 L1348.1 1607.5 L1349.1 1608.3 L1350.1 1609.5 L1351.1 1608.8 L1352.1 1607.5 L1353.1 1608.2 L1354.1 1607.9 L1355.1 1608.5 L1356.2 1607.6 L1357.2 1607.6 L1358.2 1608.3 L1359.2 1608.3 L1360.2 1609.3 L1361.2 1609.5 L1362.2 1609.1 L1363.2 1608.0 L1364.2 1607.8 L1365.3 1607.9 L1366.3 1607.7 L1367.3 1609.5 L1368.3 1609.5 L1369.3 1609.0 L1370.3 1609.5 L1371.3 1608.3 L1372.3 1607.6 L1373.3 1607.6 L1374.4 1609.3 L1375.4 1608.1 L1376.4 1608.1 L1377.4 1608.2 L1378.4 1608.7 L1379.4 1609.1 L1380.4 1607.7 L1381.4 1607.6 L1382.4 1608.0 L1383.4 1608.4 L1384.5 1609.5 L1385.5 1609.0 L1386.5 1609.0 L1387.5 1609.0 L1388.5 1609.1 L1389.5 1608.1 L1390.5 1608.1 L1391.5 1609.2 L1392.5 1607.6 L1393.6 1609.6 L1394.6 1607.5 L1395.6 1608.3 L1396.6 1608.2 L1397.6 1609.0 L1398.6 1608.1 L1399.6 1607.7 L1400.6 1609.1 L1401.6 1609.3 L1402.7 1607.9 L1403.7 1609.0 L1404.7 1609.3 L1405.7 1608.5 L1406.7 1609.1 L1407.7 1609.1 L1408.7 1608.9 L1409.7 1609.4 L1410.7 1607.8 L1411.7 1608.3 L1412.8 1608.1 L1413.8 1608.9 L1414.8 1607.9 L1415.8 1607.5 L1416.8 1607.4 L1417.8 1609.4 L1418.8 1608.9 L1419.8 1609.3 L1420.8 1608.5 L1421.9 1608.1 L1422.9 1608.2 L1423.9 1608.8 L1424.9 1607.5 L1425.9 1608.2 L1426.9 1607.4 L1427.9 1608.6 L1428.9 1608.1 L1429.9 1609.3 L1431.0 1608.3 L1432.0 1608.1 L1433.0 1609.0 L1434.0 1608.2 L1435.0 1609.2 L1436.0 1608.5 L1437.0 1608.2 L1438.0 1608.5 L1439.0 1609.1 L1440.1 1609.1 L1441.1 1608.7 L1442.1 1608.1 L1443.1 1608.5 L1444.1 1609.0 L1445.1 1608.7 L1446.1 1608.8 L1447.1 1609.2 L1448.1 1608.2 L1449.1 1608.4 L1450.2 1608.7 L1451.2 1609.4 L1452.2 1607.5 L1453.2 1609.3 L1454.2 1609.2 L1455.2 1608.8 L1456.2 1607.7 L1457.2 1607.4 L1458.2 1607.8 L1459.3 1609.0 L1460.3 1607.6 L1461.3 1609.3 L1462.3 1609.1 L1463.3 1609.1 L1464.3 1608.2 L1465.3 1608.1 L1466.3 1608.0 L1467.3 1607.3 L1468.4 1607.8 L1469.4 1607.8 L1470.4 1609.0 L1471.4 1607.4 L1472.4 1607.4 L1473.4 1607.6 L1474.4 1609.2 L1475.4 1607.8 L1476.4 1608.2 L1477.4 1608.2 L1478.5 1608.7 L1479.5 1607.6 L1480.5 1607.6 L1481.5 1607.6 L1482.5 1608.6 L1483.5 1607.7 L1484.5 1609.1 L1485.5 1607.8 L1486.5 1609.2 L1487.6 1609.2 L1488.6 1609.0 L1489.6 1607.8 L1490.6 1607.1 L1491.6 1608.2 L1492.6 1607.8 L1493.6 1608.0 L1494.6 1607.4 L1495.6 1607.1 L1496.7 1607.4 L1497.7 1608.5 L1498.7 1609.0 L1499.7 1607.2 L1500.7 1608.6 L1501.7 1607.5 L1502.7 1607.3 L1503.7 1608.8 L1504.7 1608.7 L1505.7 1608.2 L1506.8 1607.3 L1507.8 1607.3 L1508.8 1607.0 L1509.8 1608.5 L1510.8 1607.7 L1511.8 1607.2 L1512.8 1608.2 L1513.8 1607.8 L1514.8 1608.5 L1515.9 1607.2 L1516.9 1608.0 L1517.9 1607.9 L1518.9 1607.6 L1519.9 1608.3 L1520.9 1607.2 L1521.9 1607.9 L1522.9 1608.0 L1523.9 1607.3 L1525.0 1607.5 L1526.0 1607.4 L1527.0 1607.0 L1528.0 1607.1 L1529.0 1608.0 L1530.0 1607.4 L1531.0 1607.0 L1532.0 1608.7 L1533.0 1607.4 L1534.1 1607.6 L1535.1 1607.9 L1536.1 1608.5 L1537.1 1608.1 L1538.1 1607.1 L1539.1 1606.8 L1540.1 1606.5 L1541.1 1607.0 L1542.1 1606.7 L1543.1 1606.8 L1544.2 1608.2 L1545.2 1607.1 L1546.2 1606.7 L1547.2 1606.9 L1548.2 1607.9 L1549.2 1607.0 L1550.2 1607.6 L1551.2 1607.5 L1552.2 1606.8 L1553.3 1606.9 L1554.3 1608.0 L1555.3 1606.9 L1556.3 1608.1 L1557.3 1607.8 L1558.3 1606.4 L1559.3 1606.2 L1560.3 1607.6 L1561.3 1606.5 L1562.4 1607.7 L1563.4 1607.0 L1564.4 1607.3 L1565.4 1607.8 L1566.4 1607.0 L1567.4 1606.7 L1568.4 1606.0 L1569.4 1607.6 L1570.4 1607.1 L1571.4 1607.7 L1572.5 1607.2 L1573.5 1607.1 L1574.5 1605.8 L1575.5 1605.5 L1576.5 1607.0 L1577.5 1606.4 L1578.5 1606.2 L1579.5 1606.2 L1580.5 1605.2 L1581.6 1605.1 L1582.6 1607.0 L1583.6 1606.2 L1584.6 1605.8 L1585.6 1605.5 L1586.6 1605.7 L1587.6 1605.0 L1588.6 1606.4 L1589.6 1605.5 L1590.7 1604.6 L1591.7 1605.9 L1592.7 1605.8 L1593.7 1604.7 L1594.7 1605.6 L1595.7 1604.6 L1596.7 1605.4 L1597.7 1605.1 L1598.7 1604.5 L1599.7 1603.4 L1600.8 1603.5 L1601.8 1603.2 L1602.8 1602.9 L1603.8 1603.0 L1604.8 1601.4 L1605.8 1601.8 L1606.8 1601.2 L1607.8 1601.9 L1608.8 1600.8 L1609.9 1599.4 L1610.9 1597.8 L1611.9 1597.4 L1612.9 1597.7 L1613.9 1594.9 L1614.9 1594.9 L1615.9 1592.6 L1616.9 1591.9 L1617.9 1590.3 L1619.0 1586.9 L1620.0 1585.3 L1621.0 1582.8 L1622.0 1580.1 L1623.0 1577.6 L1624.0 1575.2 L1625.0 1572.4 L1626.0 1568.8 L1627.0 1566.2 L1628.1 1562.8 L1629.1 1558.3 L1630.1 1555.9 L1631.1 1551.6 L1632.1 1548.4 L1633.1 1545.6 L1634.1 1541.8 L1635.1 1539.9 L1636.1 1538.1 L1637.1 1534.0 L1638.2 1532.4 L1639.2 1531.1 L1640.2 1529.9 L1641.2 1530.6 L1642.2 1530.8 L1643.2 1531.1 L1644.2 1531.7 L1645.2 1534.7 L1646.2 1535.7 L1647.3 1537.7 L1648.3 1541.9 L1649.3 1545.3 L1650.3 1548.1 L1651.3 1550.2 L1652.3 1554.4 L1653.3 1556.1 L1654.3 1561.1 L1655.3 1562.5 L1656.4 1566.7 L1657.4 1568.4 L1658.4 1572.4 L1659.4 1575.5 L1660.4 1576.7 L1661.4 1579.8 L1662.4 1580.4 L1663.4 1582.6 L1664.4 1585.4 L1665.4 1586.4 L1666.5 1587.6 L1667.5 1588.3 L1668.5 1590.4 L1669.5 1590.6 L1670.5 1591.4 L1671.5 1591.8 L1672.5 1592.3 L1673.5 1592.9 L1674.5 1593.2 L1675.6 1593.3 L1676.6 1592.1 L1677.6 1593.1 L1678.6 1593.9 L1679.6 1593.2 L1680.6 1592.2 L1681.6 1592.2 L1682.6 1593.2 L1683.6 1592.2 L1684.7 1591.8 L1685.7 1590.7 L1686.7 1591.5 L1687.7 1589.8 L1688.7 1589.6 L1689.7 1590.9 L1690.7 1589.5 L1691.7 1589.1 L1692.7 1588.4 L1693.7 1587.5 L1694.8 1588.6 L1695.8 1586.8 L1696.8 1588.2 L1697.8 1586.0 L1698.8 1586.9 L1699.8 1587.0 L1700.8 1584.9 L1701.8 1584.2 L1702.8 1584.4 L1703.9 1583.7 L1704.9 1584.1 L1705.9 1583.9 L1706.9 1582.5 L1707.9 1581.5 L1708.9 1582.0 L1709.9 1581.0 L1710.9 1580.3 L1711.9 1579.3 L1713.0 1576.8 L1714.0 1577.2 L1715.0 1575.6 L1716.0 1573.4 L1717.0 1569.9 L1718.0 1567.9 L1719.0 1564.6 L1720.0 1561.5 L1721.0 1557.4 L1722.0 1553.8 L1723.1 1550.2 L1724.1 1544.7 L1725.1 1538.0 L1726.1 1532.0 L1727.1 1524.1 L1728.1 1516.0 L1729.1 1505.5 L1730.1 1495.7 L1731.1 1485.6 L1732.2 1474.6 L1733.2 1462.1 L1734.2 1449.4 L1735.2 1434.4 L1736.2 1419.9 L1737.2 1403.2 L1738.2 1385.9 L1739.2 1369.4 L1740.2 1350.8 L1741.3 1332.1 L1742.3 1313.0 L1743.3 1294.9 L1744.3 1276.1 L1745.3 1255.4 L1746.3 1237.3 L1747.3 1219.1 L1748.3 1200.2 L1749.3 1182.6 L1750.4 1166.1 L1751.4 1152.4 L1752.4 1139.2 L1753.4 1127.3 L1754.4 1117.2 L1755.4 1109.4 L1756.4 1102.1 L1757.4 1099.2 L1758.4 1099.3 L1759.4 1100.5 L1760.5 1103.9 L1761.5 1108.1 L1762.5 1117.5 L1763.5 1126.6 L1764.5 1139.8 L1765.5 1153.5 L1766.5 1167.0 L1767.5 1185.2 L1768.5 1201.7 L1769.6 1219.8 L1770.6 1238.9 L1771.6 1257.2 L1772.6 1276.4 L1773.6 1297.1 L1774.6 1316.3 L1775.6 1334.9 L1776.6 1353.6 L1777.6 1371.4 L1778.7 1388.7 L1779.7 1406.5 L1780.7 1421.4 L1781.7 1437.7 L1782.7 1453.1 L1783.7 1465.9 L1784.7 1478.4 L1785.7 1491.0 L1786.7 1500.6 L1787.7 1511.3 L1788.8 1520.8 L1789.8 1529.8 L1790.8 1537.8 L1791.8 1544.6 L1792.8 1550.1 L1793.8 1555.7 L1794.8 1560.8 L1795.8 1566.8 L1796.8 1569.3 L1797.9 1573.0 L1798.9 1576.3 L1799.9 1579.4 L1800.9 1581.2 L1801.9 1583.2 L1802.9 1586.0 L1803.9 1588.0 L1804.9 1589.3 L1805.9 1590.0 L1807.0 1591.5 L1808.0 1592.3 L1809.0 1594.2 L1810.0 1594.4 L1811.0 1595.9 L1812.0 1595.8 L1813.0 1597.6 L1814.0 1597.0 L1815.0 1597.1 L1816.0 1597.2 L1817.1 1598.5 L1818.1 1598.0 L1819.1 1599.8 L1820.1 1600.5 L1821.1 1599.7 L1822.1 1600.4 L1823.1 1600.5 L1824.1 1600.4 L1825.1 1600.3 L1826.2 1600.3 L1827.2 1601.6 L1828.2 1601.3 L1829.2 1601.4 L1830.2 1601.4 L1831.2 1601.8 L1832.2 1602.3 L1833.2 1601.7 L1834.2 1603.5 L1835.3 1602.1 L1836.3 1603.5 L1837.3 1603.6 L1838.3 1602.7 L1839.3 1603.3 L1840.3 1603.7 L1841.3 1604.4 L1842.3 1604.5 L1843.3 1604.2 L1844.4 1604.7 L1845.4 1603.5 L1846.4 1604.7 L1847.4 1604.4 L1848.4 1604.4 L1849.4 1603.9 L1850.4 1603.7 L1851.4 1604.2 L1852.4 1605.2 L1853.4 1605.4 L1854.5 1604.6 L1855.5 1605.1 L1856.5 1604.4 L1857.5 1605.6 L1858.5 1604.6 L1859.5 1605.4 L1860.5 1605.6 L1861.5 1605.9 L1862.5 1604.7 L1863.6 1605.3 L1864.6 1605.3 L1865.6 1604.7 L1866.6 1606.5 L1867.6 1605.5 L1868.6 1606.0 L1869.6 1606.2 L1870.6 1605.0 L1871.6 1606.3 L1872.7 1606.0 L1873.7 1606.0 L1874.7 1606.7 L1875.7 1606.3 L1876.7 1607.0 L1877.7 1606.0 L1878.7 1605.8 L1879.7 1605.0 L1880.7 1605.1 L1881.7 1606.5 L1882.8 1605.2 L1883.8 1607.1 L1884.8 1607.0 L1885.8 1606.2 L1886.8 1605.9 L1887.8 1606.1 L1888.8 1607.3 L1889.8 1606.6 L1890.8 1606.4 L1891.9 1606.7 L1892.9 1605.9 L1893.9 1605.9 L1894.9 1607.4 L1895.9 1606.6 L1896.9 1606.1 L1897.9 1605.9 L1898.9 1606.2 L1899.9 1605.5 L1901.0 1606.1 L1902.0 1606.8 L1903.0 1605.9 L1904.0 1606.4 L1905.0 1606.4 L1906.0 1606.4 L1907.0 1606.1 L1908.0 1606.2 L1909.0 1606.7 L1910.0 1606.0 L1911.1 1606.8 L1912.1 1606.1 L1913.1 1605.7 L1914.1 1606.5 L1915.1 1607.3 L1916.1 1605.7 L1917.1 1607.2 L1918.1 1607.2 L1919.1 1607.5 L1920.2 1606.7 L1921.2 1606.7 L1922.2 1605.8 L1923.2 1607.1 L1924.2 1606.6 L1925.2 1605.7 L1926.2 1607.3 L1927.2 1606.4 L1928.2 1606.9 L1929.3 1605.5 L1930.3 1606.4 L1931.3 1606.7 L1932.3 1606.7 L1933.3 1606.4 L1934.3 1605.2 L1935.3 1606.4 L1936.3 1606.5 L1937.3 1605.9 L1938.4 1606.2 L1939.4 1604.6 L1940.4 1604.4 L1941.4 1604.7 L1942.4 1605.0 L1943.4 1605.5 L1944.4 1603.9 L1945.4 1604.7 L1946.4 1603.8 L1947.4 1602.7 L1948.5 1604.1 L1949.5 1602.9 L1950.5 1603.2 L1951.5 1602.8 L1952.5 1602.8 L1953.5 1602.0 L1954.5 1602.1 L1955.5 1602.9 L1956.5 1600.9 L1957.6 1601.9 L1958.6 1601.4 L1959.6 1600.8 L1960.6 1600.3 L1961.6 1599.6 L1962.6 1600.7 L1963.6 1599.8 L1964.6 1599.0 L1965.6 1599.1 L1966.7 1599.3 L1967.7 1597.8 L1968.7 1597.1 L1969.7 1597.5 L1970.7 1597.5 L1971.7 1598.0 L1972.7 1597.1 L1973.7 1596.2 L1974.7 1596.9 L1975.7 1596.5 L1976.8 1596.2 L1977.8 1596.3 L1978.8 1595.5 L1979.8 1596.0 L1980.8 1594.5 L1981.8 1594.6 L1982.8 1595.6 L1983.8 1596.0 L1984.8 1596.0 L1985.9 1594.3 L1986.9 1595.1 L1987.9 1595.7 L1988.9 1595.8 L1989.9 1594.3 L1990.9 1595.5 L1991.9 1593.9 L1992.9 1595.1 L1993.9 1594.6 L1995.0 1595.1 L1996.0 1594.4 L1997.0 1595.5 L1998.0 1595.1 L1999.0 1595.3 L2000.0 1595.3 L2001.0 1594.1 L2002.0 1592.9 L2003.0 1594.7 L2004.0 1592.6 L2005.1 1593.4 L2006.1 1593.3 L2007.1 1593.0 L2008.1 1591.8 L2009.1 1591.7 L2010.1 1590.2 L2011.1 1589.5 L2012.1 1589.3 L2013.1 1586.9 L2014.2 1586.7 L2015.2 1585.4 L2016.2 1585.5 L2017.2 1583.5 L2018.2 1582.6 L2019.2 1581.4 L2020.2 1581.7 L2021.2 1579.1 L2022.2 1579.3 L2023.3 1579.4 L2024.3 1576.9 L2025.3 1577.6 L2026.3 1575.9 L2027.3 1577.1 L2028.3 1577.2 L2029.3 1576.3 L2030.3 1576.5 L2031.3 1576.6 L2032.4 1577.2 L2033.4 1578.4 L2034.4 1578.4 L2035.4 1579.8 L2036.4 1581.6 L2037.4 1581.7 L2038.4 1583.3 L2039.4 1584.0 L2040.4 1585.9 L2041.4 1586.8 L2042.5 1587.9 L2043.5 1588.1 L2044.5 1590.4 L2045.5 1590.6 L2046.5 1591.5 L2047.5 1591.4 L2048.5 1593.8 L2049.5 1593.7 L2050.5 1593.9 L2051.6 1595.5 L2052.6 1595.1 L2053.6 1597.3 L2054.6 1597.5 L2055.6 1598.7 L2056.6 1599.4 L2057.6 1600.6 L2058.6 1599.8 L2059.6 1600.8 L2060.7 1601.0 L2061.7 1602.4 L2062.7 1603.6 L2063.7 1603.1 L2064.7 1603.1 L2065.7 1604.3 L2066.7 1605.3 L2067.7 1605.1 L2068.7 1604.7 L2069.7 1605.1 L2070.8 1605.8 L2071.8 1605.7 L2072.8 1607.4 L2073.8 1607.4 L2074.8 1607.8 L2075.8 1607.0 L2076.8 1607.0 L2077.8 1608.1 L2078.8 1606.5 L2079.9 1607.1 L2080.9 1606.8 L2081.9 1606.4 L2082.9 1606.8 L2083.9 1606.9 L2084.9 1607.2 L2085.9 1607.5 L2086.9 1607.0 L2087.9 1607.0 L2089.0 1608.1 L2090.0 1607.1 L2091.0 1608.5 L2092.0 1607.7 L2093.0 1606.9 L2094.0 1608.4 L2095.0 1607.0 L2096.0 1607.9 L2097.0 1607.4 L2098.0 1608.7 L2099.1 1608.9 L2100.1 1608.5 L2101.1 1607.8 L2102.1 1607.2 L2103.1 1607.9 L2104.1 1608.0 L2105.1 1608.3 L2106.1 1608.1 L2107.1 1607.7 L2108.2 1607.4 L2109.2 1608.5 L2110.2 1607.8 L2111.2 1608.5 L2112.2 1608.7 L2113.2 1609.2 L2114.2 1608.4 L2115.2 1608.0 L2116.2 1608.2 L2117.3 1608.4 L2118.3 1607.7 L2119.3 1608.4 L2120.3 1607.9 L2121.3 1608.2 L2122.3 1607.4 L2123.3 1608.7 L2124.3 1608.5 L2125.3 1607.8 L2126.4 1608.8 L2127.4 1607.8 L2128.4 1608.8 L2129.4 1609.1 L2130.4 1608.3 L2131.4 1608.3 L2132.4 1608.9 L2133.4 1608.9 L2134.4 1607.4 L2135.4 1608.5 L2136.5 1608.0 L2137.5 1608.6 L2138.5 1608.4 L2139.5 1608.9 L2140.5 1609.2 L2141.5 1607.8 L2142.5 1608.1 L2143.5 1608.9 L2144.5 1608.7 L2145.6 1608.4 L2146.6 1609.5 L2147.6 1608.3 L2148.6 1607.5 L2149.6 1608.2 L2150.6 1608.6 L2151.6 1609.4 L2152.6 1608.5 L2153.6 1608.4 L2154.7 1608.2 L2155.7 1607.8 L2156.7 1609.1 L2157.7 1609.5 L2158.7 1607.6 L2159.7 1608.5 L2160.7 1607.8 L2161.7 1608.4 L2162.7 1607.8 L2163.7 1608.4 L2164.8 1608.2 L2165.8 1608.4 L2166.8 1607.7 L2167.8 1608.1 L2168.8 1607.7 L2169.8 1608.8 L2170.8 1609.3 L2171.8 1609.3 L2172.8 1608.8 L2173.9 1608.6 L2174.9 1608.3 L2175.9 1608.8 L2176.9 1607.7 L2177.9 1608.9 L2178.9 1609.8 L2179.9 1608.6 L2180.9 1608.4 L2181.9 1609.3 L2183.0 1608.2 L2184.0 1609.4 L2185.0 1607.9 L2186.0 1608.8 L2187.0 1607.8 L2188.0 1608.5 L2189.0 1608.3 L2190.0 1609.4 L2191.0 1607.9 L2192.0 1607.7 L2193.1 1609.5 L2194.1 1608.6 L2195.1 1609.5 L2196.1 1607.9 L2197.1 1608.0 L2198.1 1607.9 L2199.1 1608.2 L2200.1 1609.0 L2201.1 1608.5 L2202.2 1609.7 L2203.2 1609.6 L2204.2 1608.7 L2205.2 1608.3 L2206.2 1609.2 L2207.2 1609.8 L2208.2 1609.8 L2209.2 1609.2 L2210.2 1609.1 L2211.3 1607.9 L2212.3 1608.4 L2213.3 1608.0 L2214.3 1608.3 L2215.3 1608.4 L2216.3 1608.3 L2217.3 1609.4 L2218.3 1608.3 L2219.3 1608.6 L2220.3 1608.5 L2221.4 1608.8 L2222.4 1608.9 L2223.4 1608.1 L2224.4 1608.2 L2225.4 1609.5 L2226.4 1608.1 L2227.4 1608.8 L2228.4 1609.8 L2229.4 1608.2 L2230.5 1608.0 L2231.5 1609.0 L2232.5 1609.0 L2233.5 1609.3 L2234.5 1609.5 L2235.5 1608.8 L2236.5 1609.0 L2237.5 1608.5 L2238.5 1608.5 L2239.6 1609.5 L2240.6 1608.3 L2241.6 1609.0 L2242.6 1609.1 L2243.6 1609.5 L2244.6 1608.6 L2245.6 1608.5 L2246.6 1608.3 L2247.6 1608.2 L2248.7 1609.2 L2249.7 1608.8 L2250.7 1608.6 L2251.7 1609.1 L2252.7 1609.9 L2253.7 1608.4 L2254.7 1608.0 L2255.7 1608.9 L2256.7 1608.0 L2257.7 1609.8 L2258.8 1608.7 L2259.8 1609.1 L2260.8 1608.6 L2261.8 1609.2 L2262.8 1608.4 L2263.8 1609.5 L2264.8 1609.4 L2265.8 1609.1 L2266.8 1609.1 L2267.9 1609.1 L2268.9 1608.0 L2269.9 1608.9 L2270.9 1608.8 L2271.9 1609.7 L2272.9 1608.8 L2273.9 1608.4 L2274.9 1608.5 L2275.9 1607.9 L2277.0 1608.7 L2278.0 1609.2 L2279.0 1608.1 L2280.0 1607.9 L2281.0 1607.9 L2282.0 1609.7 L2283.0 1608.6 L2284.0 1609.7 L2285.0 1609.4 L2286.0 1608.3 L2287.1 1608.1 L2288.1 1608.7 L2289.1 1609.3 L2290.1 1609.0 L2291.1 1609.3 L2292.1 1609.4 L2293.1 1609.6 L2294.1 1608.0 L2295.1 1608.0 L2296.2 1609.6 L2297.2 1608.2 L2298.2 1608.4 L2299.2 1608.5 L2300.2 1609.5 L2301.2 1608.9 L2302.2 1608.3 L2303.2 1608.5 L2304.2 1608.0 L2305.3 1609.9 L2306.3 1609.3 L2307.3 1609.2 L2308.3 1609.1 L2309.3 1607.9 L2310.3 1608.0 L2311.3 1608.2 L2312.3 1608.6 L2313.3 1608.4 L2314.3 1608.2 L2315.4 1609.6 L2316.4 1608.7 L2317.4 1607.9 L2318.4 1609.7 L2319.4 1609.1 L2320.4 1609.2 L2321.4 1608.2 L2322.4 1609.0 L2323.4 1609.7 L2324.5 1609.2 L2325.5 1608.7 L2326.5 1608.9 L2327.5 1610.0 L2328.5 1608.3 L2329.5 1609.4 L2330.5 1610.0 L2331.5 1608.7 L2332.5 1608.6 L2333.6 1608.7 L2334.6 1609.8 L2335.6 1610.0 L2336.6 1608.5 L2337.6 1609.0 L2338.6 1610.0 L2339.6 1608.9 L2340.6 1609.9 L2341.6 1609.0 L2342.7 1608.5 L2343.7 1609.6 L2344.7 1609.2 L2345.7 1608.5 L2346.7 1609.5 L2347.7 1608.7 L2348.7 1609.9 L2349.7 1608.6 L2350.7 1609.6 L2351.7 1609.1 L2352.8 1607.9 L2353.8 1608.4 L2354.8 1609.7 L2355.8 1608.4 L2356.8 1609.2 L2357.8 1609.0 L2358.8 1609.5 L2359.8 1609.7 L2360.8 1608.0 L2361.9 1609.2 L2362.9 1609.6 L2363.9 1608.4 L2364.9 1609.8 L2365.9 1609.2 L2366.9 1609.8 L2367.9 1610.0 L2368.9 1608.0 L2369.9 1609.0 L2371.0 1608.7 L2372.0 1609.8 L2373.0 1609.3 L2374.0 1609.9 L2375.0 1608.3 L2376.0 1610.0 L2377.0 1608.1 L2378.0 1608.0 L2379.0 1609.7 L2380.0 1609.5 L2381.1 1609.7 L2382.1 1610.0 L2383.1 1609.1 L2384.1 1609.0 L2385.1 1608.2 L2386.1 1609.1 L2387.1 1609.7 L2388.1 1609.2 L2389.1 1609.7 L2390.2 1610.0 L2391.2 1609.3 L2392.2 1608.3 L2393.2 1609.9 L2394.2 1608.0 L2395.2 1608.3 L2396.2 1608.0 L2397.2 1608.8 L2398.2 1609.4 L2399.3 1608.4 L2400.3 1609.8 L2401.3 1609.0 L2402.3 1608.3 L2403.3 1608.9 L2404.3 1608.5 L2405.3 1609.7 L2406.3 1608.3 L2407.3 1609.8 L2408.3 1609.4 L2409.4 1608.8 L2410.4 1608.1 L2411.4 1609.8 L2412.4 1609.5 L2413.4 1608.5 L2414.4 1609.6 L2415.4 1609.3 L2416.4 1609.7 L2417.4 1608.0 L2418.5 1608.4 L2419.5 1609.3 L2420.5 1608.0 L2421.5 1608.2 L2422.5 1609.4 L2423.5 1609.9 L2424.5 1608.6 L2425.5 1608.7 L2426.5 1609.5 L2427.6 1610.0 L2428.6 1609.5 L2429.6 1608.1 L2430.6 1608.7 L2431.6 1608.7 L2432.6 1608.6 L2433.6 1609.5 L2434.6 1608.2 L2435.6 1609.1 L2436.7 1608.1 L2437.7 1608.8 L2438.7 1608.7 L2439.7 1608.3 L2440.7 1608.0 L2441.7 1608.6 L2442.7 1608.1 L2443.7 1609.2 L2444.7 1609.4 L2445.7 1609.6 L2446.8 1609.3 L2447.8 1608.2 L2448.8 1609.4 L2449.8 1609.6 L2450.8 1609.9 L2451.8 1608.6 L2452.8 1608.1 L2453.8 1609.2 L2454.8 1609.8 L2455.9 1608.5 L2456.9 1608.3 L2457.9 1609.3 L2458.9 1609.1 L2459.9 1609.3 L2460.9 1609.0 L2461.9 1608.7 L2462.9 1608.1 L2463.9 1609.4 L2465.0 1608.1 L2466.0 1608.8 L2467.0 1609.1 L2468.0 1608.3 L2469.0 1609.6 L2470.0 1609.0 L2471.0 1608.2 L2472.0 1608.3 L2473.0 1608.3 L2474.0 1609.0 L2475.1 1608.7 L2476.1 1608.5 L2477.1 1609.6 L2478.1 1608.1 L2479.1 1608.4 L2480.1 1609.1 L2481.1 1608.9 L2482.1 1608.1 L2483.1 1610.0 L2484.2 1609.5 L2485.2 1608.3 L2486.2 1610.0 L2487.2 1608.6 L2488.2 1609.5 L2489.2 1609.6 L2490.2 1610.0 L2491.2 1609.5 L2492.2 1609.4 L2493.3 1608.7 L2494.3 1608.4 L2495.3 1608.9 L2496.3 1609.8 L2497.3 1609.0 L2498.3 1608.2 L2499.3 1609.6 L2500.3 1608.6 L2501.3 1609.7 L2502.3 1609.5" fill="none" stroke="#4a52b0" stroke-width="2.8" stroke-linejoin="round"/>
<path d="M196.8 1607.5 L197.8 1605.6 L198.8 1605.3 L199.9 1606.0 L200.9 1605.0 L201.9 1604.5 L202.9 1603.6 L203.9 1602.8 L204.9 1603.9 L205.9 1603.7 L206.9 1601.7 L207.9 1602.5 L209.0 1601.9 L210.0 1603.7 L211.0 1603.0 L212.0 1602.9 L213.0 1604.4 L214.0 1603.3 L215.0 1603.9 L216.0 1606.2 L217.0 1606.7 L218.1 1606.0 L219.1 1605.5 L220.1 1607.0 L221.1 1607.5 L222.1 1607.3 L223.1 1608.3 L224.1 1608.0 L225.1 1607.6 L226.1 1607.6 L227.2 1608.2 L228.2 1608.2 L229.2 1608.2 L230.2 1607.7 L231.2 1608.1 L232.2 1608.6 L233.2 1606.9 L234.2 1607.4 L235.2 1607.2 L236.2 1608.2 L237.3 1606.4 L238.3 1606.6 L239.3 1608.2 L240.3 1607.7 L241.3 1606.8 L242.3 1606.7 L243.3 1606.2 L244.3 1607.2 L245.3 1606.2 L246.4 1606.5 L247.4 1607.2 L248.4 1606.4 L249.4 1605.7 L250.4 1605.7 L251.4 1606.3 L252.4 1605.9 L253.4 1607.0 L254.4 1606.4 L255.5 1605.0 L256.5 1605.7 L257.5 1606.0 L258.5 1605.0 L259.5 1604.5 L260.5 1604.3 L261.5 1604.8 L262.5 1604.4 L263.5 1604.0 L264.5 1603.2 L265.6 1603.4 L266.6 1603.4 L267.6 1602.9 L268.6 1603.6 L269.6 1603.3 L270.6 1601.6 L271.6 1600.6 L272.6 1601.1 L273.6 1601.2 L274.7 1601.3 L275.7 1600.2 L276.7 1598.8 L277.7 1598.9 L278.7 1599.0 L279.7 1597.9 L280.7 1598.9 L281.7 1597.9 L282.7 1596.5 L283.8 1596.9 L284.8 1596.8 L285.8 1596.8 L286.8 1595.8 L287.8 1594.5 L288.8 1596.1 L289.8 1594.0 L290.8 1593.6 L291.8 1593.0 L292.8 1593.0 L293.9 1592.4 L294.9 1592.7 L295.9 1592.2 L296.9 1592.2 L297.9 1592.6 L298.9 1590.6 L299.9 1590.9 L300.9 1591.4 L301.9 1590.5 L303.0 1590.2 L304.0 1590.2 L305.0 1590.0 L306.0 1589.4 L307.0 1589.0 L308.0 1588.8 L309.0 1588.9 L310.0 1589.6 L311.0 1589.0 L312.1 1589.0 L313.1 1587.9 L314.1 1587.2 L315.1 1587.2 L316.1 1587.1 L317.1 1586.9 L318.1 1588.0 L319.1 1586.7 L320.1 1587.0 L321.2 1588.2 L322.2 1588.4 L323.2 1588.4 L324.2 1586.9 L325.2 1588.1 L326.2 1588.6 L327.2 1587.7 L328.2 1588.5 L329.2 1589.4 L330.2 1589.6 L331.3 1589.2 L332.3 1590.4 L333.3 1590.7 L334.3 1590.3 L335.3 1591.4 L336.3 1592.3 L337.3 1592.6 L338.3 1594.2 L339.3 1594.0 L340.4 1594.6 L341.4 1595.8 L342.4 1596.6 L343.4 1595.5 L344.4 1597.0 L345.4 1598.2 L346.4 1597.9 L347.4 1598.0 L348.4 1600.3 L349.5 1600.8 L350.5 1601.0 L351.5 1600.2 L352.5 1601.9 L353.5 1601.1 L354.5 1601.6 L355.5 1602.2 L356.5 1603.2 L357.5 1601.9 L358.5 1602.6 L359.6 1603.4 L360.6 1604.3 L361.6 1603.5 L362.6 1604.3 L363.6 1604.0 L364.6 1604.7 L365.6 1604.2 L366.6 1605.5 L367.6 1605.1 L368.7 1603.8 L369.7 1604.0 L370.7 1605.3 L371.7 1604.2 L372.7 1605.4 L373.7 1604.1 L374.7 1604.5 L375.7 1605.2 L376.7 1605.6 L377.8 1606.1 L378.8 1604.3 L379.8 1606.1 L380.8 1604.4 L381.8 1604.1 L382.8 1604.9 L383.8 1605.8 L384.8 1604.3 L385.8 1604.0 L386.8 1604.6 L387.9 1605.0 L388.9 1605.2 L389.9 1605.3 L390.9 1605.6 L391.9 1604.5 L392.9 1605.0 L393.9 1605.5 L394.9 1605.7 L395.9 1604.5 L397.0 1605.3 L398.0 1604.8 L399.0 1605.2 L400.0 1604.0 L401.0 1603.9 L402.0 1605.8 L403.0 1605.4 L404.0 1605.1 L405.0 1603.7 L406.1 1604.2 L407.1 1605.1 L408.1 1605.4 L409.1 1604.4 L410.1 1604.1 L411.1 1603.9 L412.1 1605.1 L413.1 1604.0 L414.1 1604.4 L415.2 1604.9 L416.2 1603.8 L417.2 1605.4 L418.2 1604.4 L419.2 1605.8 L420.2 1605.7 L421.2 1604.1 L422.2 1605.6 L423.2 1604.5 L424.2 1604.9 L425.3 1604.4 L426.3 1605.4 L427.3 1605.5 L428.3 1605.7 L429.3 1604.5 L430.3 1605.1 L431.3 1604.4 L432.3 1604.5 L433.3 1606.2 L434.4 1605.3 L435.4 1606.3 L436.4 1606.5 L437.4 1606.5 L438.4 1604.8 L439.4 1605.0 L440.4 1605.0 L441.4 1606.0 L442.4 1605.5 L443.5 1605.2 L444.5 1606.1 L445.5 1605.7 L446.5 1606.5 L447.5 1606.8 L448.5 1606.5 L449.5 1605.2 L450.5 1605.9 L451.5 1605.2 L452.5 1606.2 L453.6 1606.6 L454.6 1605.6 L455.6 1605.5 L456.6 1607.3 L457.6 1605.9 L458.6 1607.2 L459.6 1607.1 L460.6 1605.5 L461.6 1607.3 L462.7 1606.9 L463.7 1605.4 L464.7 1606.6 L465.7 1607.3 L466.7 1607.2 L467.7 1607.0 L468.7 1606.0 L469.7 1607.3 L470.7 1605.6 L471.8 1606.8 L472.8 1605.5 L473.8 1605.7 L474.8 1607.0 L475.8 1607.1 L476.8 1606.6 L477.8 1607.4 L478.8 1606.2 L479.8 1607.5 L480.8 1607.6 L481.9 1605.5 L482.9 1607.0 L483.9 1606.3 L484.9 1606.7 L485.9 1606.9 L486.9 1607.5 L487.9 1605.6 L488.9 1605.5 L489.9 1605.5 L491.0 1607.3 L492.0 1607.1 L493.0 1606.2 L494.0 1605.4 L495.0 1606.3 L496.0 1606.0 L497.0 1606.0 L498.0 1606.8 L499.0 1606.2 L500.1 1606.7 L501.1 1606.8 L502.1 1607.1 L503.1 1606.6 L504.1 1605.1 L505.1 1606.2 L506.1 1605.7 L507.1 1605.7 L508.1 1605.0 L509.1 1606.1 L510.2 1606.2 L511.2 1606.1 L512.2 1606.1 L513.2 1604.8 L514.2 1604.7 L515.2 1605.8 L516.2 1605.6 L517.2 1605.1 L518.2 1604.9 L519.3 1604.7 L520.3 1605.3 L521.3 1605.6 L522.3 1604.9 L523.3 1605.1 L524.3 1603.9 L525.3 1604.7 L526.3 1604.4 L527.3 1602.9 L528.4 1603.4 L529.4 1602.0 L530.4 1602.3 L531.4 1601.2 L532.4 1602.3 L533.4 1601.2 L534.4 1600.2 L535.4 1601.3 L536.4 1599.1 L537.5 1600.3 L538.5 1598.6 L539.5 1597.8 L540.5 1597.7 L541.5 1598.4 L542.5 1598.5 L543.5 1597.2 L544.5 1596.0 L545.5 1597.1 L546.5 1595.5 L547.6 1596.9 L548.6 1595.1 L549.6 1596.8 L550.6 1596.1 L551.6 1594.8 L552.6 1595.1 L553.6 1594.9 L554.6 1595.1 L555.6 1595.4 L556.7 1595.6 L557.7 1596.9 L558.7 1596.5 L559.7 1597.3 L560.7 1596.2 L561.7 1596.5 L562.7 1597.5 L563.7 1598.1 L564.7 1596.3 L565.8 1596.8 L566.8 1597.4 L567.8 1597.5 L568.8 1596.9 L569.8 1597.8 L570.8 1597.9 L571.8 1598.0 L572.8 1598.1 L573.8 1598.6 L574.8 1597.1 L575.9 1597.5 L576.9 1597.0 L577.9 1597.9 L578.9 1597.0 L579.9 1597.2 L580.9 1596.9 L581.9 1596.3 L582.9 1594.7 L583.9 1595.2 L585.0 1594.8 L586.0 1593.8 L587.0 1594.1 L588.0 1594.0 L589.0 1592.2 L590.0 1591.6 L591.0 1590.5 L592.0 1590.2 L593.0 1588.7 L594.1 1587.7 L595.1 1587.7 L596.1 1586.0 L597.1 1584.7 L598.1 1583.9 L599.1 1582.0 L600.1 1580.1 L601.1 1577.6 L602.1 1575.6 L603.1 1574.9 L604.2 1571.9 L605.2 1570.7 L606.2 1568.0 L607.2 1564.2 L608.2 1560.3 L609.2 1558.5 L610.2 1553.7 L611.2 1549.6 L612.2 1546.8 L613.3 1541.7 L614.3 1536.8 L615.3 1533.0 L616.3 1527.2 L617.3 1521.8 L618.3 1516.5 L619.3 1510.2 L620.3 1504.1 L621.3 1497.9 L622.4 1492.5 L623.4 1487.1 L624.4 1480.6 L625.4 1474.5 L626.4 1467.7 L627.4 1461.5 L628.4 1457.6 L629.4 1451.3 L630.4 1446.9 L631.5 1444.0 L632.5 1440.8 L633.5 1439.5 L634.5 1437.1 L635.5 1438.3 L636.5 1437.0 L637.5 1438.8 L638.5 1441.5 L639.5 1445.3 L640.5 1447.5 L641.6 1451.4 L642.6 1457.7 L643.6 1461.1 L644.6 1465.9 L645.6 1471.3 L646.6 1476.4 L647.6 1482.0 L648.6 1486.0 L649.6 1490.9 L650.7 1496.9 L651.7 1500.7 L652.7 1506.0 L653.7 1510.8 L654.7 1514.6 L655.7 1519.0 L656.7 1521.1 L657.7 1524.6 L658.7 1529.9 L659.8 1532.1 L660.8 1535.7 L661.8 1539.3 L662.8 1541.8 L663.8 1544.6 L664.8 1546.2 L665.8 1550.3 L666.8 1552.3 L667.8 1554.0 L668.8 1557.1 L669.9 1558.0 L670.9 1560.1 L671.9 1561.6 L672.9 1564.8 L673.9 1566.5 L674.9 1567.7 L675.9 1570.0 L676.9 1571.0 L677.9 1573.3 L679.0 1573.9 L680.0 1575.2 L681.0 1576.6 L682.0 1577.6 L683.0 1579.8 L684.0 1581.3 L685.0 1581.7 L686.0 1583.1 L687.0 1584.7 L688.1 1586.2 L689.1 1587.4 L690.1 1588.8 L691.1 1588.3 L692.1 1590.7 L693.1 1590.2 L694.1 1591.5 L695.1 1591.4 L696.1 1592.6 L697.1 1592.9 L698.2 1595.4 L699.2 1595.2 L700.2 1595.7 L701.2 1596.8 L702.2 1597.0 L703.2 1597.8 L704.2 1597.9 L705.2 1599.5 L706.2 1599.0 L707.3 1599.4 L708.3 1600.1 L709.3 1600.3 L710.3 1599.8 L711.3 1600.3 L712.3 1601.0 L713.3 1601.0 L714.3 1601.8 L715.3 1602.4 L716.4 1603.1 L717.4 1602.7 L718.4 1602.2 L719.4 1601.8 L720.4 1602.1 L721.4 1603.0 L722.4 1602.1 L723.4 1603.4 L724.4 1602.8 L725.5 1603.8 L726.5 1603.2 L727.5 1602.8 L728.5 1604.4 L729.5 1604.8 L730.5 1604.0 L731.5 1604.3 L732.5 1604.7 L733.5 1605.6 L734.5 1604.9 L735.6 1604.9 L736.6 1605.0 L737.6 1604.1 L738.6 1604.8 L739.6 1604.5 L740.6 1604.3 L741.6 1604.7 L742.6 1605.3 L743.6 1604.8 L744.7 1605.1 L745.7 1605.1 L746.7 1605.2 L747.7 1605.8 L748.7 1605.4 L749.7 1605.4 L750.7 1604.8 L751.7 1605.2 L752.7 1605.1 L753.8 1605.3 L754.8 1605.3 L755.8 1605.8 L756.8 1606.4 L757.8 1606.6 L758.8 1605.7 L759.8 1605.4 L760.8 1606.1 L761.8 1607.0 L762.8 1605.6 L763.9 1606.4 L764.9 1606.4 L765.9 1607.4 L766.9 1606.4 L767.9 1605.9 L768.9 1606.7 L769.9 1606.8 L770.9 1606.2 L771.9 1607.6 L773.0 1606.6 L774.0 1605.7 L775.0 1606.3 L776.0 1606.9 L777.0 1606.3 L778.0 1606.5 L779.0 1607.4 L780.0 1607.4 L781.0 1606.0 L782.1 1607.4 L783.1 1607.8 L784.1 1606.2 L785.1 1606.9 L786.1 1607.2 L787.1 1607.0 L788.1 1606.5 L789.1 1607.7 L790.1 1606.7 L791.1 1606.6 L792.2 1606.4 L793.2 1607.6 L794.2 1606.9 L795.2 1607.7 L796.2 1607.0 L797.2 1607.9 L798.2 1606.6 L799.2 1606.4 L800.2 1607.6 L801.3 1607.8 L802.3 1606.3 L803.3 1606.8 L804.3 1606.5 L805.3 1608.3 L806.3 1606.4 L807.3 1607.0 L808.3 1607.7 L809.3 1607.5 L810.4 1606.8 L811.4 1606.7 L812.4 1608.0 L813.4 1607.1 L814.4 1608.1 L815.4 1606.4 L816.4 1607.5 L817.4 1606.5 L818.4 1606.9 L819.5 1607.2 L820.5 1607.9 L821.5 1607.4 L822.5 1608.2 L823.5 1608.2 L824.5 1607.0 L825.5 1607.8 L826.5 1606.9 L827.5 1608.0 L828.5 1607.0 L829.6 1607.0 L830.6 1607.9 L831.6 1608.3 L832.6 1607.7 L833.6 1607.5 L834.6 1608.3 L835.6 1608.1 L836.6 1608.4 L837.6 1607.3 L838.7 1606.6 L839.7 1608.1 L840.7 1608.5 L841.7 1607.0 L842.7 1606.8 L843.7 1606.5 L844.7 1607.2 L845.7 1607.8 L846.7 1606.7 L847.8 1608.2 L848.8 1607.0 L849.8 1608.3 L850.8 1607.6 L851.8 1607.4 L852.8 1607.6 L853.8 1608.0 L854.8 1607.8 L855.8 1606.6 L856.8 1607.3 L857.9 1607.0 L858.9 1607.7 L859.9 1606.5 L860.9 1607.3 L861.9 1606.6 L862.9 1605.8 L863.9 1605.4 L864.9 1607.2 L865.9 1605.4 L867.0 1604.9 L868.0 1605.7 L869.0 1605.2 L870.0 1604.4 L871.0 1603.2 L872.0 1603.7 L873.0 1602.1 L874.0 1601.8 L875.0 1602.5 L876.1 1600.2 L877.1 1601.5 L878.1 1600.6 L879.1 1599.0 L880.1 1599.8 L881.1 1598.8 L882.1 1599.1 L883.1 1598.3 L884.1 1597.5 L885.1 1597.6 L886.2 1599.8 L887.2 1600.2 L888.2 1599.0 L889.2 1601.3 L890.2 1601.4 L891.2 1602.3 L892.2 1603.0 L893.2 1603.7 L894.2 1602.9 L895.3 1603.2 L896.3 1603.8 L897.3 1603.8 L898.3 1604.6 L899.3 1605.4 L900.3 1605.2 L901.3 1604.7 L902.3 1605.5 L903.3 1606.5 L904.4 1607.0 L905.4 1605.1 L906.4 1605.9 L907.4 1606.4 L908.4 1605.8 L909.4 1605.8 L910.4 1605.7 L911.4 1606.5 L912.4 1605.6 L913.5 1605.1 L914.5 1605.1 L915.5 1603.0 L916.5 1603.3 L917.5 1601.9 L918.5 1600.7 L919.5 1599.5 L920.5 1598.1 L921.5 1596.6 L922.5 1596.0 L923.6 1592.8 L924.6 1592.8 L925.6 1589.6 L926.6 1588.3 L927.6 1587.2 L928.6 1588.2 L929.6 1587.8 L930.6 1586.5 L931.6 1587.9 L932.7 1589.2 L933.7 1589.3 L934.7 1592.9 L935.7 1593.5 L936.7 1595.3 L937.7 1597.5 L938.7 1598.4 L939.7 1599.1 L940.7 1599.9 L941.8 1602.7 L942.8 1602.5 L943.8 1604.1 L944.8 1603.1 L945.8 1605.0 L946.8 1605.5 L947.8 1605.0 L948.8 1604.4 L949.8 1605.4 L950.8 1605.8 L951.9 1604.4 L952.9 1604.4 L953.9 1604.3 L954.9 1605.4 L955.9 1605.1 L956.9 1605.4 L957.9 1604.6 L958.9 1605.0 L959.9 1604.8 L961.0 1603.8 L962.0 1603.2 L963.0 1603.8 L964.0 1604.7 L965.0 1603.3 L966.0 1603.5 L967.0 1602.1 L968.0 1602.4 L969.0 1601.9 L970.1 1601.9 L971.1 1601.9 L972.1 1600.8 L973.1 1600.5 L974.1 1601.3 L975.1 1601.2 L976.1 1600.3 L977.1 1599.6 L978.1 1600.0 L979.1 1599.0 L980.2 1598.0 L981.2 1598.7 L982.2 1596.5 L983.2 1596.4 L984.2 1596.6 L985.2 1596.1 L986.2 1595.5 L987.2 1595.0 L988.2 1593.6 L989.3 1593.6 L990.3 1593.1 L991.3 1593.4 L992.3 1591.3 L993.3 1592.1 L994.3 1591.6 L995.3 1591.7 L996.3 1589.3 L997.3 1589.9 L998.4 1588.5 L999.4 1587.9 L1000.4 1587.2 L1001.4 1586.8 L1002.4 1585.8 L1003.4 1584.9 L1004.4 1584.1 L1005.4 1584.3 L1006.4 1582.0 L1007.4 1580.3 L1008.5 1577.5 L1009.5 1575.8 L1010.5 1573.6 L1011.5 1570.7 L1012.5 1568.4 L1013.5 1563.8 L1014.5 1560.6 L1015.5 1556.9 L1016.5 1552.2 L1017.6 1546.2 L1018.6 1541.8 L1019.6 1537.0 L1020.6 1531.1 L1021.6 1523.9 L1022.6 1517.9 L1023.6 1510.9 L1024.6 1506.3 L1025.6 1499.9 L1026.7 1493.7 L1027.7 1490.2 L1028.7 1486.1 L1029.7 1482.1 L1030.7 1480.8 L1031.7 1480.6 L1032.7 1481.0 L1033.7 1482.2 L1034.7 1485.6 L1035.8 1490.8 L1036.8 1495.8 L1037.8 1499.8 L1038.8 1506.4 L1039.8 1513.8 L1040.8 1518.8 L1041.8 1527.0 L1042.8 1532.6 L1043.8 1537.7 L1044.8 1543.8 L1045.9 1550.3 L1046.9 1554.2 L1047.9 1559.7 L1048.9 1563.6 L1049.9 1567.6 L1050.9 1572.4 L1051.9 1575.3 L1052.9 1578.6 L1053.9 1580.5 L1055.0 1583.3 L1056.0 1585.7 L1057.0 1587.5 L1058.0 1588.8 L1059.0 1591.9 L1060.0 1593.4 L1061.0 1593.4 L1062.0 1594.5 L1063.0 1595.9 L1064.1 1596.8 L1065.1 1597.8 L1066.1 1597.4 L1067.1 1598.2 L1068.1 1599.2 L1069.1 1600.8 L1070.1 1599.6 L1071.1 1600.8 L1072.1 1601.7 L1073.1 1601.9 L1074.2 1601.3 L1075.2 1603.1 L1076.2 1603.1 L1077.2 1603.0 L1078.2 1602.0 L1079.2 1602.5 L1080.2 1602.2 L1081.2 1603.4 L1082.2 1603.5 L1083.3 1603.7 L1084.3 1603.9 L1085.3 1604.1 L1086.3 1603.6 L1087.3 1603.5 L1088.3 1604.8 L1089.3 1604.4 L1090.3 1605.2 L1091.3 1605.4 L1092.4 1605.0 L1093.4 1605.0 L1094.4 1605.1 L1095.4 1604.3 L1096.4 1606.2 L1097.4 1605.2 L1098.4 1604.6 L1099.4 1605.2 L1100.4 1605.6 L1101.4 1606.1 L1102.5 1606.1 L1103.5 1605.0 L1104.5 1605.2 L1105.5 1605.7 L1106.5 1605.3 L1107.5 1605.3 L1108.5 1605.5 L1109.5 1606.6 L1110.5 1606.4 L1111.6 1605.8 L1112.6 1606.7 L1113.6 1605.9 L1114.6 1606.6 L1115.6 1606.9 L1116.6 1606.7 L1117.6 1607.4 L1118.6 1607.0 L1119.6 1606.9 L1120.7 1607.7 L1121.7 1607.4 L1122.7 1607.3 L1123.7 1606.0 L1124.7 1606.6 L1125.7 1607.3 L1126.7 1605.8 L1127.7 1607.4 L1128.7 1606.8 L1129.8 1606.4 L1130.8 1606.5 L1131.8 1607.1 L1132.8 1606.3 L1133.8 1607.0 L1134.8 1606.5 L1135.8 1607.0 L1136.8 1605.9 L1137.8 1606.5 L1138.8 1607.8 L1139.9 1607.7 L1140.9 1605.9 L1141.9 1607.5 L1142.9 1607.9 L1143.9 1607.4 L1144.9 1606.9 L1145.9 1605.9 L1146.9 1607.1 L1147.9 1606.4 L1149.0 1606.1 L1150.0 1607.7 L1151.0 1606.5 L1152.0 1605.7 L1153.0 1606.6 L1154.0 1606.6 L1155.0 1606.9 L1156.0 1605.6 L1157.0 1605.5 L1158.1 1607.3 L1159.1 1606.2 L1160.1 1606.4 L1161.1 1605.8 L1162.1 1606.8 L1163.1 1606.4 L1164.1 1606.2 L1165.1 1605.6 L1166.1 1604.7 L1167.1 1604.3 L1168.2 1604.1 L1169.2 1604.0 L1170.2 1604.9 L1171.2 1603.8 L1172.2 1602.7 L1173.2 1603.0 L1174.2 1601.9 L1175.2 1600.3 L1176.2 1601.3 L1177.3 1598.8 L1178.3 1599.5 L1179.3 1597.8 L1180.3 1595.6 L1181.3 1595.9 L1182.3 1593.9 L1183.3 1592.8 L1184.3 1590.3 L1185.3 1588.6 L1186.4 1588.5 L1187.4 1586.4 L1188.4 1583.9 L1189.4 1583.0 L1190.4 1582.1 L1191.4 1579.3 L1192.4 1578.6 L1193.4 1576.8 L1194.4 1576.4 L1195.4 1573.1 L1196.5 1572.7 L1197.5 1571.3 L1198.5 1570.6 L1199.5 1571.7 L1200.5 1571.0 L1201.5 1571.3 L1202.5 1571.0 L1203.5 1571.5 L1204.5 1573.7 L1205.6 1574.7 L1206.6 1575.0 L1207.6 1577.0 L1208.6 1579.1 L1209.6 1580.6 L1210.6 1581.4 L1211.6 1583.0 L1212.6 1583.9 L1213.6 1586.5 L1214.7 1588.0 L1215.7 1590.5 L1216.7 1591.5 L1217.7 1593.3 L1218.7 1593.8 L1219.7 1596.0 L1220.7 1597.3 L1221.7 1598.1 L1222.7 1598.9 L1223.8 1600.2 L1224.8 1600.5 L1225.8 1602.2 L1226.8 1601.4 L1227.8 1602.4 L1228.8 1603.4 L1229.8 1604.9 L1230.8 1604.8 L1231.8 1604.4 L1232.8 1604.8 L1233.9 1604.8 L1234.9 1604.9 L1235.9 1606.3 L1236.9 1606.2 L1237.9 1606.7 L1238.9 1607.3 L1239.9 1607.4 L1240.9 1607.3 L1241.9 1607.8 L1243.0 1606.9 L1244.0 1606.6 L1245.0 1607.0 L1246.0 1606.8 L1247.0 1607.9 L1248.0 1608.0 L1249.0 1607.2 L1250.0 1606.6 L1251.0 1607.7 L1252.1 1608.6 L1253.1 1608.6 L1254.1 1608.0 L1255.1 1607.4 L1256.1 1608.6 L1257.1 1608.3 L1258.1 1607.4 L1259.1 1606.7 L1260.1 1608.1 L1261.1 1607.6 L1262.2 1607.8 L1263.2 1608.9 L1264.2 1608.3 L1265.2 1608.7 L1266.2 1608.5 L1267.2 1607.4 L1268.2 1607.6 L1269.2 1609.0 L1270.2 1608.9 L1271.3 1607.6 L1272.3 1608.9 L1273.3 1608.5 L1274.3 1608.6 L1275.3 1609.1 L1276.3 1609.1 L1277.3 1608.9 L1278.3 1608.4 L1279.3 1607.2 L1280.4 1607.9 L1281.4 1608.7 L1282.4 1607.8 L1283.4 1608.7 L1284.4 1608.2 L1285.4 1608.6 L1286.4 1607.3 L1287.4 1608.6 L1288.4 1607.6 L1289.4 1608.0 L1290.5 1607.5 L1291.5 1608.1 L1292.5 1607.5 L1293.5 1608.5 L1294.5 1607.9 L1295.5 1608.1 L1296.5 1608.3 L1297.5 1608.2 L1298.5 1608.3 L1299.6 1608.6 L1300.6 1607.5 L1301.6 1608.1 L1302.6 1608.3 L1303.6 1609.3 L1304.6 1608.4 L1305.6 1609.1 L1306.6 1609.0 L1307.6 1608.5 L1308.7 1608.3 L1309.7 1608.9 L1310.7 1608.9 L1311.7 1608.3 L1312.7 1608.5 L1313.7 1608.6 L1314.7 1609.3 L1315.7 1608.7 L1316.7 1608.1 L1317.8 1608.3 L1318.8 1608.3 L1319.8 1607.7 L1320.8 1608.0 L1321.8 1608.1 L1322.8 1609.5 L1323.8 1608.9 L1324.8 1608.1 L1325.8 1609.2 L1326.8 1607.6 L1327.9 1609.2 L1328.9 1607.7 L1329.9 1609.1 L1330.9 1607.7 L1331.9 1607.7 L1332.9 1608.8 L1333.9 1607.6 L1334.9 1609.2 L1335.9 1607.7 L1337.0 1608.7 L1338.0 1608.6 L1339.0 1609.3 L1340.0 1608.3 L1341.0 1609.0 L1342.0 1608.1 L1343.0 1607.9 L1344.0 1608.3 L1345.0 1609.5 L1346.1 1607.5 L1347.1 1607.6 L1348.1 1608.2 L1349.1 1608.8 L1350.1 1608.4 L1351.1 1607.7 L1352.1 1608.6 L1353.1 1607.9 L1354.1 1608.3 L1355.1 1608.7 L1356.2 1607.6 L1357.2 1608.7 L1358.2 1608.3 L1359.2 1609.5 L1360.2 1608.6 L1361.2 1609.5 L1362.2 1608.1 L1363.2 1609.6 L1364.2 1609.5 L1365.3 1609.3 L1366.3 1609.3 L1367.3 1608.5 L1368.3 1608.8 L1369.3 1609.0 L1370.3 1607.5 L1371.3 1607.6 L1372.3 1608.2 L1373.3 1607.9 L1374.4 1607.8 L1375.4 1609.1 L1376.4 1607.9 L1377.4 1609.1 L1378.4 1608.4 L1379.4 1608.8 L1380.4 1609.2 L1381.4 1607.9 L1382.4 1607.6 L1383.4 1608.9 L1384.5 1607.7 L1385.5 1608.8 L1386.5 1608.2 L1387.5 1607.5 L1388.5 1607.9 L1389.5 1609.5 L1390.5 1608.6 L1391.5 1608.8 L1392.5 1608.9 L1393.6 1607.8 L1394.6 1608.6 L1395.6 1608.1 L1396.6 1608.2 L1397.6 1608.5 L1398.6 1609.4 L1399.6 1608.1 L1400.6 1607.7 L1401.6 1609.2 L1402.7 1608.2 L1403.7 1608.5 L1404.7 1608.8 L1405.7 1608.0 L1406.7 1607.5 L1407.7 1609.5 L1408.7 1607.6 L1409.7 1608.7 L1410.7 1607.8 L1411.7 1609.2 L1412.8 1608.0 L1413.8 1609.3 L1414.8 1608.8 L1415.8 1607.5 L1416.8 1608.1 L1417.8 1607.9 L1418.8 1608.5 L1419.8 1608.5 L1420.8 1608.5 L1421.9 1607.9 L1422.9 1608.0 L1423.9 1609.1 L1424.9 1608.6 L1425.9 1608.4 L1426.9 1608.3 L1427.9 1607.5 L1428.9 1607.7 L1429.9 1609.2 L1431.0 1608.7 L1432.0 1609.3 L1433.0 1609.4 L1434.0 1609.3 L1435.0 1609.1 L1436.0 1607.9 L1437.0 1608.1 L1438.0 1607.8 L1439.0 1608.9 L1440.1 1609.1 L1441.1 1607.4 L1442.1 1607.7 L1443.1 1607.4 L1444.1 1609.4 L1445.1 1608.6 L1446.1 1608.1 L1447.1 1607.9 L1448.1 1607.5 L1449.1 1608.3 L1450.2 1608.6 L1451.2 1609.4 L1452.2 1607.7 L1453.2 1607.3 L1454.2 1607.5 L1455.2 1608.0 L1456.2 1608.7 L1457.2 1608.9 L1458.2 1607.8 L1459.3 1607.4 L1460.3 1607.4 L1461.3 1609.0 L1462.3 1608.1 L1463.3 1608.3 L1464.3 1608.5 L1465.3 1607.7 L1466.3 1607.4 L1467.3 1607.8 L1468.4 1607.9 L1469.4 1607.9 L1470.4 1608.0 L1471.4 1608.2 L1472.4 1608.8 L1473.4 1607.7 L1474.4 1609.1 L1475.4 1607.9 L1476.4 1608.5 L1477.4 1608.1 L1478.5 1607.9 L1479.5 1608.3 L1480.5 1607.2 L1481.5 1608.8 L1482.5 1609.3 L1483.5 1607.2 L1484.5 1608.6 L1485.5 1608.7 L1486.5 1608.4 L1487.6 1608.0 L1488.6 1607.1 L1489.6 1607.7 L1490.6 1608.5 L1491.6 1608.1 L1492.6 1608.2 L1493.6 1608.1 L1494.6 1608.3 L1495.6 1608.8 L1496.7 1608.3 L1497.7 1608.3 L1498.7 1608.7 L1499.7 1607.4 L1500.7 1608.4 L1501.7 1608.8 L1502.7 1607.9 L1503.7 1607.3 L1504.7 1607.4 L1505.7 1607.8 L1506.8 1607.5 L1507.8 1608.4 L1508.8 1608.8 L1509.8 1608.5 L1510.8 1608.3 L1511.8 1608.4 L1512.8 1608.0 L1513.8 1608.7 L1514.8 1608.7 L1515.9 1608.4 L1516.9 1608.5 L1517.9 1607.2 L1518.9 1607.8 L1519.9 1608.5 L1520.9 1608.0 L1521.9 1607.0 L1522.9 1607.7 L1523.9 1607.7 L1525.0 1608.0 L1526.0 1608.4 L1527.0 1607.5 L1528.0 1608.6 L1529.0 1607.1 L1530.0 1608.7 L1531.0 1607.2 L1532.0 1607.9 L1533.0 1607.3 L1534.1 1607.5 L1535.1 1608.4 L1536.1 1607.5 L1537.1 1608.5 L1538.1 1608.1 L1539.1 1607.8 L1540.1 1608.0 L1541.1 1607.2 L1542.1 1606.5 L1543.1 1607.8 L1544.2 1606.7 L1545.2 1608.0 L1546.2 1607.0 L1547.2 1607.7 L1548.2 1607.3 L1549.2 1608.2 L1550.2 1606.6 L1551.2 1607.9 L1552.2 1607.3 L1553.3 1607.7 L1554.3 1606.5 L1555.3 1607.0 L1556.3 1606.9 L1557.3 1606.6 L1558.3 1607.6 L1559.3 1608.0 L1560.3 1606.3 L1561.3 1607.4 L1562.4 1606.3 L1563.4 1605.9 L1564.4 1606.6 L1565.4 1607.7 L1566.4 1606.0 L1567.4 1606.4 L1568.4 1607.2 L1569.4 1607.3 L1570.4 1606.6 L1571.4 1607.4 L1572.5 1605.6 L1573.5 1606.0 L1574.5 1605.7 L1575.5 1606.6 L1576.5 1605.4 L1577.5 1607.0 L1578.5 1605.7 L1579.5 1606.6 L1580.5 1607.1 L1581.6 1606.8 L1582.6 1606.5 L1583.6 1605.2 L1584.6 1606.0 L1585.6 1605.7 L1586.6 1605.3 L1587.6 1605.9 L1588.6 1605.1 L1589.6 1604.9 L1590.7 1604.2 L1591.7 1605.0 L1592.7 1604.1 L1593.7 1603.8 L1594.7 1604.0 L1595.7 1604.6 L1596.7 1604.8 L1597.7 1604.9 L1598.7 1603.2 L1599.7 1604.4 L1600.8 1603.2 L1601.8 1603.2 L1602.8 1603.7 L1603.8 1603.0 L1604.8 1601.3 L1605.8 1601.4 L1606.8 1600.0 L1607.8 1599.4 L1608.8 1600.5 L1609.9 1598.4 L1610.9 1598.9 L1611.9 1597.0 L1612.9 1595.8 L1613.9 1593.4 L1614.9 1592.8 L1615.9 1592.0 L1616.9 1589.5 L1617.9 1587.5 L1619.0 1586.1 L1620.0 1583.3 L1621.0 1579.7 L1622.0 1576.7 L1623.0 1574.2 L1624.0 1572.6 L1625.0 1567.5 L1626.0 1565.0 L1627.0 1560.6 L1628.1 1558.4 L1629.1 1554.7 L1630.1 1549.3 L1631.1 1546.8 L1632.1 1543.6 L1633.1 1539.1 L1634.1 1534.6 L1635.1 1531.8 L1636.1 1529.9 L1637.1 1526.2 L1638.2 1524.6 L1639.2 1523.0 L1640.2 1522.5 L1641.2 1522.7 L1642.2 1521.8 L1643.2 1523.5 L1644.2 1523.9 L1645.2 1526.5 L1646.2 1528.1 L1647.3 1531.7 L1648.3 1534.8 L1649.3 1537.7 L1650.3 1541.7 L1651.3 1545.5 L1652.3 1548.2 L1653.3 1551.2 L1654.3 1556.0 L1655.3 1558.3 L1656.4 1561.8 L1657.4 1565.1 L1658.4 1568.9 L1659.4 1570.6 L1660.4 1573.7 L1661.4 1576.7 L1662.4 1579.9 L1663.4 1581.1 L1664.4 1584.1 L1665.4 1583.9 L1666.5 1586.6 L1667.5 1587.8 L1668.5 1588.6 L1669.5 1589.3 L1670.5 1590.3 L1671.5 1591.1 L1672.5 1591.3 L1673.5 1591.3 L1674.5 1592.4 L1675.6 1592.5 L1676.6 1592.0 L1677.6 1593.7 L1678.6 1593.4 L1679.6 1592.9 L1680.6 1593.0 L1681.6 1591.4 L1682.6 1592.7 L1683.6 1592.6 L1684.7 1591.8 L1685.7 1591.1 L1686.7 1590.1 L1687.7 1589.4 L1688.7 1589.3 L1689.7 1589.5 L1690.7 1590.3 L1691.7 1589.8 L1692.7 1588.2 L1693.7 1587.4 L1694.8 1588.2 L1695.8 1586.3 L1696.8 1586.9 L1697.8 1586.4 L1698.8 1585.9 L1699.8 1586.7 L1700.8 1586.1 L1701.8 1584.1 L1702.8 1585.1 L1703.9 1585.1 L1704.9 1584.2 L1705.9 1582.8 L1706.9 1583.2 L1707.9 1582.7 L1708.9 1581.9 L1709.9 1580.7 L1710.9 1579.2 L1711.9 1579.1 L1713.0 1576.7 L1714.0 1575.1 L1715.0 1573.8 L1716.0 1573.5 L1717.0 1570.8 L1718.0 1567.1 L1719.0 1564.3 L1720.0 1562.6 L1721.0 1558.3 L1722.0 1554.2 L1723.1 1548.6 L1724.1 1544.8 L1725.1 1538.2 L1726.1 1530.6 L1727.1 1522.9 L1728.1 1516.5 L1729.1 1506.3 L1730.1 1496.3 L1731.1 1485.1 L1732.2 1474.5 L1733.2 1460.8 L1734.2 1449.1 L1735.2 1435.1 L1736.2 1419.9 L1737.2 1403.0 L1738.2 1387.4 L1739.2 1369.7 L1740.2 1351.9 L1741.3 1333.7 L1742.3 1312.9 L1743.3 1295.1 L1744.3 1274.5 L1745.3 1255.8 L1746.3 1237.8 L1747.3 1217.7 L1748.3 1201.6 L1749.3 1182.3 L1750.4 1168.1 L1751.4 1152.7 L1752.4 1138.5 L1753.4 1127.8 L1754.4 1116.2 L1755.4 1109.7 L1756.4 1102.3 L1757.4 1100.5 L1758.4 1098.3 L1759.4 1100.2 L1760.5 1103.6 L1761.5 1109.1 L1762.5 1117.4 L1763.5 1127.5 L1764.5 1138.9 L1765.5 1153.5 L1766.5 1168.6 L1767.5 1183.9 L1768.5 1202.1 L1769.6 1218.9 L1770.6 1238.7 L1771.6 1257.8 L1772.6 1278.1 L1773.6 1297.6 L1774.6 1316.7 L1775.6 1334.6 L1776.6 1353.2 L1777.6 1370.8 L1778.7 1389.4 L1779.7 1405.7 L1780.7 1422.6 L1781.7 1438.5 L1782.7 1452.3 L1783.7 1465.3 L1784.7 1477.9 L1785.7 1489.4 L1786.7 1500.7 L1787.7 1511.4 L1788.8 1520.7 L1789.8 1529.3 L1790.8 1537.1 L1791.8 1543.7 L1792.8 1550.3 L1793.8 1555.4 L1794.8 1561.3 L1795.8 1565.8 L1796.8 1569.1 L1797.9 1573.1 L1798.9 1576.6 L1799.9 1579.4 L1800.9 1581.3 L1801.9 1584.0 L1802.9 1586.7 L1803.9 1588.3 L1804.9 1589.1 L1805.9 1591.7 L1807.0 1591.9 L1808.0 1592.1 L1809.0 1594.4 L1810.0 1594.7 L1811.0 1594.9 L1812.0 1595.1 L1813.0 1596.2 L1814.0 1596.9 L1815.0 1597.9 L1816.0 1598.2 L1817.1 1598.1 L1818.1 1599.1 L1819.1 1598.6 L1820.1 1600.5 L1821.1 1599.3 L1822.1 1599.6 L1823.1 1600.8 L1824.1 1601.6 L1825.1 1601.2 L1826.2 1600.9 L1827.2 1600.7 L1828.2 1600.7 L1829.2 1602.3 L1830.2 1602.7 L1831.2 1602.8 L1832.2 1601.2 L1833.2 1602.1 L1834.2 1603.3 L1835.3 1602.3 L1836.3 1601.9 L1837.3 1602.7 L1838.3 1603.7 L1839.3 1602.3 L1840.3 1602.9 L1841.3 1604.2 L1842.3 1603.0 L1843.3 1603.7 L1844.4 1603.7 L1845.4 1604.2 L1846.4 1604.5 L1847.4 1604.3 L1848.4 1604.2 L1849.4 1604.4 L1850.4 1603.7 L1851.4 1605.4 L1852.4 1605.2 L1853.4 1603.8 L1854.5 1604.5 L1855.5 1604.6 L1856.5 1604.6 L1857.5 1605.5 L1858.5 1605.3 L1859.5 1605.7 L1860.5 1605.9 L1861.5 1604.2 L1862.5 1604.8 L1863.6 1604.6 L1864.6 1606.5 L1865.6 1605.1 L1866.6 1606.0 L1867.6 1605.6 L1868.6 1605.3 L1869.6 1606.7 L1870.6 1606.0 L1871.6 1605.7 L1872.7 1605.0 L1873.7 1605.9 L1874.7 1606.3 L1875.7 1605.8 L1876.7 1605.8 L1877.7 1606.5 L1878.7 1606.0 L1879.7 1606.6 L1880.7 1607.2 L1881.7 1606.6 L1882.8 1607.1 L1883.8 1606.3 L1884.8 1606.3 L1885.8 1605.5 L1886.8 1605.8 L1887.8 1605.9 L1888.8 1605.4 L1889.8 1606.9 L1890.8 1606.7 L1891.9 1607.1 L1892.9 1607.4 L1893.9 1606.5 L1894.9 1606.5 L1895.9 1607.4 L1896.9 1605.7 L1897.9 1605.6 L1898.9 1607.6 L1899.9 1607.7 L1901.0 1607.6 L1902.0 1606.2 L1903.0 1605.9 L1904.0 1607.6 L1905.0 1607.8 L1906.0 1606.6 L1907.0 1607.1 L1908.0 1607.8 L1909.0 1607.8 L1910.0 1607.4 L1911.1 1607.4 L1912.1 1607.2 L1913.1 1606.6 L1914.1 1607.3 L1915.1 1607.3 L1916.1 1607.3 L1917.1 1605.9 L1918.1 1607.2 L1919.1 1606.6 L1920.2 1606.8 L1921.2 1607.0 L1922.2 1606.8 L1923.2 1607.6 L1924.2 1607.2 L1925.2 1606.2 L1926.2 1605.9 L1927.2 1607.0 L1928.2 1607.1 L1929.3 1605.5 L1930.3 1607.1 L1931.3 1605.6 L1932.3 1605.3 L1933.3 1606.8 L1934.3 1605.3 L1935.3 1606.7 L1936.3 1606.8 L1937.3 1606.2 L1938.4 1606.0 L1939.4 1605.3 L1940.4 1605.5 L1941.4 1604.7 L1942.4 1604.8 L1943.4 1605.8 L1944.4 1605.5 L1945.4 1604.2 L1946.4 1605.4 L1947.4 1603.5 L1948.5 1603.6 L1949.5 1604.7 L1950.5 1604.3 L1951.5 1604.2 L1952.5 1603.7 L1953.5 1603.8 L1954.5 1604.1 L1955.5 1603.4 L1956.5 1603.3 L1957.6 1602.7 L1958.6 1602.3 L1959.6 1601.1 L1960.6 1601.4 L1961.6 1601.2 L1962.6 1600.4 L1963.6 1601.2 L1964.6 1600.9 L1965.6 1601.0 L1966.7 1599.5 L1967.7 1599.2 L1968.7 1598.9 L1969.7 1599.3 L1970.7 1600.1 L1971.7 1599.9 L1972.7 1598.2 L1973.7 1597.8 L1974.7 1598.3 L1975.7 1597.3 L1976.8 1597.1 L1977.8 1597.3 L1978.8 1598.0 L1979.8 1597.7 L1980.8 1597.8 L1981.8 1597.5 L1982.8 1597.3 L1983.8 1598.2 L1984.8 1597.9 L1985.9 1597.7 L1986.9 1596.8 L1987.9 1596.1 L1988.9 1596.5 L1989.9 1597.6 L1990.9 1597.0 L1991.9 1596.6 L1992.9 1597.6 L1993.9 1597.7 L1995.0 1596.5 L1996.0 1597.2 L1997.0 1596.3 L1998.0 1597.2 L1999.0 1595.6 L2000.0 1596.6 L2001.0 1596.1 L2002.0 1595.6 L2003.0 1594.6 L2004.0 1594.2 L2005.1 1594.0 L2006.1 1593.8 L2007.1 1594.6 L2008.1 1593.8 L2009.1 1592.4 L2010.1 1590.8 L2011.1 1590.6 L2012.1 1590.9 L2013.1 1589.7 L2014.2 1587.6 L2015.2 1587.6 L2016.2 1585.9 L2017.2 1584.9 L2018.2 1584.1 L2019.2 1583.5 L2020.2 1582.4 L2021.2 1582.2 L2022.2 1581.8 L2023.3 1579.3 L2024.3 1580.6 L2025.3 1579.5 L2026.3 1578.3 L2027.3 1577.3 L2028.3 1578.7 L2029.3 1578.7 L2030.3 1577.6 L2031.3 1579.0 L2032.4 1579.4 L2033.4 1580.1 L2034.4 1581.5 L2035.4 1580.4 L2036.4 1581.9 L2037.4 1584.3 L2038.4 1585.1 L2039.4 1586.1 L2040.4 1586.6 L2041.4 1586.6 L2042.5 1589.2 L2043.5 1590.0 L2044.5 1590.7 L2045.5 1591.2 L2046.5 1591.2 L2047.5 1592.8 L2048.5 1592.8 L2049.5 1594.3 L2050.5 1595.3 L2051.6 1595.0 L2052.6 1596.3 L2053.6 1597.3 L2054.6 1597.9 L2055.6 1598.9 L2056.6 1599.5 L2057.6 1600.9 L2058.6 1601.4 L2059.6 1600.8 L2060.7 1602.8 L2061.7 1603.2 L2062.7 1603.9 L2063.7 1604.0 L2064.7 1605.1 L2065.7 1604.9 L2066.7 1604.8 L2067.7 1605.0 L2068.7 1604.9 L2069.7 1606.8 L2070.8 1605.9 L2071.8 1607.0 L2072.8 1606.9 L2073.8 1606.6 L2074.8 1606.1 L2075.8 1606.6 L2076.8 1606.0 L2077.8 1608.2 L2078.8 1607.6 L2079.9 1607.4 L2080.9 1608.4 L2081.9 1608.4 L2082.9 1607.8 L2083.9 1607.4 L2084.9 1608.4 L2085.9 1608.6 L2086.9 1608.1 L2087.9 1607.2 L2089.0 1607.6 L2090.0 1606.7 L2091.0 1607.6 L2092.0 1607.0 L2093.0 1607.7 L2094.0 1607.9 L2095.0 1608.1 L2096.0 1608.9 L2097.0 1608.9 L2098.0 1607.7 L2099.1 1607.3 L2100.1 1609.1 L2101.1 1608.8 L2102.1 1608.5 L2103.1 1608.5 L2104.1 1607.4 L2105.1 1608.7 L2106.1 1608.6 L2107.1 1608.2 L2108.2 1607.2 L2109.2 1608.7 L2110.2 1607.9 L2111.2 1609.2 L2112.2 1608.4 L2113.2 1607.4 L2114.2 1608.9 L2115.2 1608.6 L2116.2 1608.0 L2117.3 1608.2 L2118.3 1608.2 L2119.3 1608.1 L2120.3 1608.0 L2121.3 1608.7 L2122.3 1608.7 L2123.3 1608.6 L2124.3 1608.4 L2125.3 1608.3 L2126.4 1607.6 L2127.4 1608.7 L2128.4 1608.5 L2129.4 1607.7 L2130.4 1607.5 L2131.4 1609.0 L2132.4 1608.0 L2133.4 1609.0 L2134.4 1608.0 L2135.4 1609.5 L2136.5 1608.5 L2137.5 1608.4 L2138.5 1608.1 L2139.5 1607.6 L2140.5 1607.9 L2141.5 1608.4 L2142.5 1608.6 L2143.5 1609.6 L2144.5 1608.5 L2145.6 1608.4 L2146.6 1608.1 L2147.6 1609.3 L2148.6 1608.4 L2149.6 1609.6 L2150.6 1608.1 L2151.6 1607.9 L2152.6 1608.7 L2153.6 1608.2 L2154.7 1608.3 L2155.7 1609.0 L2156.7 1609.5 L2157.7 1608.1 L2158.7 1608.9 L2159.7 1609.4 L2160.7 1608.8 L2161.7 1607.9 L2162.7 1607.7 L2163.7 1608.5 L2164.8 1607.7 L2165.8 1609.4 L2166.8 1608.7 L2167.8 1609.7 L2168.8 1609.3 L2169.8 1607.9 L2170.8 1609.6 L2171.8 1608.4 L2172.8 1608.7 L2173.9 1607.7 L2174.9 1607.7 L2175.9 1609.5 L2176.9 1609.2 L2177.9 1607.7 L2178.9 1609.1 L2179.9 1609.4 L2180.9 1607.9 L2181.9 1608.5 L2183.0 1609.2 L2184.0 1608.6 L2185.0 1608.9 L2186.0 1608.8 L2187.0 1608.6 L2188.0 1609.5 L2189.0 1608.5 L2190.0 1607.8 L2191.0 1608.6 L2192.0 1608.2 L2193.1 1609.2 L2194.1 1609.5 L2195.1 1609.8 L2196.1 1607.8 L2197.1 1609.6 L2198.1 1609.0 L2199.1 1608.5 L2200.1 1608.3 L2201.1 1608.5 L2202.2 1608.9 L2203.2 1608.1 L2204.2 1608.9 L2205.2 1608.1 L2206.2 1609.8 L2207.2 1608.3 L2208.2 1609.7 L2209.2 1609.1 L2210.2 1608.9 L2211.3 1609.5 L2212.3 1608.9 L2213.3 1608.1 L2214.3 1609.8 L2215.3 1609.5 L2216.3 1607.8 L2217.3 1608.9 L2218.3 1609.1 L2219.3 1608.0 L2220.3 1608.3 L2221.4 1609.5 L2222.4 1608.6 L2223.4 1609.5 L2224.4 1608.3 L2225.4 1608.7 L2226.4 1608.2 L2227.4 1609.8 L2228.4 1607.9 L2229.4 1609.4 L2230.5 1608.1 L2231.5 1609.0 L2232.5 1608.0 L2233.5 1609.7 L2234.5 1609.8 L2235.5 1608.9 L2236.5 1608.0 L2237.5 1608.9 L2238.5 1608.9 L2239.6 1609.6 L2240.6 1608.8 L2241.6 1609.0 L2242.6 1608.1 L2243.6 1608.4 L2244.6 1608.9 L2245.6 1609.6 L2246.6 1609.6 L2247.6 1607.9 L2248.7 1608.7 L2249.7 1609.5 L2250.7 1608.2 L2251.7 1609.5 L2252.7 1609.0 L2253.7 1608.1 L2254.7 1609.7 L2255.7 1609.8 L2256.7 1609.9 L2257.7 1609.6 L2258.8 1609.2 L2259.8 1609.3 L2260.8 1609.4 L2261.8 1609.9 L2262.8 1608.9 L2263.8 1609.0 L2264.8 1608.4 L2265.8 1609.3 L2266.8 1608.7 L2267.9 1609.3 L2268.9 1608.4 L2269.9 1609.6 L2270.9 1608.9 L2271.9 1609.0 L2272.9 1609.0 L2273.9 1608.8 L2274.9 1608.9 L2275.9 1609.3 L2277.0 1608.2 L2278.0 1608.0 L2279.0 1608.8 L2280.0 1608.6 L2281.0 1608.5 L2282.0 1609.3 L2283.0 1608.7 L2284.0 1609.0 L2285.0 1609.0 L2286.0 1609.2 L2287.1 1608.9 L2288.1 1609.5 L2289.1 1609.5 L2290.1 1609.6 L2291.1 1608.7 L2292.1 1609.5 L2293.1 1608.4 L2294.1 1608.1 L2295.1 1608.4 L2296.2 1609.3 L2297.2 1608.0 L2298.2 1609.3 L2299.2 1609.3 L2300.2 1608.8 L2301.2 1608.6 L2302.2 1609.2 L2303.2 1608.3 L2304.2 1608.2 L2305.3 1609.4 L2306.3 1609.6 L2307.3 1609.2 L2308.3 1608.5 L2309.3 1608.6 L2310.3 1609.7 L2311.3 1609.2 L2312.3 1608.1 L2313.3 1608.0 L2314.3 1608.7 L2315.4 1608.4 L2316.4 1608.2 L2317.4 1609.6 L2318.4 1609.9 L2319.4 1608.7 L2320.4 1609.2 L2321.4 1608.5 L2322.4 1609.4 L2323.4 1609.1 L2324.5 1608.3 L2325.5 1609.8 L2326.5 1609.2 L2327.5 1609.7 L2328.5 1608.9 L2329.5 1608.5 L2330.5 1607.9 L2331.5 1608.4 L2332.5 1609.7 L2333.6 1609.1 L2334.6 1608.9 L2335.6 1608.7 L2336.6 1608.6 L2337.6 1608.0 L2338.6 1608.0 L2339.6 1609.6 L2340.6 1609.7 L2341.6 1608.0 L2342.7 1609.7 L2343.7 1608.0 L2344.7 1609.8 L2345.7 1608.8 L2346.7 1609.8 L2347.7 1609.8 L2348.7 1609.4 L2349.7 1608.4 L2350.7 1608.6 L2351.7 1609.4 L2352.8 1609.8 L2353.8 1609.3 L2354.8 1609.7 L2355.8 1609.6 L2356.8 1609.0 L2357.8 1609.0 L2358.8 1608.1 L2359.8 1609.9 L2360.8 1608.9 L2361.9 1608.9 L2362.9 1609.8 L2363.9 1609.3 L2364.9 1609.8 L2365.9 1608.2 L2366.9 1609.3 L2367.9 1609.9 L2368.9 1609.1 L2369.9 1609.0 L2371.0 1608.2 L2372.0 1608.5 L2373.0 1609.6 L2374.0 1608.1 L2375.0 1610.0 L2376.0 1608.6 L2377.0 1610.0 L2378.0 1608.3 L2379.0 1609.7 L2380.0 1608.4 L2381.1 1608.4 L2382.1 1608.4 L2383.1 1609.9 L2384.1 1609.2 L2385.1 1609.9 L2386.1 1608.6 L2387.1 1608.0 L2388.1 1609.0 L2389.1 1608.7 L2390.2 1608.7 L2391.2 1609.8 L2392.2 1609.3 L2393.2 1609.4 L2394.2 1608.5 L2395.2 1609.2 L2396.2 1609.3 L2397.2 1608.9 L2398.2 1609.7 L2399.3 1610.0 L2400.3 1609.6 L2401.3 1610.0 L2402.3 1608.7 L2403.3 1609.1 L2404.3 1608.8 L2405.3 1608.9 L2406.3 1610.0 L2407.3 1608.4" fill="none" stroke="#ee4458" stroke-width="2.8" stroke-linejoin="round"/>
</g>
<path d="M134.5 1090.0 L2503.0 1090.0 L2503.0 1610.0 L134.5 1610.0 Z" fill="none" stroke="#a0a0a0" stroke-width="2"/>
<line x1="134.5" y1="1090.0" x2="134.5" y2="1610.0" stroke="#888" stroke-width="2"/>
<line x1="134.5" y1="1610.0" x2="2503.0" y2="1610.0" stroke="#888" stroke-width="2"/>
<line x1="307.0" y1="1610.0" x2="307.0" y2="1615.0" stroke="#888" stroke-width="2"/>
<text x="307.0" y="1645" text-anchor="middle" class="ax">200</text>
<line x1="509.1" y1="1610.0" x2="509.1" y2="1615.0" stroke="#888" stroke-width="2"/>
<text x="509.1" y="1645" text-anchor="middle" class="ax">300</text>
<line x1="711.3" y1="1610.0" x2="711.3" y2="1615.0" stroke="#888" stroke-width="2"/>
<text x="711.3" y="1645" text-anchor="middle" class="ax">400</text>
<line x1="913.5" y1="1610.0" x2="913.5" y2="1615.0" stroke="#888" stroke-width="2"/>
<text x="913.5" y="1645" text-anchor="middle" class="ax">500</text>
<line x1="1115.6" y1="1610.0" x2="1115.6" y2="1615.0" stroke="#888" stroke-width="2"/>
<text x="1115.6" y="1645" text-anchor="middle" class="ax">600</text>
<line x1="1317.8" y1="1610.0" x2="1317.8" y2="1615.0" stroke="#888" stroke-width="2"/>
<text x="1317.8" y="1645" text-anchor="middle" class="ax">700</text>
<line x1="1519.9" y1="1610.0" x2="1519.9" y2="1615.0" stroke="#888" stroke-width="2"/>
<text x="1519.9" y="1645" text-anchor="middle" class="ax">800</text>
<line x1="1722.0" y1="1610.0" x2="1722.0" y2="1615.0" stroke="#888" stroke-width="2"/>
<text x="1722.0" y="1645" text-anchor="middle" class="ax">900</text>
<line x1="1924.2" y1="1610.0" x2="1924.2" y2="1615.0" stroke="#888" stroke-width="2"/>
<text x="1924.2" y="1645" text-anchor="middle" class="ax">1000</text>
<line x1="2126.4" y1="1610.0" x2="2126.4" y2="1615.0" stroke="#888" stroke-width="2"/>
<text x="2126.4" y="1645" text-anchor="middle" class="ax">1100</text>
<line x1="2328.5" y1="1610.0" x2="2328.5" y2="1615.0" stroke="#888" stroke-width="2"/>
<text x="2328.5" y="1645" text-anchor="middle" class="ax">1200</text>
<line x1="129.5" y1="1610.0" x2="134.5" y2="1610.0" stroke="#888" stroke-width="2"/>
<text x="120" y="1618.5" text-anchor="end" class="ax">0</text>
<line x1="129.5" y1="1543.3" x2="134.5" y2="1543.3" stroke="#888" stroke-width="2"/>
<text x="120" y="1551.8" text-anchor="end" class="ax">1000</text>
<line x1="129.5" y1="1476.6" x2="134.5" y2="1476.6" stroke="#888" stroke-width="2"/>
<text x="120" y="1485.1" text-anchor="end" class="ax">2000</text>
<line x1="129.5" y1="1410.0" x2="134.5" y2="1410.0" stroke="#888" stroke-width="2"/>
<text x="120" y="1418.5" text-anchor="end" class="ax">3000</text>
<line x1="129.5" y1="1343.3" x2="134.5" y2="1343.3" stroke="#888" stroke-width="2"/>
<text x="120" y="1351.8" text-anchor="end" class="ax">4000</text>
<line x1="129.5" y1="1276.6" x2="134.5" y2="1276.6" stroke="#888" stroke-width="2"/>
<text x="120" y="1285.1" text-anchor="end" class="ax">5000</text>
<line x1="129.5" y1="1209.9" x2="134.5" y2="1209.9" stroke="#888" stroke-width="2"/>
<text x="120" y="1218.4" text-anchor="end" class="ax">6000</text>
<line x1="129.5" y1="1143.2" x2="134.5" y2="1143.2" stroke="#888" stroke-width="2"/>
<text x="120" y="1151.7" text-anchor="end" class="ax">7000</text>
<text x="1317" y="1681" text-anchor="middle" class="ax">Raman Shift (cm&#8315;&#185;)</text>
<text transform="translate(49 1349) rotate(-90)" text-anchor="middle" class="ax">Intensity</text>
<line x1="2165" y1="1114.5" x2="2195" y2="1114.5" stroke="#f04050" stroke-width="3"/>
<text x="2203" y="1123" class="ax">Pyrope__R040159...cif</text>
<line x1="2165" y1="1150.5" x2="2195" y2="1150.5" stroke="#4a55b0" stroke-width="3"/>
<text x="2203" y="1159" class="ax">Pyrope &#8226; 780 nm (600 mW)</text>
</svg>
<svg style="position:absolute;left:13px;top:13px" width="28" height="28" viewBox="0 0 28 28"><defs><radialGradient id="tg" cx="0.4" cy="0.35" r="0.7"><stop offset="0" stop-color="#9fdcff"/><stop offset="0.6" stop-color="#2f7fd6"/><stop offset="1" stop-color="#1c4fa8"/></radialGradient></defs><circle cx="14" cy="14" r="12.5" fill="url(#tg)"/><path d="M3 12 C5 8 9 8 11 11 C12 14 9 16 10 19 C8 21 5 19 4 16 Z" fill="#3cb43c"/><path d="M17 6 C20 6 24 9 25 13 C24 17 21 15 19 17 C17 15 18 11 16 9 Z" fill="#2aa040"/><path d="M9 21 C11 20 13 23 12 26 C10 26 8 24 9 21 Z" fill="#2aa040"/><path d="M9 3 L13 3 L18 10 L14 10 Z" fill="#f05a30"/><path d="M15 11 L19 11 L23 25 L19 26 Z" fill="#ffffff"/><path d="M19 21 L23 20 L24 26 L20 27 Z" fill="#9a78d0"/></svg>
<div style="left:2344px;top:12px;width:57px;height:35.5px;border:2px solid #6a7a90;border-radius:3px;background:linear-gradient(#c8daf0 0%,#b4cbe8 45%,#94b2d8 50%,#b8cfe8 100%);box-shadow:inset 0 0 0 1.5px rgba(255,255,255,0.55)"></div>
<div style="left:2406px;top:12px;width:57px;height:35.5px;border:2px solid #6a7a90;border-radius:3px;background:linear-gradient(#c8daf0 0%,#b4cbe8 45%,#94b2d8 50%,#b8cfe8 100%);box-shadow:inset 0 0 0 1.5px rgba(255,255,255,0.55)"></div>
<div style="left:2467px;top:12px;width:57px;height:35.5px;border:2px solid #5a1a1a;border-radius:3px;background:linear-gradient(#e8a496 0%,#d47868 45%,#c0392b 50%,#d2705e 100%);box-shadow:inset 0 0 0 1.5px rgba(255,255,255,0.55)"></div>
<div style="left:2362px;top:28px;width:22px;height:9px;background:#fff;border:1.5px solid #404a5a;border-radius:2px"></div>
<div style="left:2423px;top:19px;width:23px;height:19px;background:#fff;border:1.5px solid #404a5a;border-radius:2px"><div style="left:5px;top:5px;width:10px;height:6px;background:#5a6a80;border:1.5px solid #404a5a"></div></div>
<svg style="position:absolute;left:2482px;top:17px" width="27" height="24" viewBox="0 0 27 24"><path d="M6 5 L21 19 M21 5 L6 19" stroke="#4a3a40" stroke-width="8" stroke-linecap="round"/><path d="M6 5 L21 19 M21 5 L6 19" stroke="#fafafa" stroke-width="4.8" stroke-linecap="round"/></svg>
<svg style="position:absolute;left:2462px;top:118px" width="48" height="50" viewBox="0 0 48 50"><defs><radialGradient id="gg" cx="0.45" cy="0.35" r="0.7"><stop offset="0" stop-color="#b8e4ff"/><stop offset="0.55" stop-color="#3a8ee0"/><stop offset="1" stop-color="#1d5cb8"/></radialGradient><radialGradient id="cg" cx="0.5" cy="0.4" r="0.6"><stop offset="0" stop-color="#f4fbff"/><stop offset="1" stop-color="#9fd0ee"/></radialGradient></defs><circle cx="24" cy="24" r="21.5" fill="url(#gg)"/><path d="M4 16 C8 8 14 9 16 14 C18 20 14 24 16 30 C13 34 8 31 5 26 Z" fill="#48b03a"/><path d="M26 6 C32 6 38 10 40 16 C37 20 33 18 30 20 C28 16 30 12 26 10 Z" fill="#3aa040"/><path d="M10 34 C14 33 18 38 16 42 C12 41 9 38 10 34 Z" fill="#3aa040"/><circle cx="33" cy="33" r="12" fill="url(#cg)" stroke="#8a8a8a" stroke-width="2"/><path d="M28 28 L33 35 L38 28" fill="none" stroke="#222" stroke-width="3"/></svg>
<svg style="position:absolute;left:2462px;top:176px" width="48" height="48" viewBox="0 0 48 48"><path d="M10 42 C4 34 4 24 12 16 L7 11 L26 10 L24 28 L19 23 C14 28 13 34 16 42 Z" fill="#58b848" stroke="#1e8a2a" stroke-width="2" stroke-linejoin="round"/><path d="M34 8 C42 14 44 26 36 34 L41 39 L22 40 L24 22 L29 27 C34 22 35 14 32 8 Z" fill="#e83a2a" stroke="#c82020" stroke-width="2" stroke-linejoin="round"/><path d="M23 38 L24 26 L30 32 Z" fill="#f4a060"/></svg>
<svg style="position:absolute;left:2464px;top:235px" width="46" height="46" viewBox="0 0 46 46"><defs><linearGradient id="fb" x1="0" y1="0" x2="1" y2="1"><stop offset="0" stop-color="#b0d8f4"/><stop offset="0.45" stop-color="#ffffff"/><stop offset="1" stop-color="#ffffff"/></linearGradient></defs><rect x="1.5" y="1.5" width="42" height="43" rx="4" fill="url(#fb)" stroke="#7a98d0" stroke-width="2"/><g fill="none" stroke="#3a64c0" stroke-width="2.2"><ellipse cx="23.5" cy="26" rx="3" ry="3.5" stroke-dasharray="14 6"/><ellipse cx="23.5" cy="25" rx="6.5" ry="7.5" stroke-dasharray="34 8"/><ellipse cx="23.5" cy="24" rx="10" ry="11.5" stroke-dasharray="50 12"/><ellipse cx="23.5" cy="23" rx="13.5" ry="15" stroke-dasharray="70 20"/></g></svg>
<svg style="position:absolute;left:2462px;top:295px" width="48" height="40" viewBox="0 0 48 40"><defs><linearGradient id="ub" x1="0" y1="0" x2="1" y2="1"><stop offset="0" stop-color="#a8d4f4"/><stop offset="1" stop-color="#3a8ad8"/></linearGradient></defs><path d="M42 32 C44 20 40 6 28 6 C20 6 15 12 12 17 L6 12 L6 36 L28 32 L20 26 C23 20 27 15 33 16 C38 18 40 24 42 32 Z" fill="url(#ub)" stroke="#2a78d0" stroke-width="2" stroke-linejoin="round"/></svg>
<div style="left:2526px;top:2px;width:6px;height:3px;background:#222"></div>
<div style="left:2px;top:2px;width:8px;height:6px;border-left:2.5px solid #111;border-top:2.5px solid #111;border-top-left-radius:4px"></div>
</body></html>
